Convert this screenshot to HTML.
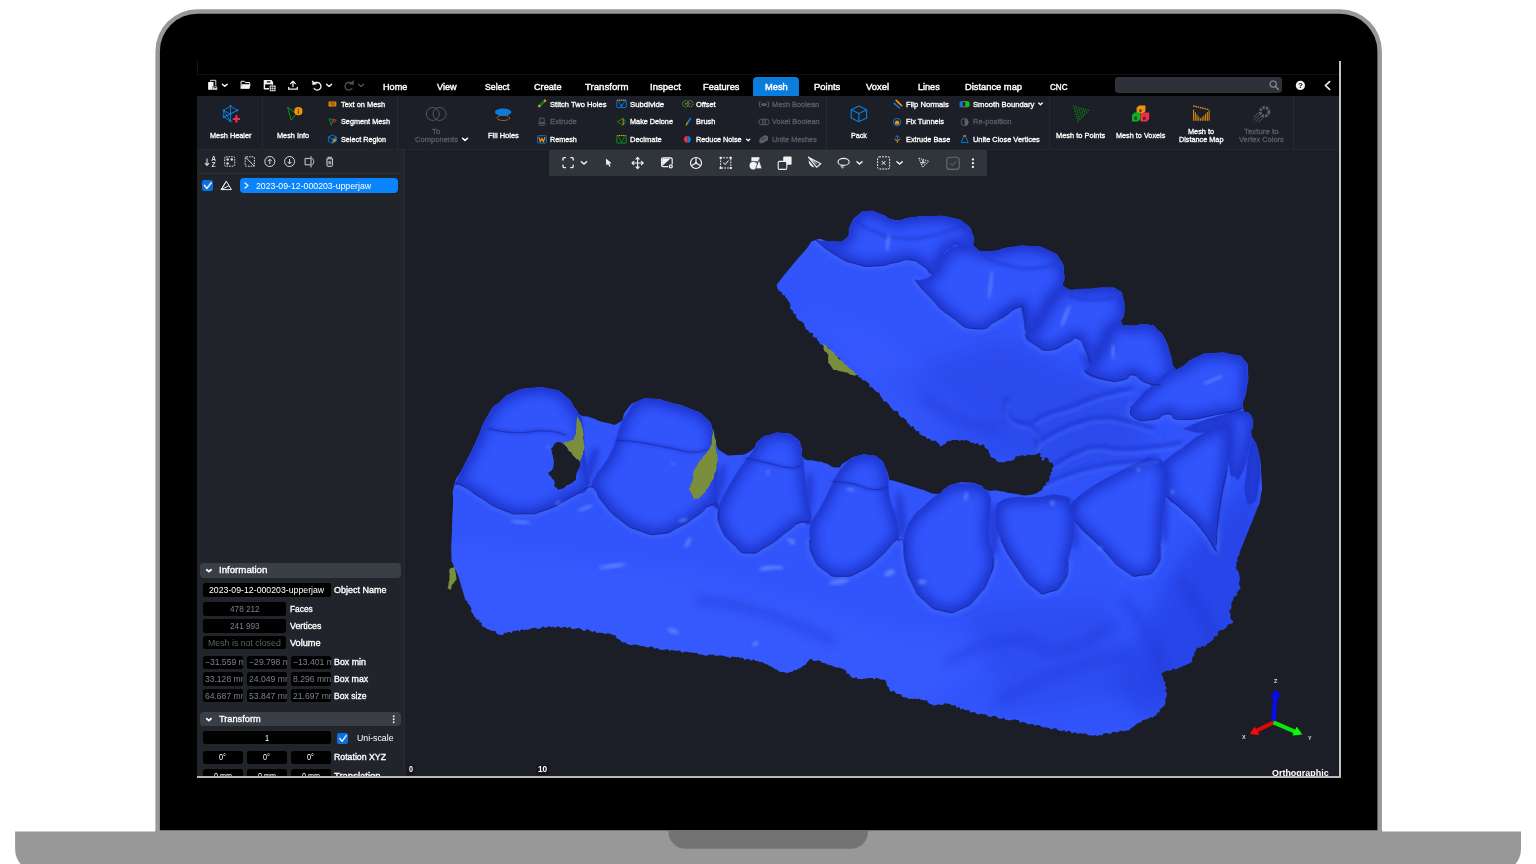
<!DOCTYPE html>
<html><head><meta charset="utf-8"><title>Mesh</title>
<style>
html,body{margin:0;padding:0;background:#fff;width:1536px;height:864px;overflow:hidden}
body{position:relative;font-family:"Liberation Sans",sans-serif}
.r{position:absolute;box-sizing:border-box}
.t{position:absolute;white-space:nowrap;line-height:1;transform-origin:0 0;display:block}
#frame{position:absolute;left:155.5px;top:9px;width:1226.5px;height:840px;background:#000;border:4.5px solid #989898;border-radius:41px 41px 0 0;box-sizing:border-box}
#base{position:absolute;left:15px;top:830.5px;width:1506px;height:42px;background:#989898;border-radius:0 0 23px 23px}
#notch{position:absolute;left:668.5px;top:830.5px;width:199.5px;height:18.3px;background:#737373;border-radius:0 0 17px 17px}
#screen{position:absolute;left:196.5px;top:61px;width:1144.2px;height:717px;overflow:hidden;background:#000}
#in{will-change:transform;position:absolute;left:-196.5px;top:-61px;width:1536px;height:864px}
</style></head><body>
<svg style="position:absolute;left:0;top:0" width="1536" height="864" viewBox="0 0 1536 864">
<path d="M155.4,834 V51.2 A42,42 0 0 1 197.4,9.2 H1339.9 A42,42 0 0 1 1381.9,51.2 V834 Z" fill="#989898"/>
<path d="M159.9,830.5 V51.2 A37.5,37.5 0 0 1 197.4,13.7 H1339.9 A37.5,37.5 0 0 1 1377.4,51.2 V830.5 Z" fill="#000"/>
</svg>
<div id="screen"><div id="in">
<div class="r" style="left:196.50px;top:61.00px;width:1144.50px;height:13.50px;background:#000;border-radius:0;border-left:1px solid #151515;border-bottom:1px solid #101214;"></div>
<div class="r" style="left:196.50px;top:74.50px;width:1144.50px;height:21.50px;background:#000;border-radius:0;"></div>
<div class="r" style="left:196.50px;top:96.00px;width:1144.50px;height:53.50px;background:#1c1f27;border-radius:0;border-bottom:1px solid #23272e;"></div>
<div class="r" style="left:404.50px;top:150.00px;width:936.50px;height:628.00px;background:#1b1e27;border-radius:0;"></div>
<div class="r" style="left:196.50px;top:150.00px;width:208.00px;height:628.00px;background:#21252b;border-radius:0;border-right:1px solid #272b32;"></div>
<svg class="r" style="left:404.5px;top:150px" width="935" height="627" viewBox="404.5 150 935 627"><defs><filter id="b1" x="-20%" y="-20%" width="140%" height="140%"><feGaussianBlur stdDeviation="0.45"/></filter><filter id="b2" x="-30%" y="-30%" width="160%" height="160%"><feGaussianBlur stdDeviation="1.4"/></filter><filter id="b3" x="-50%" y="-50%" width="200%" height="200%"><feGaussianBlur stdDeviation="2.8"/></filter><filter id="b5" x="-50%" y="-50%" width="200%" height="200%"><feGaussianBlur stdDeviation="4.5"/></filter><filter id="b8" x="-50%" y="-50%" width="200%" height="200%"><feGaussianBlur stdDeviation="10"/></filter><clipPath id="mc"><path d="M465.0,600.0C464.0,596.7 464.5,598.3 462.0,590.0C459.5,581.7 460.5,583.3 457.5,575.0C454.5,566.7 455.2,571.7 453.0,565.0C450.8,558.3 451.5,566.7 451.0,555.0C450.5,543.3 451.0,546.7 451.5,530.0C452.0,513.3 451.7,520.0 452.5,505.0C453.3,490.0 450.5,497.5 453.8,485.0C457.1,472.5 455.4,481.7 462.5,467.5C469.6,453.3 466.7,460.0 475.0,442.5C483.3,425.0 479.2,428.8 487.5,415.0C495.8,401.2 491.7,408.5 500.0,401.0C508.3,393.5 502.5,396.8 512.5,392.5C522.5,388.2 517.5,389.2 530.0,388.0C542.5,386.8 538.3,386.1 550.0,388.8C561.7,391.5 556.7,389.3 565.0,396.0C573.3,402.7 570.0,402.5 575.0,408.8C580.0,415.1 575.0,412.1 580.0,415.0C585.0,417.9 581.7,415.0 590.0,417.5C598.3,420.0 595.4,420.8 605.0,422.5C614.6,424.2 611.8,426.7 618.8,422.5C625.8,418.3 619.8,417.2 626.0,410.0C632.2,402.8 628.7,404.7 637.5,401.0C646.3,397.3 641.7,398.3 652.5,398.8C663.3,399.3 657.5,399.2 670.0,402.5C682.5,405.8 678.3,403.8 690.0,408.8C701.7,413.8 697.5,410.4 705.0,417.5C712.5,424.6 709.2,421.7 712.5,430.0C715.8,438.3 711.7,435.0 715.0,442.5C718.3,450.0 715.8,448.3 722.5,452.5C729.2,456.7 725.8,455.5 735.0,455.0C744.2,454.5 742.1,456.0 750.0,451.0C757.9,446.0 752.1,445.5 758.8,440.0C765.5,434.5 762.1,436.8 770.0,434.5C777.9,432.2 774.2,432.0 782.5,433.0C790.8,434.0 788.8,432.7 795.0,437.5C801.2,442.3 798.5,440.8 801.0,447.5C803.5,454.2 797.8,453.0 802.5,457.5C807.2,462.0 807.8,459.2 815.0,461.0C822.2,462.8 816.8,460.8 824.0,463.0C831.2,465.2 829.8,467.7 836.5,467.5C843.2,467.3 837.3,466.3 844.0,462.5C850.7,458.7 848.2,458.5 856.5,456.0C864.8,453.5 861.5,454.1 869.0,455.0C876.5,455.9 873.7,454.6 879.0,458.8C884.3,463.0 881.7,460.4 885.0,467.5C888.3,474.6 887.7,475.8 889.0,480.0C892.3,480.8 889.0,479.6 899.0,482.5C909.0,485.4 906.5,485.0 919.0,488.8C931.5,492.6 928.2,493.8 936.5,493.8C944.8,493.8 938.2,492.1 944.0,488.8C949.8,485.5 946.5,485.9 954.0,483.8C961.5,481.7 958.2,482.1 966.5,482.5C974.8,482.9 972.3,482.5 979.0,485.0C985.7,487.5 979.8,488.0 986.5,490.0C993.2,492.0 989.8,489.7 999.0,491.0C1008.2,492.3 1004.0,492.5 1014.0,493.8C1024.0,495.1 1019.8,496.3 1029.0,495.0C1038.2,493.7 1037.3,491.7 1041.5,490.0L1041.5,490.0L1042.3,488.0L1043.2,486.0L1045.6,485.3L1045.5,482.6L1047.8,481.7L1049.0,480.0L1049.2,478.1L1049.0,476.1L1050.9,474.8L1050.2,472.5L1051.9,471.2L1051.5,469.1L1052.2,467.3L1054.0,466.0L1052.6,464.7L1052.2,462.5L1049.4,462.5L1048.4,460.9L1048.0,458.7L1046.5,457.5L1044.2,457.6L1043.4,459.7L1042.0,461.0L1041.1,459.4L1042.1,457.1L1038.9,456.4L1040.6,453.8L1039.0,452.5L1037.2,453.6L1035.3,454.5L1033.3,455.1L1031.1,455.1L1029.0,455.0L1026.8,454.2L1024.9,456.3L1022.7,455.3L1020.6,455.3L1018.6,456.2L1016.5,456.0L1014.9,456.9L1014.2,459.1L1012.7,460.1L1011.0,460.7L1009.0,461.0L1006.9,460.8L1005.0,461.8L1003.1,462.5L1001.0,461.9L999.0,462.5L997.4,461.6L995.7,461.0L995.0,458.8L993.3,458.0L991.5,457.5L989.8,456.3L989.5,454.1L988.3,452.5L988.2,450.3L986.7,448.9L984.5,448.0L984.0,446.0L982.6,444.0L979.9,445.8L978.3,444.4L976.7,442.8L974.3,443.9L972.7,442.3L970.4,442.9L969.0,441.0L967.1,440.4L965.2,440.0L963.2,440.4L961.3,439.4L959.2,441.0L957.4,439.7L955.4,439.9L953.5,439.9L951.5,440.0L949.9,441.1L947.6,441.1L945.8,441.9L944.9,444.1L942.9,444.6L941.5,446.0L939.3,446.2L938.6,443.7L936.9,442.9L935.9,441.1L934.0,440.6L931.6,441.1L930.2,439.9L929.0,438.3L926.5,439.1L925.5,437.0L924.0,436.0L921.9,435.7L920.4,434.7L918.8,433.7L918.7,430.9L916.0,431.3L914.8,429.8L913.6,428.4L913.0,426.1L910.1,426.9L909.3,424.9L908.0,423.5L906.5,422.5L906.0,420.3L904.5,419.1L903.2,417.7L900.6,417.6L899.6,415.9L898.1,414.7L897.9,412.3L896.7,410.8L893.6,411.1L892.4,409.7L891.1,408.3L889.8,406.9L889.0,405.0L887.6,403.7L886.5,402.1L884.4,401.4L882.5,400.6L882.0,398.4L880.5,397.1L879.6,395.3L879.1,393.1L877.1,392.3L875.4,391.3L874.0,390.0L872.8,388.5L871.6,387.1L868.9,387.2L869.2,384.1L867.6,383.1L866.3,381.7L864.8,380.6L862.6,380.2L861.2,379.0L860.0,377.5L857.8,377.1L857.4,374.7L854.8,374.7L853.4,373.5L852.3,371.9L850.8,370.8L849.7,369.1L847.7,368.5L846.2,367.4L845.0,365.8L843.5,364.6L842.6,362.8L840.5,362.3L840.0,360.0L839.3,357.9L837.3,357.2L834.9,357.1L833.7,355.6L832.4,354.1L831.0,352.8L829.1,352.1L829.0,349.2L827.8,347.6L825.4,347.6L823.9,346.3L822.5,345.0L820.3,344.5L819.0,343.2L818.1,341.3L816.6,340.1L816.5,337.6L813.7,337.6L812.1,336.6L812.7,333.3L810.4,332.8L808.3,332.3L807.8,330.1L805.3,329.8L805.0,327.5L803.8,325.9L803.6,323.6L802.1,322.3L800.5,321.1L798.2,320.5L797.2,318.8L795.5,317.6L795.6,315.0L793.8,313.9L792.5,312.5L792.4,310.5L790.4,309.4L789.3,307.9L790.0,305.4L789.6,303.5L788.4,302.0L787.5,300.4L786.7,298.7L785.0,297.5L784.5,295.5L782.1,294.9L781.7,292.8L780.1,291.5L778.2,290.5L777.1,289.0L776.6,286.9L776.0,285.0C780.7,279.2 780.3,279.2 790.0,267.5C799.7,255.8 796.7,259.2 805.0,250.0C813.3,240.8 806.7,243.0 815.0,240.0C823.3,237.0 820.0,241.4 830.0,241.0C840.0,240.6 838.3,244.1 845.0,238.8C851.7,233.5 845.8,232.9 850.0,225.0C854.2,217.1 851.7,219.7 857.5,215.0C863.3,210.3 860.0,211.4 867.5,211.0C875.0,210.6 870.8,210.8 880.0,213.8C889.2,216.8 885.0,218.8 895.0,220.0C905.0,221.2 898.3,218.8 910.0,217.5C921.7,216.2 916.7,216.0 930.0,216.0C943.3,216.0 938.3,214.9 950.0,217.5C961.7,220.1 957.5,218.0 965.0,223.8C972.5,229.6 969.2,227.1 972.5,235.0C975.8,242.9 969.2,242.2 975.0,247.5C980.8,252.8 978.3,251.2 990.0,251.0C1001.7,250.8 996.7,248.7 1010.0,247.0C1023.3,245.3 1017.5,245.0 1030.0,246.0C1042.5,247.0 1037.5,245.3 1047.5,250.0C1057.5,254.7 1054.6,251.7 1060.0,260.0C1065.4,268.3 1062.1,265.8 1063.8,275.0C1065.5,284.2 1057.9,282.9 1065.0,287.5C1072.1,292.1 1071.7,288.8 1085.0,288.8C1098.3,288.8 1094.2,287.1 1105.0,287.5C1115.8,287.9 1111.7,286.7 1117.5,290.0C1123.3,293.3 1120.4,290.0 1122.5,297.5C1124.6,305.0 1124.3,304.2 1123.8,312.5C1123.3,320.8 1118.9,318.2 1121.0,322.5C1123.1,326.8 1121.2,324.8 1130.0,325.5C1138.8,326.2 1138.3,323.0 1147.5,324.5C1156.7,326.0 1151.7,324.8 1157.5,330.0C1163.3,335.2 1160.8,331.7 1165.0,340.0C1169.2,348.3 1167.1,345.8 1170.0,355.0C1172.9,364.2 1170.5,363.3 1173.8,367.5C1177.1,371.7 1172.9,370.8 1180.0,367.5C1187.1,364.2 1184.2,362.3 1195.0,357.5C1205.8,352.7 1200.0,354.0 1212.5,353.0C1225.0,352.0 1222.1,352.2 1232.5,354.5C1242.9,356.8 1238.8,354.0 1243.8,360.0C1248.8,366.0 1246.8,362.5 1247.5,372.5C1248.2,382.5 1247.7,378.3 1246.0,390.0C1244.3,401.7 1241.2,399.2 1242.5,407.5C1243.8,415.8 1246.7,409.2 1250.0,415.0C1253.3,420.8 1252.2,418.3 1252.5,425.0C1252.8,431.7 1249.3,426.7 1251.0,435.0C1252.7,443.3 1254.2,435.8 1257.5,450.0C1260.8,464.2 1260.2,461.7 1261.0,477.5C1261.8,493.3 1262.0,485.8 1260.0,497.5C1258.0,509.2 1259.7,500.0 1255.0,512.5C1250.3,525.0 1251.4,521.7 1246.0,535.0C1240.6,548.3 1241.2,546.7 1238.8,552.5L1238.8,552.5L1238.9,554.7L1237.4,556.6L1236.2,558.5L1237.1,560.9L1235.4,562.7L1236.0,565.0L1235.1,567.3L1235.6,569.3L1237.4,571.1L1238.2,573.1L1238.5,575.1L1239.0,577.1L1239.3,579.2L1238.6,581.4L1238.2,583.6L1238.8,585.6L1240.0,587.5L1239.0,589.3L1237.5,590.9L1236.1,592.5L1236.6,595.2L1234.3,596.2L1232.7,597.7L1232.5,600.0L1231.2,601.9L1230.6,604.0L1230.7,606.3L1230.8,608.6L1228.7,610.2L1228.8,612.5L1229.9,614.3L1229.5,616.8L1229.9,618.9L1232.0,620.4L1232.5,622.5L1230.8,623.8L1228.3,623.6L1226.8,625.2L1225.8,627.5L1224.1,628.7L1222.3,629.7L1220.0,630.0L1217.9,631.0L1216.9,632.9L1217.0,635.6L1214.3,636.2L1212.8,637.6L1212.5,640.0L1210.5,640.7L1209.1,642.5L1207.1,643.1L1205.9,645.1L1204.2,646.4L1201.2,645.4L1200.0,647.5L1196.5,647.5L1195.4,649.3L1195.0,651.3L1193.3,652.9L1193.8,655.3L1192.0,656.8L1191.4,658.8L1191.5,661.0L1190.1,662.6L1188.2,663.4L1186.4,664.3L1184.7,665.3L1182.5,665.4L1181.1,667.1L1179.0,667.5L1177.1,668.3L1175.4,669.5L1172.9,668.1L1171.3,670.1L1169.3,670.4L1167.3,670.6L1165.1,670.4L1163.5,672.1L1161.5,672.5L1160.8,674.8L1162.3,676.6L1162.6,678.7L1163.1,680.7L1164.8,682.5L1164.1,684.7L1165.2,686.7L1166.0,688.6L1164.4,691.1L1166.4,692.8L1166.0,695.0L1165.7,697.0L1164.6,698.9L1164.7,701.0L1164.8,703.1L1164.0,705.0L1162.5,706.5L1161.0,708.0L1159.2,709.2L1159.0,712.0L1156.7,712.8L1155.9,714.9L1154.0,716.0L1152.3,717.4L1149.8,717.1L1148.2,718.6L1146.2,719.3L1144.0,719.7L1141.9,720.2L1140.4,722.2L1138.3,722.7L1136.5,723.8L1134.6,725.3L1132.7,726.9L1130.6,728.1L1129.0,730.0L1126.9,730.5L1124.8,730.7L1122.8,731.3L1120.4,730.5L1118.5,731.6L1116.5,732.5L1114.2,731.8L1112.0,732.0L1110.0,734.1L1107.7,733.6L1105.4,732.9L1103.2,733.5L1101.3,735.6L1099.0,735.0L1096.8,735.9L1094.6,734.9L1092.4,735.7L1090.2,735.2L1088.0,735.5L1085.9,733.8L1083.7,733.4L1081.5,734.0L1079.7,732.7L1077.4,734.3L1075.6,732.5L1073.6,732.4L1071.4,733.4L1069.6,731.2L1067.7,730.7L1065.4,732.3L1063.7,730.1L1061.5,731.0L1059.4,730.8L1057.3,730.0L1055.5,728.3L1053.4,728.2L1050.9,729.4L1049.0,728.2L1046.9,727.5L1044.7,727.4L1042.6,727.3L1040.6,726.5L1038.7,724.9L1036.5,725.0L1034.2,725.8L1032.4,724.0L1030.2,723.9L1027.9,724.6L1026.0,723.3L1024.1,722.2L1021.9,722.1L1019.6,722.8L1018.0,720.0L1015.8,720.1L1013.8,719.2L1011.5,720.0L1009.2,720.6L1007.2,719.8L1005.0,720.1L1003.3,717.8L1001.0,718.7L998.8,718.7L996.9,717.6L995.0,715.9L992.9,715.8L990.6,716.9L988.4,716.8L986.5,715.5L984.7,713.9L982.5,714.3L980.5,713.5L978.1,714.5L976.0,714.1L974.3,712.0L972.1,712.2L969.9,712.6L968.4,709.9L966.1,710.2L964.0,710.0L962.4,708.5L959.8,709.5L958.7,706.8L956.1,707.9L955.0,705.3L952.7,705.5L950.7,705.0L949.0,703.8L946.8,703.7L944.6,702.9L942.5,704.7L940.3,705.1L938.1,704.2L935.9,705.0L933.7,705.4L931.5,704.5L929.2,703.7L927.4,702.4L926.5,700.0L924.4,700.5L922.4,700.0L920.4,699.8L918.6,698.3L916.4,699.3L914.5,698.5L912.4,699.1L910.5,698.4L908.3,699.0L906.5,697.5L904.3,697.3L902.1,697.0L900.9,694.4L898.8,694.0L896.5,694.1L894.8,692.6L893.3,690.6L890.5,691.8L889.0,690.0L888.7,687.5L886.8,685.9L886.0,683.7L885.8,681.2L884.0,679.5L882.0,679.7L879.9,679.2L877.9,678.6L876.0,677.7L873.8,679.3L871.9,677.9L869.8,678.1L867.8,678.1L865.7,678.6L863.7,678.6L861.6,679.3L859.6,679.0L857.5,679.0L855.6,677.1L853.5,678.3L851.5,677.5L849.5,676.1L849.0,673.8L846.4,673.5L845.5,670.5L843.5,669.2L841.2,668.4L839.0,667.5L836.7,667.4L834.5,666.9L832.4,666.1L830.4,665.0L828.0,665.1L826.1,663.8L824.0,663.0L821.7,663.1L819.9,660.8L817.8,660.3L815.3,660.9L813.0,661.1L811.2,658.8L808.8,659.5L807.7,661.3L806.1,662.6L805.3,664.7L803.1,665.4L801.5,666.6L800.0,668.0L797.9,668.6L795.9,670.0L793.6,669.9L791.8,671.8L789.5,671.8L787.4,672.9L785.0,672.5L782.8,671.9L780.4,671.9L778.3,671.2L776.5,669.6L774.3,669.0L772.5,667.5L770.7,666.5L768.8,665.8L767.1,664.5L765.2,663.9L763.3,662.9L761.6,661.7L759.3,662.1L757.5,661.0L755.2,661.1L753.3,659.0L750.8,660.8L748.8,658.9L746.6,658.8L744.2,659.9L742.3,657.5L740.0,658.0L738.0,656.8L735.9,657.3L733.8,656.8L731.7,656.5L729.5,658.0L727.5,656.8L725.4,656.7L723.4,655.7L721.3,655.6L719.2,655.3L717.1,655.8L715.0,655.8L713.1,654.5L710.9,654.8L708.8,654.5L706.6,655.4L704.4,655.6L702.4,655.1L700.4,654.2L698.2,654.6L696.4,652.5L694.2,652.9L692.1,652.4L690.0,652.5L688.0,651.9L685.9,651.5L683.7,651.8L681.5,652.8L679.7,650.5L677.6,650.4L675.4,650.7L673.3,650.4L671.3,649.8L669.0,651.1L667.2,649.1L665.0,649.5L662.8,649.8L660.7,650.0L658.7,649.2L656.7,647.7L654.5,648.8L652.6,647.1L650.6,646.2L648.3,647.2L646.2,647.2L644.2,646.6L642.1,645.8L640.0,646.0L637.9,644.9L635.7,644.8L633.5,644.3L631.0,645.3L628.9,644.7L626.7,644.0L624.8,642.3L622.5,642.5L620.6,641.4L619.6,639.4L617.1,638.9L615.7,637.3L615.0,635.0L612.8,635.3L610.9,633.9L608.8,633.5L606.7,633.2L604.5,633.9L602.5,633.0L600.4,632.8L598.3,632.4L596.1,633.0L594.3,630.7L592.0,632.1L590.0,631.0L588.1,629.4L586.0,629.2L583.6,631.2L581.6,629.8L579.7,628.5L577.7,627.8L575.4,628.8L573.2,628.9L571.1,628.7L569.3,626.5L567.0,628.1L565.0,627.0L563.0,626.8L561.0,628.0L559.0,627.0L557.0,626.0L555.0,628.1L553.0,626.4L551.0,627.2L549.0,626.3L547.0,626.8L545.0,628.0L543.0,626.3L541.0,627.4L539.0,628.7L537.0,628.8L535.0,627.5L533.0,627.9L531.0,628.3L529.1,629.1L527.2,629.8L525.1,629.6L523.1,630.1L520.8,629.1L519.2,631.6L516.9,630.0L515.0,631.0L512.6,630.7L511.0,633.1L508.3,631.6L506.3,632.8L504.0,632.8L502.3,635.0L500.0,635.0L498.0,634.4L496.1,633.4L495.0,631.0L492.6,631.0L490.5,630.6L488.7,629.5L486.6,629.0L485.0,627.5L482.7,626.9L481.4,625.4L481.3,622.6L478.9,622.2L478.7,619.6L476.0,619.4L475.0,617.5L473.5,616.1L473.0,614.0L471.3,612.7L470.7,610.7L471.0,608.2L469.9,606.5L468.7,604.8L467.3,603.3L466.9,601.2L465.0,600.0Z"/></clipPath><clipPath id="cT1"><path d="M453.8,485.0C456.7,479.2 455.4,481.7 462.5,467.5C469.6,453.3 466.7,460.0 475.0,442.5C483.3,425.0 479.2,428.8 487.5,415.0C495.8,401.2 491.7,408.5 500.0,401.0C508.3,393.5 502.5,396.8 512.5,392.5C522.5,388.2 517.5,389.2 530.0,388.0C542.5,386.8 538.3,386.1 550.0,388.8C561.7,391.5 556.7,389.3 565.0,396.0C573.3,402.7 570.0,402.5 575.0,408.8C580.0,415.1 577.3,407.9 580.0,415.0C582.7,422.1 581.7,418.3 583.0,430.0C584.3,441.7 583.0,436.7 584.0,450.0C585.0,463.3 584.8,457.5 586.0,470.0C587.2,482.5 592.8,478.3 587.5,487.5C582.2,496.7 584.2,490.0 570.0,497.5C555.8,505.0 560.8,504.6 545.0,510.0C529.2,515.4 536.7,513.8 522.5,513.8C508.3,513.8 516.7,515.4 502.5,510.0C488.3,504.6 492.5,505.0 480.0,497.5C467.5,490.0 473.7,491.7 465.0,487.5C456.3,483.3 457.5,485.8 453.8,485.0Z"/></clipPath><clipPath id="cT2"><path d="M590.0,487.5C591.7,483.5 590.8,483.0 595.1,475.5C599.4,468.0 597.7,472.9 602.9,465.1C608.1,457.3 606.4,460.8 610.7,452.1C615.0,443.4 612.9,447.8 615.9,439.1C618.9,430.4 616.3,434.4 619.8,426.0C623.3,417.6 620.5,422.3 626.4,414.0C632.3,405.7 628.8,406.1 637.5,401.0C646.2,395.9 641.7,398.3 652.5,398.8C663.3,399.3 657.5,399.2 670.0,402.5C682.5,405.8 678.3,403.8 690.0,408.8C701.7,413.8 697.5,410.4 705.0,417.5C712.5,424.6 709.2,421.7 712.5,430.0C715.8,438.3 713.5,430.8 715.0,442.5C716.5,454.2 716.7,449.2 717.0,465.0C717.3,480.8 715.8,475.8 716.0,490.0C716.2,504.2 719.9,502.2 717.5,507.5C715.1,512.8 715.5,503.5 708.8,506.0C702.1,508.5 707.9,507.8 697.5,515.0C687.1,522.2 690.0,521.2 677.5,527.5C665.0,533.8 672.5,532.6 660.0,533.8C647.5,535.0 653.3,535.6 640.0,531.0C626.7,526.4 632.5,529.5 620.0,520.0C607.5,510.5 610.8,512.5 602.5,502.5C594.2,492.5 599.2,495.0 595.0,490.0C590.8,485.0 591.7,488.3 590.0,487.5Z"/></clipPath><clipPath id="cT3"><path d="M717.5,507.5C720.8,500.8 720.0,500.8 727.5,487.5C735.0,474.2 731.7,479.7 740.0,467.5C748.3,455.3 746.2,460.2 752.5,451.0C758.8,441.8 753.0,445.5 758.8,440.0C764.6,434.5 762.1,436.8 770.0,434.5C777.9,432.2 774.2,432.0 782.5,433.0C790.8,434.0 788.8,432.7 795.0,437.5C801.2,442.3 798.5,440.8 801.0,447.5C803.5,454.2 801.2,446.7 802.5,457.5C803.8,468.3 803.3,465.8 805.0,480.0C806.7,494.2 805.8,486.0 807.5,500.0C809.2,514.0 812.9,514.3 810.0,522.0C807.1,529.7 806.4,520.0 798.8,523.0C791.2,526.0 798.0,523.4 787.2,531.1C776.4,538.8 779.5,538.9 766.4,546.2C753.3,553.5 758.7,553.5 747.9,553.1C737.1,552.7 743.3,553.9 734.0,545.0C724.7,536.1 725.5,539.0 720.0,526.5C714.5,514.0 718.3,513.8 717.5,507.5Z"/></clipPath><clipPath id="cT4"><path d="M810.4,521.9C814.3,515.7 814.3,517.3 822.0,503.4C829.7,489.5 826.7,492.6 833.6,480.2C840.5,467.8 836.6,473.6 842.8,466.3C849.0,459.0 843.6,462.1 852.1,458.2C860.6,454.3 859.0,454.3 868.3,454.7C877.6,455.1 873.7,453.2 879.9,459.4C886.1,465.6 883.7,461.0 886.8,473.3C889.9,485.6 886.0,481.0 889.1,496.4C892.2,511.8 893.0,504.9 896.1,519.6C899.2,534.3 899.2,533.1 898.4,540.4C897.6,547.7 900.0,536.2 893.8,541.6C887.6,547.0 890.7,547.0 879.9,556.6C869.1,566.2 874.4,563.9 861.3,570.5C848.2,577.1 852.8,576.3 840.5,576.3C828.2,576.3 833.6,577.1 824.3,570.5C815.0,563.9 817.7,566.6 812.7,556.6C807.7,546.6 810.0,552.0 809.2,540.4C808.4,528.8 810.0,528.1 810.4,521.9Z"/></clipPath><clipPath id="cT5"><path d="M903.0,542.7C903.8,538.8 902.2,539.6 905.3,531.1C908.4,522.6 906.1,525.7 912.3,517.2C918.5,508.7 915.4,513.4 923.9,505.7C932.4,498.0 929.2,500.7 937.7,494.1C946.2,487.5 940.8,489.5 949.3,486.0C957.8,482.5 953.2,483.7 963.2,483.7C973.2,483.7 970.9,482.5 979.4,486.0C987.9,489.5 985.2,485.2 988.7,494.1C992.2,503.0 989.8,498.7 989.8,512.6C989.8,526.5 987.5,520.4 988.7,535.8C989.9,551.2 993.3,545.0 993.3,558.9C993.3,572.8 994.1,565.0 988.7,577.4C983.3,589.8 986.4,585.6 977.1,596.0C967.8,606.4 972.5,603.7 960.9,608.7C949.3,613.7 954.7,613.7 942.4,611.0C930.1,608.3 933.9,609.5 923.9,600.6C913.9,591.7 918.5,596.7 912.3,584.4C906.1,572.1 908.4,577.5 905.3,563.6C902.2,549.7 903.8,549.7 903.0,542.7Z"/></clipPath><clipPath id="cT6"><path d="M997.0,503.0C1002.0,501.1 999.6,499.3 1011.9,497.4C1024.2,495.5 1018.0,498.0 1034.0,497.4C1050.0,496.8 1047.6,492.5 1060.0,495.6C1072.4,498.7 1066.8,494.4 1071.1,506.7C1075.4,519.0 1074.2,514.1 1073.0,532.6C1071.8,551.1 1070.5,546.2 1067.4,562.2C1064.3,578.2 1069.9,570.8 1063.7,580.7C1057.5,590.6 1058.8,589.4 1048.9,591.9C1039.0,594.4 1045.1,596.8 1034.0,588.1C1022.9,579.4 1026.7,581.9 1015.6,565.9C1004.5,549.9 1007.5,556.0 1000.7,540.0C993.9,524.0 996.4,530.1 995.2,517.8C994.0,505.5 996.4,507.9 997.0,503.0Z"/></clipPath><clipPath id="cT7"><path d="M1071.1,503.0C1077.3,498.0 1074.8,498.0 1089.6,488.1C1104.4,478.2 1099.5,481.9 1115.6,473.3C1131.7,464.7 1125.5,467.1 1137.8,462.2C1150.1,457.3 1144.0,457.3 1152.6,458.5C1161.2,459.7 1159.4,456.0 1163.7,465.9C1168.0,475.8 1166.2,470.8 1165.6,488.1C1165.0,505.4 1163.8,498.0 1161.9,517.8C1160.0,537.6 1161.9,531.4 1160.0,547.4C1158.1,563.4 1162.5,556.6 1156.3,565.9C1150.1,575.2 1152.6,574.0 1141.5,575.2C1130.4,576.4 1136.6,578.9 1123.0,569.6C1109.4,560.3 1116.8,563.4 1100.7,547.4C1084.6,531.4 1084.7,536.3 1074.8,521.5C1064.9,506.7 1072.3,509.2 1071.1,503.0Z"/></clipPath><clipPath id="cT8"><path d="M1161.9,462.2C1168.7,457.3 1168.0,457.3 1182.2,447.4C1196.4,437.5 1190.8,439.4 1204.4,432.6C1218.0,425.8 1215.0,425.8 1223.0,427.0C1231.0,428.2 1227.3,422.1 1228.5,436.3C1229.7,450.5 1229.8,446.1 1226.7,469.6C1223.6,493.1 1223.0,483.2 1219.3,506.7C1215.6,530.2 1216.8,525.2 1215.6,540.0C1214.4,554.8 1220.6,554.8 1215.6,551.1C1210.6,547.4 1211.8,542.5 1200.7,528.9C1189.6,515.3 1193.9,521.5 1182.2,510.4C1170.5,499.3 1171.1,505.7 1165.6,495.6C1160.1,485.5 1166.8,491.1 1165.6,480.0C1164.4,468.9 1163.1,468.1 1161.9,462.2Z"/></clipPath><clipPath id="cT9"><path d="M1252.6,436.3C1254.4,440.9 1255.5,441.4 1258.0,450.0C1260.5,458.6 1260.0,449.5 1260.0,462.2C1260.0,474.9 1260.5,474.4 1258.0,488.0C1255.5,501.6 1256.9,500.5 1252.6,503.0C1248.3,505.5 1247.2,506.6 1245.0,495.6C1242.8,484.6 1244.7,485.2 1246.0,470.0C1247.3,454.8 1246.8,461.2 1249.0,450.0C1251.2,438.8 1251.4,440.9 1252.6,436.3Z"/></clipPath><clipPath id="cU1"><path d="M815.0,240.0C820.0,240.3 820.0,241.4 830.0,241.0C840.0,240.6 838.3,244.1 845.0,238.8C851.7,233.5 845.8,232.9 850.0,225.0C854.2,217.1 851.7,219.7 857.5,215.0C863.3,210.3 860.0,211.4 867.5,211.0C875.0,210.6 870.8,210.8 880.0,213.8C889.2,216.8 885.0,218.8 895.0,220.0C905.0,221.2 898.3,218.8 910.0,217.5C921.7,216.2 916.7,216.0 930.0,216.0C943.3,216.0 938.3,214.9 950.0,217.5C961.7,220.1 957.5,218.0 965.0,223.8C972.5,229.6 969.2,227.1 972.5,235.0C975.8,242.9 978.5,243.8 975.0,247.5C971.5,251.2 970.3,246.0 962.0,246.0C953.7,246.0 957.3,242.8 950.0,247.5C942.7,252.2 945.8,251.2 940.0,260.0C934.2,268.8 938.3,271.8 932.5,273.8C926.7,275.8 930.0,270.6 922.5,266.0C915.0,261.4 919.2,261.2 910.0,260.0C900.8,258.8 906.7,260.5 895.0,262.5C883.3,264.5 888.3,265.6 875.0,266.0C861.7,266.4 868.3,267.5 855.0,263.8C841.7,260.1 848.3,262.9 835.0,255.0C821.7,247.1 821.7,245.0 815.0,240.0Z"/></clipPath><clipPath id="cU2"><path d="M950.0,247.5C954.0,247.0 953.7,246.0 962.0,246.0C970.3,246.0 965.7,245.8 975.0,247.5C984.3,249.2 978.3,251.2 990.0,251.0C1001.7,250.8 996.7,248.7 1010.0,247.0C1023.3,245.3 1017.5,245.0 1030.0,246.0C1042.5,247.0 1037.5,245.3 1047.5,250.0C1057.5,254.7 1054.6,251.7 1060.0,260.0C1065.4,268.3 1062.1,265.8 1063.8,275.0C1065.5,284.2 1066.3,282.5 1065.0,287.5C1063.7,292.5 1065.8,284.2 1060.0,290.0C1054.2,295.8 1055.8,292.5 1047.5,305.0C1039.2,317.5 1042.5,317.5 1035.0,327.5C1027.5,337.5 1028.3,334.2 1025.0,335.0C1021.7,335.8 1025.8,337.5 1025.0,330.0C1024.2,322.5 1025.0,320.0 1022.5,312.5C1020.0,305.0 1025.8,305.0 1017.5,307.5C1009.2,310.0 1011.7,312.9 997.5,320.0C983.3,327.1 990.8,330.1 975.0,328.8C959.2,327.5 965.0,326.4 950.0,316.0C935.0,305.6 941.7,309.5 930.0,297.5C918.3,285.5 918.3,285.8 915.0,280.0C911.7,274.2 914.2,282.1 920.0,280.0C925.8,277.9 925.8,280.5 932.5,273.8C939.2,267.1 934.2,268.8 940.0,260.0C945.8,251.2 946.7,251.7 950.0,247.5Z"/></clipPath><clipPath id="cU3"><path d="M1060.0,290.0C1061.7,289.2 1056.7,287.9 1065.0,287.5C1073.3,287.1 1071.7,288.8 1085.0,288.8C1098.3,288.8 1094.2,287.1 1105.0,287.5C1115.8,287.9 1111.7,286.7 1117.5,290.0C1123.3,293.3 1120.4,290.0 1122.5,297.5C1124.6,305.0 1124.3,304.2 1123.8,312.5C1123.3,320.8 1125.6,316.7 1121.0,322.5C1116.4,328.3 1117.0,320.8 1110.0,330.0C1103.0,339.2 1106.7,338.3 1100.0,350.0C1093.3,361.7 1095.0,365.0 1090.0,365.0C1085.0,365.0 1089.2,358.7 1085.0,350.0C1080.8,341.3 1083.3,341.3 1077.5,338.8C1071.7,336.3 1076.7,338.8 1067.5,342.5C1058.3,346.2 1060.8,349.2 1050.0,350.0C1039.2,350.8 1043.3,350.0 1035.0,345.0C1026.7,340.0 1025.0,340.8 1025.0,335.0C1025.0,329.2 1027.5,337.5 1035.0,327.5C1042.5,317.5 1039.2,317.5 1047.5,305.0C1055.8,292.5 1055.8,295.0 1060.0,290.0Z"/></clipPath><clipPath id="cU4"><path d="M1120.0,322.5C1123.3,323.5 1120.8,324.8 1130.0,325.5C1139.2,326.2 1138.3,323.0 1147.5,324.5C1156.7,326.0 1151.7,324.8 1157.5,330.0C1163.3,335.2 1160.8,331.7 1165.0,340.0C1169.2,348.3 1167.1,345.8 1170.0,355.0C1172.9,364.2 1172.5,362.5 1173.8,367.5C1175.1,372.5 1178.4,364.2 1173.8,370.0C1169.2,375.8 1169.6,380.8 1160.0,385.0C1150.4,389.2 1154.2,385.8 1145.0,382.5C1135.8,379.2 1140.0,375.8 1132.5,375.0C1125.0,374.2 1131.7,378.3 1122.5,380.0C1113.3,381.7 1117.5,382.5 1105.0,380.0C1092.5,377.5 1090.0,377.5 1085.0,372.5C1080.0,367.5 1085.0,372.5 1090.0,365.0C1095.0,357.5 1093.3,361.7 1100.0,350.0C1106.7,338.3 1103.3,339.2 1110.0,330.0C1116.7,320.8 1116.7,325.0 1120.0,322.5Z"/></clipPath><clipPath id="cU5"><path d="M1130.4,406.7C1137.8,399.3 1138.1,397.3 1152.6,384.4C1167.1,371.5 1164.7,373.6 1173.8,368.0C1182.9,362.4 1172.9,371.0 1180.0,367.5C1187.1,364.0 1184.2,362.3 1195.0,357.5C1205.8,352.7 1200.0,354.0 1212.5,353.0C1225.0,352.0 1222.1,352.2 1232.5,354.5C1242.9,356.8 1238.8,354.0 1243.8,360.0C1248.8,366.0 1246.8,362.5 1247.5,372.5C1248.2,382.5 1248.0,378.0 1246.0,390.0C1244.0,402.0 1250.4,400.5 1241.5,408.5C1232.6,416.5 1239.1,410.3 1219.3,414.0C1199.5,417.7 1199.5,419.6 1182.2,419.6C1164.9,419.6 1177.3,414.0 1167.4,414.0C1157.5,414.0 1163.7,418.3 1152.6,419.6C1141.5,420.9 1141.4,422.1 1134.0,417.8C1126.6,413.5 1131.6,410.4 1130.4,406.7Z"/></clipPath><clipPath id="cU6"><path d="M1182.2,428.9C1192.1,425.2 1190.9,424.0 1211.9,417.8C1232.9,411.6 1231.6,410.4 1245.2,410.4C1258.8,410.4 1250.3,410.6 1252.6,417.8C1254.9,425.0 1253.2,422.1 1252.0,432.0C1250.8,441.9 1252.4,433.6 1248.9,447.4C1245.4,461.2 1246.5,463.4 1241.5,473.3C1236.5,483.2 1238.3,479.4 1234.0,477.0C1229.7,474.6 1230.3,479.6 1228.5,466.0C1226.7,452.4 1230.3,449.3 1228.5,436.3C1226.7,423.3 1231.0,428.2 1223.0,427.0C1215.0,425.8 1218.0,432.0 1204.4,432.6C1190.8,433.2 1189.6,430.1 1182.2,428.9Z"/></clipPath></defs><path d="M465.0,600.0C464.0,596.7 464.5,598.3 462.0,590.0C459.5,581.7 460.5,583.3 457.5,575.0C454.5,566.7 455.2,571.7 453.0,565.0C450.8,558.3 451.5,566.7 451.0,555.0C450.5,543.3 451.0,546.7 451.5,530.0C452.0,513.3 451.7,520.0 452.5,505.0C453.3,490.0 450.5,497.5 453.8,485.0C457.1,472.5 455.4,481.7 462.5,467.5C469.6,453.3 466.7,460.0 475.0,442.5C483.3,425.0 479.2,428.8 487.5,415.0C495.8,401.2 491.7,408.5 500.0,401.0C508.3,393.5 502.5,396.8 512.5,392.5C522.5,388.2 517.5,389.2 530.0,388.0C542.5,386.8 538.3,386.1 550.0,388.8C561.7,391.5 556.7,389.3 565.0,396.0C573.3,402.7 570.0,402.5 575.0,408.8C580.0,415.1 575.0,412.1 580.0,415.0C585.0,417.9 581.7,415.0 590.0,417.5C598.3,420.0 595.4,420.8 605.0,422.5C614.6,424.2 611.8,426.7 618.8,422.5C625.8,418.3 619.8,417.2 626.0,410.0C632.2,402.8 628.7,404.7 637.5,401.0C646.3,397.3 641.7,398.3 652.5,398.8C663.3,399.3 657.5,399.2 670.0,402.5C682.5,405.8 678.3,403.8 690.0,408.8C701.7,413.8 697.5,410.4 705.0,417.5C712.5,424.6 709.2,421.7 712.5,430.0C715.8,438.3 711.7,435.0 715.0,442.5C718.3,450.0 715.8,448.3 722.5,452.5C729.2,456.7 725.8,455.5 735.0,455.0C744.2,454.5 742.1,456.0 750.0,451.0C757.9,446.0 752.1,445.5 758.8,440.0C765.5,434.5 762.1,436.8 770.0,434.5C777.9,432.2 774.2,432.0 782.5,433.0C790.8,434.0 788.8,432.7 795.0,437.5C801.2,442.3 798.5,440.8 801.0,447.5C803.5,454.2 797.8,453.0 802.5,457.5C807.2,462.0 807.8,459.2 815.0,461.0C822.2,462.8 816.8,460.8 824.0,463.0C831.2,465.2 829.8,467.7 836.5,467.5C843.2,467.3 837.3,466.3 844.0,462.5C850.7,458.7 848.2,458.5 856.5,456.0C864.8,453.5 861.5,454.1 869.0,455.0C876.5,455.9 873.7,454.6 879.0,458.8C884.3,463.0 881.7,460.4 885.0,467.5C888.3,474.6 887.7,475.8 889.0,480.0C892.3,480.8 889.0,479.6 899.0,482.5C909.0,485.4 906.5,485.0 919.0,488.8C931.5,492.6 928.2,493.8 936.5,493.8C944.8,493.8 938.2,492.1 944.0,488.8C949.8,485.5 946.5,485.9 954.0,483.8C961.5,481.7 958.2,482.1 966.5,482.5C974.8,482.9 972.3,482.5 979.0,485.0C985.7,487.5 979.8,488.0 986.5,490.0C993.2,492.0 989.8,489.7 999.0,491.0C1008.2,492.3 1004.0,492.5 1014.0,493.8C1024.0,495.1 1019.8,496.3 1029.0,495.0C1038.2,493.7 1037.3,491.7 1041.5,490.0L1041.5,490.0L1042.3,488.0L1043.2,486.0L1045.6,485.3L1045.5,482.6L1047.8,481.7L1049.0,480.0L1049.2,478.1L1049.0,476.1L1050.9,474.8L1050.2,472.5L1051.9,471.2L1051.5,469.1L1052.2,467.3L1054.0,466.0L1052.6,464.7L1052.2,462.5L1049.4,462.5L1048.4,460.9L1048.0,458.7L1046.5,457.5L1044.2,457.6L1043.4,459.7L1042.0,461.0L1041.1,459.4L1042.1,457.1L1038.9,456.4L1040.6,453.8L1039.0,452.5L1037.2,453.6L1035.3,454.5L1033.3,455.1L1031.1,455.1L1029.0,455.0L1026.8,454.2L1024.9,456.3L1022.7,455.3L1020.6,455.3L1018.6,456.2L1016.5,456.0L1014.9,456.9L1014.2,459.1L1012.7,460.1L1011.0,460.7L1009.0,461.0L1006.9,460.8L1005.0,461.8L1003.1,462.5L1001.0,461.9L999.0,462.5L997.4,461.6L995.7,461.0L995.0,458.8L993.3,458.0L991.5,457.5L989.8,456.3L989.5,454.1L988.3,452.5L988.2,450.3L986.7,448.9L984.5,448.0L984.0,446.0L982.6,444.0L979.9,445.8L978.3,444.4L976.7,442.8L974.3,443.9L972.7,442.3L970.4,442.9L969.0,441.0L967.1,440.4L965.2,440.0L963.2,440.4L961.3,439.4L959.2,441.0L957.4,439.7L955.4,439.9L953.5,439.9L951.5,440.0L949.9,441.1L947.6,441.1L945.8,441.9L944.9,444.1L942.9,444.6L941.5,446.0L939.3,446.2L938.6,443.7L936.9,442.9L935.9,441.1L934.0,440.6L931.6,441.1L930.2,439.9L929.0,438.3L926.5,439.1L925.5,437.0L924.0,436.0L921.9,435.7L920.4,434.7L918.8,433.7L918.7,430.9L916.0,431.3L914.8,429.8L913.6,428.4L913.0,426.1L910.1,426.9L909.3,424.9L908.0,423.5L906.5,422.5L906.0,420.3L904.5,419.1L903.2,417.7L900.6,417.6L899.6,415.9L898.1,414.7L897.9,412.3L896.7,410.8L893.6,411.1L892.4,409.7L891.1,408.3L889.8,406.9L889.0,405.0L887.6,403.7L886.5,402.1L884.4,401.4L882.5,400.6L882.0,398.4L880.5,397.1L879.6,395.3L879.1,393.1L877.1,392.3L875.4,391.3L874.0,390.0L872.8,388.5L871.6,387.1L868.9,387.2L869.2,384.1L867.6,383.1L866.3,381.7L864.8,380.6L862.6,380.2L861.2,379.0L860.0,377.5L857.8,377.1L857.4,374.7L854.8,374.7L853.4,373.5L852.3,371.9L850.8,370.8L849.7,369.1L847.7,368.5L846.2,367.4L845.0,365.8L843.5,364.6L842.6,362.8L840.5,362.3L840.0,360.0L839.3,357.9L837.3,357.2L834.9,357.1L833.7,355.6L832.4,354.1L831.0,352.8L829.1,352.1L829.0,349.2L827.8,347.6L825.4,347.6L823.9,346.3L822.5,345.0L820.3,344.5L819.0,343.2L818.1,341.3L816.6,340.1L816.5,337.6L813.7,337.6L812.1,336.6L812.7,333.3L810.4,332.8L808.3,332.3L807.8,330.1L805.3,329.8L805.0,327.5L803.8,325.9L803.6,323.6L802.1,322.3L800.5,321.1L798.2,320.5L797.2,318.8L795.5,317.6L795.6,315.0L793.8,313.9L792.5,312.5L792.4,310.5L790.4,309.4L789.3,307.9L790.0,305.4L789.6,303.5L788.4,302.0L787.5,300.4L786.7,298.7L785.0,297.5L784.5,295.5L782.1,294.9L781.7,292.8L780.1,291.5L778.2,290.5L777.1,289.0L776.6,286.9L776.0,285.0C780.7,279.2 780.3,279.2 790.0,267.5C799.7,255.8 796.7,259.2 805.0,250.0C813.3,240.8 806.7,243.0 815.0,240.0C823.3,237.0 820.0,241.4 830.0,241.0C840.0,240.6 838.3,244.1 845.0,238.8C851.7,233.5 845.8,232.9 850.0,225.0C854.2,217.1 851.7,219.7 857.5,215.0C863.3,210.3 860.0,211.4 867.5,211.0C875.0,210.6 870.8,210.8 880.0,213.8C889.2,216.8 885.0,218.8 895.0,220.0C905.0,221.2 898.3,218.8 910.0,217.5C921.7,216.2 916.7,216.0 930.0,216.0C943.3,216.0 938.3,214.9 950.0,217.5C961.7,220.1 957.5,218.0 965.0,223.8C972.5,229.6 969.2,227.1 972.5,235.0C975.8,242.9 969.2,242.2 975.0,247.5C980.8,252.8 978.3,251.2 990.0,251.0C1001.7,250.8 996.7,248.7 1010.0,247.0C1023.3,245.3 1017.5,245.0 1030.0,246.0C1042.5,247.0 1037.5,245.3 1047.5,250.0C1057.5,254.7 1054.6,251.7 1060.0,260.0C1065.4,268.3 1062.1,265.8 1063.8,275.0C1065.5,284.2 1057.9,282.9 1065.0,287.5C1072.1,292.1 1071.7,288.8 1085.0,288.8C1098.3,288.8 1094.2,287.1 1105.0,287.5C1115.8,287.9 1111.7,286.7 1117.5,290.0C1123.3,293.3 1120.4,290.0 1122.5,297.5C1124.6,305.0 1124.3,304.2 1123.8,312.5C1123.3,320.8 1118.9,318.2 1121.0,322.5C1123.1,326.8 1121.2,324.8 1130.0,325.5C1138.8,326.2 1138.3,323.0 1147.5,324.5C1156.7,326.0 1151.7,324.8 1157.5,330.0C1163.3,335.2 1160.8,331.7 1165.0,340.0C1169.2,348.3 1167.1,345.8 1170.0,355.0C1172.9,364.2 1170.5,363.3 1173.8,367.5C1177.1,371.7 1172.9,370.8 1180.0,367.5C1187.1,364.2 1184.2,362.3 1195.0,357.5C1205.8,352.7 1200.0,354.0 1212.5,353.0C1225.0,352.0 1222.1,352.2 1232.5,354.5C1242.9,356.8 1238.8,354.0 1243.8,360.0C1248.8,366.0 1246.8,362.5 1247.5,372.5C1248.2,382.5 1247.7,378.3 1246.0,390.0C1244.3,401.7 1241.2,399.2 1242.5,407.5C1243.8,415.8 1246.7,409.2 1250.0,415.0C1253.3,420.8 1252.2,418.3 1252.5,425.0C1252.8,431.7 1249.3,426.7 1251.0,435.0C1252.7,443.3 1254.2,435.8 1257.5,450.0C1260.8,464.2 1260.2,461.7 1261.0,477.5C1261.8,493.3 1262.0,485.8 1260.0,497.5C1258.0,509.2 1259.7,500.0 1255.0,512.5C1250.3,525.0 1251.4,521.7 1246.0,535.0C1240.6,548.3 1241.2,546.7 1238.8,552.5L1238.8,552.5L1238.9,554.7L1237.4,556.6L1236.2,558.5L1237.1,560.9L1235.4,562.7L1236.0,565.0L1235.1,567.3L1235.6,569.3L1237.4,571.1L1238.2,573.1L1238.5,575.1L1239.0,577.1L1239.3,579.2L1238.6,581.4L1238.2,583.6L1238.8,585.6L1240.0,587.5L1239.0,589.3L1237.5,590.9L1236.1,592.5L1236.6,595.2L1234.3,596.2L1232.7,597.7L1232.5,600.0L1231.2,601.9L1230.6,604.0L1230.7,606.3L1230.8,608.6L1228.7,610.2L1228.8,612.5L1229.9,614.3L1229.5,616.8L1229.9,618.9L1232.0,620.4L1232.5,622.5L1230.8,623.8L1228.3,623.6L1226.8,625.2L1225.8,627.5L1224.1,628.7L1222.3,629.7L1220.0,630.0L1217.9,631.0L1216.9,632.9L1217.0,635.6L1214.3,636.2L1212.8,637.6L1212.5,640.0L1210.5,640.7L1209.1,642.5L1207.1,643.1L1205.9,645.1L1204.2,646.4L1201.2,645.4L1200.0,647.5L1196.5,647.5L1195.4,649.3L1195.0,651.3L1193.3,652.9L1193.8,655.3L1192.0,656.8L1191.4,658.8L1191.5,661.0L1190.1,662.6L1188.2,663.4L1186.4,664.3L1184.7,665.3L1182.5,665.4L1181.1,667.1L1179.0,667.5L1177.1,668.3L1175.4,669.5L1172.9,668.1L1171.3,670.1L1169.3,670.4L1167.3,670.6L1165.1,670.4L1163.5,672.1L1161.5,672.5L1160.8,674.8L1162.3,676.6L1162.6,678.7L1163.1,680.7L1164.8,682.5L1164.1,684.7L1165.2,686.7L1166.0,688.6L1164.4,691.1L1166.4,692.8L1166.0,695.0L1165.7,697.0L1164.6,698.9L1164.7,701.0L1164.8,703.1L1164.0,705.0L1162.5,706.5L1161.0,708.0L1159.2,709.2L1159.0,712.0L1156.7,712.8L1155.9,714.9L1154.0,716.0L1152.3,717.4L1149.8,717.1L1148.2,718.6L1146.2,719.3L1144.0,719.7L1141.9,720.2L1140.4,722.2L1138.3,722.7L1136.5,723.8L1134.6,725.3L1132.7,726.9L1130.6,728.1L1129.0,730.0L1126.9,730.5L1124.8,730.7L1122.8,731.3L1120.4,730.5L1118.5,731.6L1116.5,732.5L1114.2,731.8L1112.0,732.0L1110.0,734.1L1107.7,733.6L1105.4,732.9L1103.2,733.5L1101.3,735.6L1099.0,735.0L1096.8,735.9L1094.6,734.9L1092.4,735.7L1090.2,735.2L1088.0,735.5L1085.9,733.8L1083.7,733.4L1081.5,734.0L1079.7,732.7L1077.4,734.3L1075.6,732.5L1073.6,732.4L1071.4,733.4L1069.6,731.2L1067.7,730.7L1065.4,732.3L1063.7,730.1L1061.5,731.0L1059.4,730.8L1057.3,730.0L1055.5,728.3L1053.4,728.2L1050.9,729.4L1049.0,728.2L1046.9,727.5L1044.7,727.4L1042.6,727.3L1040.6,726.5L1038.7,724.9L1036.5,725.0L1034.2,725.8L1032.4,724.0L1030.2,723.9L1027.9,724.6L1026.0,723.3L1024.1,722.2L1021.9,722.1L1019.6,722.8L1018.0,720.0L1015.8,720.1L1013.8,719.2L1011.5,720.0L1009.2,720.6L1007.2,719.8L1005.0,720.1L1003.3,717.8L1001.0,718.7L998.8,718.7L996.9,717.6L995.0,715.9L992.9,715.8L990.6,716.9L988.4,716.8L986.5,715.5L984.7,713.9L982.5,714.3L980.5,713.5L978.1,714.5L976.0,714.1L974.3,712.0L972.1,712.2L969.9,712.6L968.4,709.9L966.1,710.2L964.0,710.0L962.4,708.5L959.8,709.5L958.7,706.8L956.1,707.9L955.0,705.3L952.7,705.5L950.7,705.0L949.0,703.8L946.8,703.7L944.6,702.9L942.5,704.7L940.3,705.1L938.1,704.2L935.9,705.0L933.7,705.4L931.5,704.5L929.2,703.7L927.4,702.4L926.5,700.0L924.4,700.5L922.4,700.0L920.4,699.8L918.6,698.3L916.4,699.3L914.5,698.5L912.4,699.1L910.5,698.4L908.3,699.0L906.5,697.5L904.3,697.3L902.1,697.0L900.9,694.4L898.8,694.0L896.5,694.1L894.8,692.6L893.3,690.6L890.5,691.8L889.0,690.0L888.7,687.5L886.8,685.9L886.0,683.7L885.8,681.2L884.0,679.5L882.0,679.7L879.9,679.2L877.9,678.6L876.0,677.7L873.8,679.3L871.9,677.9L869.8,678.1L867.8,678.1L865.7,678.6L863.7,678.6L861.6,679.3L859.6,679.0L857.5,679.0L855.6,677.1L853.5,678.3L851.5,677.5L849.5,676.1L849.0,673.8L846.4,673.5L845.5,670.5L843.5,669.2L841.2,668.4L839.0,667.5L836.7,667.4L834.5,666.9L832.4,666.1L830.4,665.0L828.0,665.1L826.1,663.8L824.0,663.0L821.7,663.1L819.9,660.8L817.8,660.3L815.3,660.9L813.0,661.1L811.2,658.8L808.8,659.5L807.7,661.3L806.1,662.6L805.3,664.7L803.1,665.4L801.5,666.6L800.0,668.0L797.9,668.6L795.9,670.0L793.6,669.9L791.8,671.8L789.5,671.8L787.4,672.9L785.0,672.5L782.8,671.9L780.4,671.9L778.3,671.2L776.5,669.6L774.3,669.0L772.5,667.5L770.7,666.5L768.8,665.8L767.1,664.5L765.2,663.9L763.3,662.9L761.6,661.7L759.3,662.1L757.5,661.0L755.2,661.1L753.3,659.0L750.8,660.8L748.8,658.9L746.6,658.8L744.2,659.9L742.3,657.5L740.0,658.0L738.0,656.8L735.9,657.3L733.8,656.8L731.7,656.5L729.5,658.0L727.5,656.8L725.4,656.7L723.4,655.7L721.3,655.6L719.2,655.3L717.1,655.8L715.0,655.8L713.1,654.5L710.9,654.8L708.8,654.5L706.6,655.4L704.4,655.6L702.4,655.1L700.4,654.2L698.2,654.6L696.4,652.5L694.2,652.9L692.1,652.4L690.0,652.5L688.0,651.9L685.9,651.5L683.7,651.8L681.5,652.8L679.7,650.5L677.6,650.4L675.4,650.7L673.3,650.4L671.3,649.8L669.0,651.1L667.2,649.1L665.0,649.5L662.8,649.8L660.7,650.0L658.7,649.2L656.7,647.7L654.5,648.8L652.6,647.1L650.6,646.2L648.3,647.2L646.2,647.2L644.2,646.6L642.1,645.8L640.0,646.0L637.9,644.9L635.7,644.8L633.5,644.3L631.0,645.3L628.9,644.7L626.7,644.0L624.8,642.3L622.5,642.5L620.6,641.4L619.6,639.4L617.1,638.9L615.7,637.3L615.0,635.0L612.8,635.3L610.9,633.9L608.8,633.5L606.7,633.2L604.5,633.9L602.5,633.0L600.4,632.8L598.3,632.4L596.1,633.0L594.3,630.7L592.0,632.1L590.0,631.0L588.1,629.4L586.0,629.2L583.6,631.2L581.6,629.8L579.7,628.5L577.7,627.8L575.4,628.8L573.2,628.9L571.1,628.7L569.3,626.5L567.0,628.1L565.0,627.0L563.0,626.8L561.0,628.0L559.0,627.0L557.0,626.0L555.0,628.1L553.0,626.4L551.0,627.2L549.0,626.3L547.0,626.8L545.0,628.0L543.0,626.3L541.0,627.4L539.0,628.7L537.0,628.8L535.0,627.5L533.0,627.9L531.0,628.3L529.1,629.1L527.2,629.8L525.1,629.6L523.1,630.1L520.8,629.1L519.2,631.6L516.9,630.0L515.0,631.0L512.6,630.7L511.0,633.1L508.3,631.6L506.3,632.8L504.0,632.8L502.3,635.0L500.0,635.0L498.0,634.4L496.1,633.4L495.0,631.0L492.6,631.0L490.5,630.6L488.7,629.5L486.6,629.0L485.0,627.5L482.7,626.9L481.4,625.4L481.3,622.6L478.9,622.2L478.7,619.6L476.0,619.4L475.0,617.5L473.5,616.1L473.0,614.0L471.3,612.7L470.7,610.7L471.0,608.2L469.9,606.5L468.7,604.8L467.3,603.3L466.9,601.2L465.0,600.0Z" fill="#3154fb"/><g clip-path="url(#mc)"><g filter="url(#b8)"><path d="M440,540 L700,570 L900,630 L1000,640 L900,740 L440,700Z" fill="#3a60ff" opacity=".45"/><path d="M880,380 L1000,340 L1140,400 L1150,450 L1060,480 L960,445Z" fill="#2641e2" opacity=".55"/><path d="M1180,560 L1250,480 L1275,560 L1235,650 L1150,720 L1110,690Z" fill="#2440e0" opacity=".7"/><path d="M960,610 L1100,600 L1150,690 L1010,715Z" fill="#2845e8" opacity=".5"/><path d="M790,300 L880,330 L1000,440 L900,420Z" fill="#3a5fff" opacity=".35"/></g><path d="M453.8,482.5C457.5,484.2 456.3,482.5 465.0,487.5C473.7,492.5 467.5,490.0 480.0,497.5C492.5,505.0 488.3,504.6 502.5,510.0C516.7,515.4 508.3,513.8 522.5,513.8C536.7,513.8 529.2,515.4 545.0,510.0C560.8,504.6 555.8,505.0 570.0,497.5C584.2,490.0 579.2,490.0 587.5,487.5C595.8,485.0 590.0,485.0 595.0,490.0C600.0,495.0 594.2,492.5 602.5,502.5C610.8,512.5 607.5,510.5 620.0,520.0C632.5,529.5 626.7,526.4 640.0,531.0C653.3,535.6 647.5,535.0 660.0,533.8C672.5,532.6 665.0,533.8 677.5,527.5C690.0,521.2 687.1,522.2 697.5,515.0C707.9,507.8 702.1,508.5 708.8,506.0C715.5,503.5 713.8,500.7 717.5,507.5C721.2,514.3 714.5,514.0 720.0,526.5C725.5,539.0 724.7,536.1 734.0,545.0C743.3,553.9 737.1,552.7 747.9,553.1C758.7,553.5 753.3,553.5 766.4,546.2C779.5,538.9 776.4,538.8 787.2,531.1C798.0,523.4 791.1,526.0 798.8,523.0C806.5,520.0 806.5,522.3 810.4,522.0" fill="none" stroke="#4f78ff" stroke-width="7" opacity=".42" filter="url(#b3)" stroke-linecap="round"/><path d="M809.2,540.4C810.4,545.8 807.7,546.6 812.7,556.6C817.7,566.6 815.0,563.9 824.3,570.5C833.6,577.1 828.2,576.3 840.5,576.3C852.8,576.3 848.2,577.1 861.3,570.5C874.4,563.9 869.1,566.2 879.9,556.6C890.7,547.0 887.6,547.0 893.8,541.6C900.0,536.2 895.3,540.0 898.4,540.4C901.5,540.8 900.7,535.0 903.0,542.7C905.3,550.4 902.2,549.7 905.3,563.6C908.4,577.5 906.1,572.1 912.3,584.4C918.5,596.7 913.9,591.7 923.9,600.6C933.9,609.5 930.1,608.3 942.4,611.0C954.7,613.7 949.3,613.7 960.9,608.7C972.5,603.7 967.8,606.4 977.1,596.0C986.4,585.6 983.3,589.8 988.7,577.4C994.1,565.0 991.8,565.1 993.3,558.9" fill="none" stroke="#4f78ff" stroke-width="7" opacity=".42" filter="url(#b3)" stroke-linecap="round"/><path d="M1000.7,540.0C1005.7,548.6 1004.5,549.9 1015.6,565.9C1026.7,581.9 1022.9,579.4 1034.0,588.1C1045.1,596.8 1039.0,594.4 1048.9,591.9C1058.8,589.4 1057.5,590.6 1063.7,580.7C1069.9,570.8 1066.2,568.4 1067.4,562.2" fill="none" stroke="#4f78ff" stroke-width="7" opacity=".42" filter="url(#b3)" stroke-linecap="round"/><path d="M1074.8,521.5C1083.4,530.1 1084.6,531.4 1100.7,547.4C1116.8,563.4 1109.4,560.3 1123.0,569.6C1136.6,578.9 1130.4,576.4 1141.5,575.2C1152.6,574.0 1150.1,575.2 1156.3,565.9C1162.5,556.6 1158.8,553.6 1160.0,547.4" fill="none" stroke="#4f78ff" stroke-width="7" opacity=".42" filter="url(#b3)" stroke-linecap="round"/><path d="M1165.6,495.6C1171.1,500.5 1170.5,499.3 1182.2,510.4C1193.9,521.5 1189.6,515.3 1200.7,528.9C1211.8,542.5 1210.6,543.7 1215.6,551.1" fill="none" stroke="#4f78ff" stroke-width="7" opacity=".42" filter="url(#b3)" stroke-linecap="round"/><path d="M1215.6,545.0C1216.8,532.2 1215.6,531.8 1219.3,506.7C1223.0,481.6 1224.2,482.0 1226.7,469.6" fill="none" stroke="#4f78ff" stroke-width="7" opacity=".42" filter="url(#b3)" stroke-linecap="round"/><path d="M815.0,240.0C821.7,245.0 821.7,247.1 835.0,255.0C848.3,262.9 841.7,260.1 855.0,263.8C868.3,267.5 861.7,266.4 875.0,266.0C888.3,265.6 883.3,264.5 895.0,262.5C906.7,260.5 900.8,258.8 910.0,260.0C919.2,261.2 915.0,261.4 922.5,266.0C930.0,270.6 929.2,271.2 932.5,273.8" fill="none" stroke="#4f78ff" stroke-width="7" opacity=".42" filter="url(#b3)" stroke-linecap="round"/><path d="M915.0,280.0C920.0,285.8 918.3,285.5 930.0,297.5C941.7,309.5 935.0,305.6 950.0,316.0C965.0,326.4 959.2,327.5 975.0,328.8C990.8,330.1 983.3,327.1 997.5,320.0C1011.7,312.9 1009.2,310.0 1017.5,307.5C1025.8,305.0 1020.0,305.0 1022.5,312.5C1025.0,320.0 1024.2,324.2 1025.0,330.0" fill="none" stroke="#4f78ff" stroke-width="7" opacity=".42" filter="url(#b3)" stroke-linecap="round"/><path d="M1025.0,335.0C1028.3,338.3 1026.7,340.0 1035.0,345.0C1043.3,350.0 1039.2,350.8 1050.0,350.0C1060.8,349.2 1058.3,346.2 1067.5,342.5C1076.7,338.8 1071.7,336.3 1077.5,338.8C1083.3,341.3 1080.8,342.3 1085.0,350.0C1089.2,357.7 1088.3,358.0 1090.0,362.0" fill="none" stroke="#4f78ff" stroke-width="7" opacity=".42" filter="url(#b3)" stroke-linecap="round"/><path d="M1085.0,372.5C1091.7,375.0 1092.5,377.5 1105.0,380.0C1117.5,382.5 1113.3,381.7 1122.5,380.0C1131.7,378.3 1125.0,374.2 1132.5,375.0C1140.0,375.8 1135.8,379.2 1145.0,382.5C1154.2,385.8 1155.0,384.2 1160.0,385.0" fill="none" stroke="#4f78ff" stroke-width="7" opacity=".42" filter="url(#b3)" stroke-linecap="round"/><path d="M1130.4,406.7C1131.6,410.4 1126.6,413.5 1134.0,417.8C1141.4,422.1 1141.5,420.9 1152.6,419.6C1163.7,418.3 1157.5,414.0 1167.4,414.0C1177.3,414.0 1164.9,419.6 1182.2,419.6C1199.5,419.6 1199.5,417.7 1219.3,414.0C1239.1,410.3 1234.1,410.3 1241.5,408.5" fill="none" stroke="#4f78ff" stroke-width="7" opacity=".42" filter="url(#b3)" stroke-linecap="round"/><ellipse cx="590" cy="466" rx="5" ry="20" transform="rotate(18 590 466)" fill="#1a2fc0" opacity=".6" filter="url(#b3)"/><ellipse cx="718" cy="486" rx="5" ry="22" transform="rotate(14 718 486)" fill="#1a2fc0" opacity=".6" filter="url(#b3)"/><ellipse cx="808" cy="496" rx="4.5" ry="24" transform="rotate(4 808 496)" fill="#1a2fc0" opacity=".6" filter="url(#b3)"/><ellipse cx="900" cy="516" rx="4.5" ry="24" transform="rotate(-4 900 516)" fill="#1a2fc0" opacity=".6" filter="url(#b3)"/><ellipse cx="993" cy="530" rx="4.5" ry="26" transform="rotate(-2 993 530)" fill="#1a2fc0" opacity=".6" filter="url(#b3)"/><ellipse cx="1073" cy="528" rx="4" ry="22" transform="rotate(-6 1073 528)" fill="#1a2fc0" opacity=".6" filter="url(#b3)"/><ellipse cx="1163" cy="512" rx="4" ry="30" transform="rotate(-2 1163 512)" fill="#1a2fc0" opacity=".6" filter="url(#b3)"/><ellipse cx="1218" cy="500" rx="4" ry="30" transform="rotate(6 1218 500)" fill="#1a2fc0" opacity=".6" filter="url(#b3)"/><ellipse cx="936" cy="268" rx="6" ry="10" transform="rotate(-30 936 268)" fill="#1a2fc0" opacity=".6" filter="url(#b3)"/><ellipse cx="1030" cy="322" rx="6" ry="12" transform="rotate(-20 1030 322)" fill="#1a2fc0" opacity=".6" filter="url(#b3)"/><ellipse cx="1088" cy="362" rx="5" ry="10" transform="rotate(-20 1088 362)" fill="#1a2fc0" opacity=".6" filter="url(#b3)"/><ellipse cx="1150" cy="396" rx="6" ry="8" transform="rotate(-50 1150 396)" fill="#1a2fc0" opacity=".6" filter="url(#b3)"/><g clip-path="url(#cT1)"><path d="M453.8,485.0C456.7,479.2 455.4,481.7 462.5,467.5C469.6,453.3 466.7,460.0 475.0,442.5C483.3,425.0 479.2,428.8 487.5,415.0C495.8,401.2 491.7,408.5 500.0,401.0C508.3,393.5 502.5,396.8 512.5,392.5C522.5,388.2 517.5,389.2 530.0,388.0C542.5,386.8 538.3,386.1 550.0,388.8C561.7,391.5 556.7,389.3 565.0,396.0C573.3,402.7 570.0,402.5 575.0,408.8C580.0,415.1 577.3,407.9 580.0,415.0C582.7,422.1 581.7,418.3 583.0,430.0C584.3,441.7 583.0,436.7 584.0,450.0C585.0,463.3 584.8,457.5 586.0,470.0C587.2,482.5 592.8,478.3 587.5,487.5C582.2,496.7 584.2,490.0 570.0,497.5C555.8,505.0 560.8,504.6 545.0,510.0C529.2,515.4 536.7,513.8 522.5,513.8C508.3,513.8 516.7,515.4 502.5,510.0C488.3,504.6 492.5,505.0 480.0,497.5C467.5,490.0 473.7,491.7 465.0,487.5C456.3,483.3 457.5,485.8 453.8,485.0Z" fill="#3154fb"/><path d="M453.8,485.0C456.7,479.2 455.4,481.7 462.5,467.5C469.6,453.3 466.7,460.0 475.0,442.5C483.3,425.0 479.2,428.8 487.5,415.0C495.8,401.2 491.7,408.5 500.0,401.0C508.3,393.5 502.5,396.8 512.5,392.5C522.5,388.2 517.5,389.2 530.0,388.0C542.5,386.8 538.3,386.1 550.0,388.8C561.7,391.5 556.7,389.3 565.0,396.0C573.3,402.7 570.0,402.5 575.0,408.8C580.0,415.1 577.3,407.9 580.0,415.0C582.7,422.1 581.7,418.3 583.0,430.0C584.3,441.7 583.0,436.7 584.0,450.0C585.0,463.3 584.8,457.5 586.0,470.0C587.2,482.5 592.8,478.3 587.5,487.5C582.2,496.7 584.2,490.0 570.0,497.5C555.8,505.0 560.8,504.6 545.0,510.0C529.2,515.4 536.7,513.8 522.5,513.8C508.3,513.8 516.7,515.4 502.5,510.0C488.3,504.6 492.5,505.0 480.0,497.5C467.5,490.0 473.7,491.7 465.0,487.5C456.3,483.3 457.5,485.8 453.8,485.0Z" fill="none" stroke="#1a30c6" stroke-width="15" opacity=".72" filter="url(#b5)"/><path d="M453.8,485.0C456.7,479.2 455.4,481.7 462.5,467.5C469.6,453.3 466.7,460.0 475.0,442.5C483.3,425.0 479.2,428.8 487.5,415.0C495.8,401.2 491.7,408.5 500.0,401.0C508.3,393.5 502.5,396.8 512.5,392.5C522.5,388.2 517.5,389.2 530.0,388.0C542.5,386.8 538.3,386.1 550.0,388.8C561.7,391.5 556.7,389.3 565.0,396.0C573.3,402.7 570.0,402.5 575.0,408.8C580.0,415.1 577.3,407.9 580.0,415.0C582.7,422.1 581.7,418.3 583.0,430.0C584.3,441.7 583.0,436.7 584.0,450.0C585.0,463.3 584.8,457.5 586.0,470.0C587.2,482.5 592.8,478.3 587.5,487.5C582.2,496.7 584.2,490.0 570.0,497.5C555.8,505.0 560.8,504.6 545.0,510.0C529.2,515.4 536.7,513.8 522.5,513.8C508.3,513.8 516.7,515.4 502.5,510.0C488.3,504.6 492.5,505.0 480.0,497.5C467.5,490.0 473.7,491.7 465.0,487.5C456.3,483.3 457.5,485.8 453.8,485.0Z" fill="none" stroke="#1a30c0" stroke-width="3" opacity=".35" filter="url(#b2)"/></g><g clip-path="url(#cT2)"><path d="M590.0,487.5C591.7,483.5 590.8,483.0 595.1,475.5C599.4,468.0 597.7,472.9 602.9,465.1C608.1,457.3 606.4,460.8 610.7,452.1C615.0,443.4 612.9,447.8 615.9,439.1C618.9,430.4 616.3,434.4 619.8,426.0C623.3,417.6 620.5,422.3 626.4,414.0C632.3,405.7 628.8,406.1 637.5,401.0C646.2,395.9 641.7,398.3 652.5,398.8C663.3,399.3 657.5,399.2 670.0,402.5C682.5,405.8 678.3,403.8 690.0,408.8C701.7,413.8 697.5,410.4 705.0,417.5C712.5,424.6 709.2,421.7 712.5,430.0C715.8,438.3 713.5,430.8 715.0,442.5C716.5,454.2 716.7,449.2 717.0,465.0C717.3,480.8 715.8,475.8 716.0,490.0C716.2,504.2 719.9,502.2 717.5,507.5C715.1,512.8 715.5,503.5 708.8,506.0C702.1,508.5 707.9,507.8 697.5,515.0C687.1,522.2 690.0,521.2 677.5,527.5C665.0,533.8 672.5,532.6 660.0,533.8C647.5,535.0 653.3,535.6 640.0,531.0C626.7,526.4 632.5,529.5 620.0,520.0C607.5,510.5 610.8,512.5 602.5,502.5C594.2,492.5 599.2,495.0 595.0,490.0C590.8,485.0 591.7,488.3 590.0,487.5Z" fill="#3154fb"/><path d="M590.0,487.5C591.7,483.5 590.8,483.0 595.1,475.5C599.4,468.0 597.7,472.9 602.9,465.1C608.1,457.3 606.4,460.8 610.7,452.1C615.0,443.4 612.9,447.8 615.9,439.1C618.9,430.4 616.3,434.4 619.8,426.0C623.3,417.6 620.5,422.3 626.4,414.0C632.3,405.7 628.8,406.1 637.5,401.0C646.2,395.9 641.7,398.3 652.5,398.8C663.3,399.3 657.5,399.2 670.0,402.5C682.5,405.8 678.3,403.8 690.0,408.8C701.7,413.8 697.5,410.4 705.0,417.5C712.5,424.6 709.2,421.7 712.5,430.0C715.8,438.3 713.5,430.8 715.0,442.5C716.5,454.2 716.7,449.2 717.0,465.0C717.3,480.8 715.8,475.8 716.0,490.0C716.2,504.2 719.9,502.2 717.5,507.5C715.1,512.8 715.5,503.5 708.8,506.0C702.1,508.5 707.9,507.8 697.5,515.0C687.1,522.2 690.0,521.2 677.5,527.5C665.0,533.8 672.5,532.6 660.0,533.8C647.5,535.0 653.3,535.6 640.0,531.0C626.7,526.4 632.5,529.5 620.0,520.0C607.5,510.5 610.8,512.5 602.5,502.5C594.2,492.5 599.2,495.0 595.0,490.0C590.8,485.0 591.7,488.3 590.0,487.5Z" fill="none" stroke="#1a30c6" stroke-width="15" opacity=".72" filter="url(#b5)"/><path d="M590.0,487.5C591.7,483.5 590.8,483.0 595.1,475.5C599.4,468.0 597.7,472.9 602.9,465.1C608.1,457.3 606.4,460.8 610.7,452.1C615.0,443.4 612.9,447.8 615.9,439.1C618.9,430.4 616.3,434.4 619.8,426.0C623.3,417.6 620.5,422.3 626.4,414.0C632.3,405.7 628.8,406.1 637.5,401.0C646.2,395.9 641.7,398.3 652.5,398.8C663.3,399.3 657.5,399.2 670.0,402.5C682.5,405.8 678.3,403.8 690.0,408.8C701.7,413.8 697.5,410.4 705.0,417.5C712.5,424.6 709.2,421.7 712.5,430.0C715.8,438.3 713.5,430.8 715.0,442.5C716.5,454.2 716.7,449.2 717.0,465.0C717.3,480.8 715.8,475.8 716.0,490.0C716.2,504.2 719.9,502.2 717.5,507.5C715.1,512.8 715.5,503.5 708.8,506.0C702.1,508.5 707.9,507.8 697.5,515.0C687.1,522.2 690.0,521.2 677.5,527.5C665.0,533.8 672.5,532.6 660.0,533.8C647.5,535.0 653.3,535.6 640.0,531.0C626.7,526.4 632.5,529.5 620.0,520.0C607.5,510.5 610.8,512.5 602.5,502.5C594.2,492.5 599.2,495.0 595.0,490.0C590.8,485.0 591.7,488.3 590.0,487.5Z" fill="none" stroke="#1a30c0" stroke-width="3" opacity=".35" filter="url(#b2)"/></g><g clip-path="url(#cT3)"><path d="M717.5,507.5C720.8,500.8 720.0,500.8 727.5,487.5C735.0,474.2 731.7,479.7 740.0,467.5C748.3,455.3 746.2,460.2 752.5,451.0C758.8,441.8 753.0,445.5 758.8,440.0C764.6,434.5 762.1,436.8 770.0,434.5C777.9,432.2 774.2,432.0 782.5,433.0C790.8,434.0 788.8,432.7 795.0,437.5C801.2,442.3 798.5,440.8 801.0,447.5C803.5,454.2 801.2,446.7 802.5,457.5C803.8,468.3 803.3,465.8 805.0,480.0C806.7,494.2 805.8,486.0 807.5,500.0C809.2,514.0 812.9,514.3 810.0,522.0C807.1,529.7 806.4,520.0 798.8,523.0C791.2,526.0 798.0,523.4 787.2,531.1C776.4,538.8 779.5,538.9 766.4,546.2C753.3,553.5 758.7,553.5 747.9,553.1C737.1,552.7 743.3,553.9 734.0,545.0C724.7,536.1 725.5,539.0 720.0,526.5C714.5,514.0 718.3,513.8 717.5,507.5Z" fill="#3154fb"/><path d="M717.5,507.5C720.8,500.8 720.0,500.8 727.5,487.5C735.0,474.2 731.7,479.7 740.0,467.5C748.3,455.3 746.2,460.2 752.5,451.0C758.8,441.8 753.0,445.5 758.8,440.0C764.6,434.5 762.1,436.8 770.0,434.5C777.9,432.2 774.2,432.0 782.5,433.0C790.8,434.0 788.8,432.7 795.0,437.5C801.2,442.3 798.5,440.8 801.0,447.5C803.5,454.2 801.2,446.7 802.5,457.5C803.8,468.3 803.3,465.8 805.0,480.0C806.7,494.2 805.8,486.0 807.5,500.0C809.2,514.0 812.9,514.3 810.0,522.0C807.1,529.7 806.4,520.0 798.8,523.0C791.2,526.0 798.0,523.4 787.2,531.1C776.4,538.8 779.5,538.9 766.4,546.2C753.3,553.5 758.7,553.5 747.9,553.1C737.1,552.7 743.3,553.9 734.0,545.0C724.7,536.1 725.5,539.0 720.0,526.5C714.5,514.0 718.3,513.8 717.5,507.5Z" fill="none" stroke="#1a30c6" stroke-width="15" opacity=".72" filter="url(#b5)"/><path d="M717.5,507.5C720.8,500.8 720.0,500.8 727.5,487.5C735.0,474.2 731.7,479.7 740.0,467.5C748.3,455.3 746.2,460.2 752.5,451.0C758.8,441.8 753.0,445.5 758.8,440.0C764.6,434.5 762.1,436.8 770.0,434.5C777.9,432.2 774.2,432.0 782.5,433.0C790.8,434.0 788.8,432.7 795.0,437.5C801.2,442.3 798.5,440.8 801.0,447.5C803.5,454.2 801.2,446.7 802.5,457.5C803.8,468.3 803.3,465.8 805.0,480.0C806.7,494.2 805.8,486.0 807.5,500.0C809.2,514.0 812.9,514.3 810.0,522.0C807.1,529.7 806.4,520.0 798.8,523.0C791.2,526.0 798.0,523.4 787.2,531.1C776.4,538.8 779.5,538.9 766.4,546.2C753.3,553.5 758.7,553.5 747.9,553.1C737.1,552.7 743.3,553.9 734.0,545.0C724.7,536.1 725.5,539.0 720.0,526.5C714.5,514.0 718.3,513.8 717.5,507.5Z" fill="none" stroke="#1a30c0" stroke-width="3" opacity=".35" filter="url(#b2)"/></g><g clip-path="url(#cT4)"><path d="M810.4,521.9C814.3,515.7 814.3,517.3 822.0,503.4C829.7,489.5 826.7,492.6 833.6,480.2C840.5,467.8 836.6,473.6 842.8,466.3C849.0,459.0 843.6,462.1 852.1,458.2C860.6,454.3 859.0,454.3 868.3,454.7C877.6,455.1 873.7,453.2 879.9,459.4C886.1,465.6 883.7,461.0 886.8,473.3C889.9,485.6 886.0,481.0 889.1,496.4C892.2,511.8 893.0,504.9 896.1,519.6C899.2,534.3 899.2,533.1 898.4,540.4C897.6,547.7 900.0,536.2 893.8,541.6C887.6,547.0 890.7,547.0 879.9,556.6C869.1,566.2 874.4,563.9 861.3,570.5C848.2,577.1 852.8,576.3 840.5,576.3C828.2,576.3 833.6,577.1 824.3,570.5C815.0,563.9 817.7,566.6 812.7,556.6C807.7,546.6 810.0,552.0 809.2,540.4C808.4,528.8 810.0,528.1 810.4,521.9Z" fill="#3154fb"/><path d="M810.4,521.9C814.3,515.7 814.3,517.3 822.0,503.4C829.7,489.5 826.7,492.6 833.6,480.2C840.5,467.8 836.6,473.6 842.8,466.3C849.0,459.0 843.6,462.1 852.1,458.2C860.6,454.3 859.0,454.3 868.3,454.7C877.6,455.1 873.7,453.2 879.9,459.4C886.1,465.6 883.7,461.0 886.8,473.3C889.9,485.6 886.0,481.0 889.1,496.4C892.2,511.8 893.0,504.9 896.1,519.6C899.2,534.3 899.2,533.1 898.4,540.4C897.6,547.7 900.0,536.2 893.8,541.6C887.6,547.0 890.7,547.0 879.9,556.6C869.1,566.2 874.4,563.9 861.3,570.5C848.2,577.1 852.8,576.3 840.5,576.3C828.2,576.3 833.6,577.1 824.3,570.5C815.0,563.9 817.7,566.6 812.7,556.6C807.7,546.6 810.0,552.0 809.2,540.4C808.4,528.8 810.0,528.1 810.4,521.9Z" fill="none" stroke="#1a30c6" stroke-width="15" opacity=".72" filter="url(#b5)"/><path d="M810.4,521.9C814.3,515.7 814.3,517.3 822.0,503.4C829.7,489.5 826.7,492.6 833.6,480.2C840.5,467.8 836.6,473.6 842.8,466.3C849.0,459.0 843.6,462.1 852.1,458.2C860.6,454.3 859.0,454.3 868.3,454.7C877.6,455.1 873.7,453.2 879.9,459.4C886.1,465.6 883.7,461.0 886.8,473.3C889.9,485.6 886.0,481.0 889.1,496.4C892.2,511.8 893.0,504.9 896.1,519.6C899.2,534.3 899.2,533.1 898.4,540.4C897.6,547.7 900.0,536.2 893.8,541.6C887.6,547.0 890.7,547.0 879.9,556.6C869.1,566.2 874.4,563.9 861.3,570.5C848.2,577.1 852.8,576.3 840.5,576.3C828.2,576.3 833.6,577.1 824.3,570.5C815.0,563.9 817.7,566.6 812.7,556.6C807.7,546.6 810.0,552.0 809.2,540.4C808.4,528.8 810.0,528.1 810.4,521.9Z" fill="none" stroke="#1a30c0" stroke-width="3" opacity=".35" filter="url(#b2)"/></g><g clip-path="url(#cT5)"><path d="M903.0,542.7C903.8,538.8 902.2,539.6 905.3,531.1C908.4,522.6 906.1,525.7 912.3,517.2C918.5,508.7 915.4,513.4 923.9,505.7C932.4,498.0 929.2,500.7 937.7,494.1C946.2,487.5 940.8,489.5 949.3,486.0C957.8,482.5 953.2,483.7 963.2,483.7C973.2,483.7 970.9,482.5 979.4,486.0C987.9,489.5 985.2,485.2 988.7,494.1C992.2,503.0 989.8,498.7 989.8,512.6C989.8,526.5 987.5,520.4 988.7,535.8C989.9,551.2 993.3,545.0 993.3,558.9C993.3,572.8 994.1,565.0 988.7,577.4C983.3,589.8 986.4,585.6 977.1,596.0C967.8,606.4 972.5,603.7 960.9,608.7C949.3,613.7 954.7,613.7 942.4,611.0C930.1,608.3 933.9,609.5 923.9,600.6C913.9,591.7 918.5,596.7 912.3,584.4C906.1,572.1 908.4,577.5 905.3,563.6C902.2,549.7 903.8,549.7 903.0,542.7Z" fill="#3154fb"/><path d="M903.0,542.7C903.8,538.8 902.2,539.6 905.3,531.1C908.4,522.6 906.1,525.7 912.3,517.2C918.5,508.7 915.4,513.4 923.9,505.7C932.4,498.0 929.2,500.7 937.7,494.1C946.2,487.5 940.8,489.5 949.3,486.0C957.8,482.5 953.2,483.7 963.2,483.7C973.2,483.7 970.9,482.5 979.4,486.0C987.9,489.5 985.2,485.2 988.7,494.1C992.2,503.0 989.8,498.7 989.8,512.6C989.8,526.5 987.5,520.4 988.7,535.8C989.9,551.2 993.3,545.0 993.3,558.9C993.3,572.8 994.1,565.0 988.7,577.4C983.3,589.8 986.4,585.6 977.1,596.0C967.8,606.4 972.5,603.7 960.9,608.7C949.3,613.7 954.7,613.7 942.4,611.0C930.1,608.3 933.9,609.5 923.9,600.6C913.9,591.7 918.5,596.7 912.3,584.4C906.1,572.1 908.4,577.5 905.3,563.6C902.2,549.7 903.8,549.7 903.0,542.7Z" fill="none" stroke="#1a30c6" stroke-width="15" opacity=".72" filter="url(#b5)"/><path d="M903.0,542.7C903.8,538.8 902.2,539.6 905.3,531.1C908.4,522.6 906.1,525.7 912.3,517.2C918.5,508.7 915.4,513.4 923.9,505.7C932.4,498.0 929.2,500.7 937.7,494.1C946.2,487.5 940.8,489.5 949.3,486.0C957.8,482.5 953.2,483.7 963.2,483.7C973.2,483.7 970.9,482.5 979.4,486.0C987.9,489.5 985.2,485.2 988.7,494.1C992.2,503.0 989.8,498.7 989.8,512.6C989.8,526.5 987.5,520.4 988.7,535.8C989.9,551.2 993.3,545.0 993.3,558.9C993.3,572.8 994.1,565.0 988.7,577.4C983.3,589.8 986.4,585.6 977.1,596.0C967.8,606.4 972.5,603.7 960.9,608.7C949.3,613.7 954.7,613.7 942.4,611.0C930.1,608.3 933.9,609.5 923.9,600.6C913.9,591.7 918.5,596.7 912.3,584.4C906.1,572.1 908.4,577.5 905.3,563.6C902.2,549.7 903.8,549.7 903.0,542.7Z" fill="none" stroke="#1a30c0" stroke-width="3" opacity=".35" filter="url(#b2)"/></g><g clip-path="url(#cT6)"><path d="M997.0,503.0C1002.0,501.1 999.6,499.3 1011.9,497.4C1024.2,495.5 1018.0,498.0 1034.0,497.4C1050.0,496.8 1047.6,492.5 1060.0,495.6C1072.4,498.7 1066.8,494.4 1071.1,506.7C1075.4,519.0 1074.2,514.1 1073.0,532.6C1071.8,551.1 1070.5,546.2 1067.4,562.2C1064.3,578.2 1069.9,570.8 1063.7,580.7C1057.5,590.6 1058.8,589.4 1048.9,591.9C1039.0,594.4 1045.1,596.8 1034.0,588.1C1022.9,579.4 1026.7,581.9 1015.6,565.9C1004.5,549.9 1007.5,556.0 1000.7,540.0C993.9,524.0 996.4,530.1 995.2,517.8C994.0,505.5 996.4,507.9 997.0,503.0Z" fill="#3154fb"/><path d="M997.0,503.0C1002.0,501.1 999.6,499.3 1011.9,497.4C1024.2,495.5 1018.0,498.0 1034.0,497.4C1050.0,496.8 1047.6,492.5 1060.0,495.6C1072.4,498.7 1066.8,494.4 1071.1,506.7C1075.4,519.0 1074.2,514.1 1073.0,532.6C1071.8,551.1 1070.5,546.2 1067.4,562.2C1064.3,578.2 1069.9,570.8 1063.7,580.7C1057.5,590.6 1058.8,589.4 1048.9,591.9C1039.0,594.4 1045.1,596.8 1034.0,588.1C1022.9,579.4 1026.7,581.9 1015.6,565.9C1004.5,549.9 1007.5,556.0 1000.7,540.0C993.9,524.0 996.4,530.1 995.2,517.8C994.0,505.5 996.4,507.9 997.0,503.0Z" fill="none" stroke="#1a30c6" stroke-width="15" opacity=".72" filter="url(#b5)"/><path d="M997.0,503.0C1002.0,501.1 999.6,499.3 1011.9,497.4C1024.2,495.5 1018.0,498.0 1034.0,497.4C1050.0,496.8 1047.6,492.5 1060.0,495.6C1072.4,498.7 1066.8,494.4 1071.1,506.7C1075.4,519.0 1074.2,514.1 1073.0,532.6C1071.8,551.1 1070.5,546.2 1067.4,562.2C1064.3,578.2 1069.9,570.8 1063.7,580.7C1057.5,590.6 1058.8,589.4 1048.9,591.9C1039.0,594.4 1045.1,596.8 1034.0,588.1C1022.9,579.4 1026.7,581.9 1015.6,565.9C1004.5,549.9 1007.5,556.0 1000.7,540.0C993.9,524.0 996.4,530.1 995.2,517.8C994.0,505.5 996.4,507.9 997.0,503.0Z" fill="none" stroke="#1a30c0" stroke-width="3" opacity=".35" filter="url(#b2)"/></g><g clip-path="url(#cT7)"><path d="M1071.1,503.0C1077.3,498.0 1074.8,498.0 1089.6,488.1C1104.4,478.2 1099.5,481.9 1115.6,473.3C1131.7,464.7 1125.5,467.1 1137.8,462.2C1150.1,457.3 1144.0,457.3 1152.6,458.5C1161.2,459.7 1159.4,456.0 1163.7,465.9C1168.0,475.8 1166.2,470.8 1165.6,488.1C1165.0,505.4 1163.8,498.0 1161.9,517.8C1160.0,537.6 1161.9,531.4 1160.0,547.4C1158.1,563.4 1162.5,556.6 1156.3,565.9C1150.1,575.2 1152.6,574.0 1141.5,575.2C1130.4,576.4 1136.6,578.9 1123.0,569.6C1109.4,560.3 1116.8,563.4 1100.7,547.4C1084.6,531.4 1084.7,536.3 1074.8,521.5C1064.9,506.7 1072.3,509.2 1071.1,503.0Z" fill="#3154fb"/><path d="M1071.1,503.0C1077.3,498.0 1074.8,498.0 1089.6,488.1C1104.4,478.2 1099.5,481.9 1115.6,473.3C1131.7,464.7 1125.5,467.1 1137.8,462.2C1150.1,457.3 1144.0,457.3 1152.6,458.5C1161.2,459.7 1159.4,456.0 1163.7,465.9C1168.0,475.8 1166.2,470.8 1165.6,488.1C1165.0,505.4 1163.8,498.0 1161.9,517.8C1160.0,537.6 1161.9,531.4 1160.0,547.4C1158.1,563.4 1162.5,556.6 1156.3,565.9C1150.1,575.2 1152.6,574.0 1141.5,575.2C1130.4,576.4 1136.6,578.9 1123.0,569.6C1109.4,560.3 1116.8,563.4 1100.7,547.4C1084.6,531.4 1084.7,536.3 1074.8,521.5C1064.9,506.7 1072.3,509.2 1071.1,503.0Z" fill="none" stroke="#1a30c6" stroke-width="15" opacity=".72" filter="url(#b5)"/><path d="M1071.1,503.0C1077.3,498.0 1074.8,498.0 1089.6,488.1C1104.4,478.2 1099.5,481.9 1115.6,473.3C1131.7,464.7 1125.5,467.1 1137.8,462.2C1150.1,457.3 1144.0,457.3 1152.6,458.5C1161.2,459.7 1159.4,456.0 1163.7,465.9C1168.0,475.8 1166.2,470.8 1165.6,488.1C1165.0,505.4 1163.8,498.0 1161.9,517.8C1160.0,537.6 1161.9,531.4 1160.0,547.4C1158.1,563.4 1162.5,556.6 1156.3,565.9C1150.1,575.2 1152.6,574.0 1141.5,575.2C1130.4,576.4 1136.6,578.9 1123.0,569.6C1109.4,560.3 1116.8,563.4 1100.7,547.4C1084.6,531.4 1084.7,536.3 1074.8,521.5C1064.9,506.7 1072.3,509.2 1071.1,503.0Z" fill="none" stroke="#1a30c0" stroke-width="3" opacity=".35" filter="url(#b2)"/></g><g clip-path="url(#cT8)"><path d="M1161.9,462.2C1168.7,457.3 1168.0,457.3 1182.2,447.4C1196.4,437.5 1190.8,439.4 1204.4,432.6C1218.0,425.8 1215.0,425.8 1223.0,427.0C1231.0,428.2 1227.3,422.1 1228.5,436.3C1229.7,450.5 1229.8,446.1 1226.7,469.6C1223.6,493.1 1223.0,483.2 1219.3,506.7C1215.6,530.2 1216.8,525.2 1215.6,540.0C1214.4,554.8 1220.6,554.8 1215.6,551.1C1210.6,547.4 1211.8,542.5 1200.7,528.9C1189.6,515.3 1193.9,521.5 1182.2,510.4C1170.5,499.3 1171.1,505.7 1165.6,495.6C1160.1,485.5 1166.8,491.1 1165.6,480.0C1164.4,468.9 1163.1,468.1 1161.9,462.2Z" fill="#3154fb"/><path d="M1161.9,462.2C1168.7,457.3 1168.0,457.3 1182.2,447.4C1196.4,437.5 1190.8,439.4 1204.4,432.6C1218.0,425.8 1215.0,425.8 1223.0,427.0C1231.0,428.2 1227.3,422.1 1228.5,436.3C1229.7,450.5 1229.8,446.1 1226.7,469.6C1223.6,493.1 1223.0,483.2 1219.3,506.7C1215.6,530.2 1216.8,525.2 1215.6,540.0C1214.4,554.8 1220.6,554.8 1215.6,551.1C1210.6,547.4 1211.8,542.5 1200.7,528.9C1189.6,515.3 1193.9,521.5 1182.2,510.4C1170.5,499.3 1171.1,505.7 1165.6,495.6C1160.1,485.5 1166.8,491.1 1165.6,480.0C1164.4,468.9 1163.1,468.1 1161.9,462.2Z" fill="none" stroke="#1a30c6" stroke-width="15" opacity=".72" filter="url(#b5)"/><path d="M1161.9,462.2C1168.7,457.3 1168.0,457.3 1182.2,447.4C1196.4,437.5 1190.8,439.4 1204.4,432.6C1218.0,425.8 1215.0,425.8 1223.0,427.0C1231.0,428.2 1227.3,422.1 1228.5,436.3C1229.7,450.5 1229.8,446.1 1226.7,469.6C1223.6,493.1 1223.0,483.2 1219.3,506.7C1215.6,530.2 1216.8,525.2 1215.6,540.0C1214.4,554.8 1220.6,554.8 1215.6,551.1C1210.6,547.4 1211.8,542.5 1200.7,528.9C1189.6,515.3 1193.9,521.5 1182.2,510.4C1170.5,499.3 1171.1,505.7 1165.6,495.6C1160.1,485.5 1166.8,491.1 1165.6,480.0C1164.4,468.9 1163.1,468.1 1161.9,462.2Z" fill="none" stroke="#1a30c0" stroke-width="3" opacity=".35" filter="url(#b2)"/></g><g clip-path="url(#cT9)"><path d="M1252.6,436.3C1254.4,440.9 1255.5,441.4 1258.0,450.0C1260.5,458.6 1260.0,449.5 1260.0,462.2C1260.0,474.9 1260.5,474.4 1258.0,488.0C1255.5,501.6 1256.9,500.5 1252.6,503.0C1248.3,505.5 1247.2,506.6 1245.0,495.6C1242.8,484.6 1244.7,485.2 1246.0,470.0C1247.3,454.8 1246.8,461.2 1249.0,450.0C1251.2,438.8 1251.4,440.9 1252.6,436.3Z" fill="#3154fb"/><path d="M1252.6,436.3C1254.4,440.9 1255.5,441.4 1258.0,450.0C1260.5,458.6 1260.0,449.5 1260.0,462.2C1260.0,474.9 1260.5,474.4 1258.0,488.0C1255.5,501.6 1256.9,500.5 1252.6,503.0C1248.3,505.5 1247.2,506.6 1245.0,495.6C1242.8,484.6 1244.7,485.2 1246.0,470.0C1247.3,454.8 1246.8,461.2 1249.0,450.0C1251.2,438.8 1251.4,440.9 1252.6,436.3Z" fill="none" stroke="#1a30c6" stroke-width="15" opacity=".72" filter="url(#b5)"/><path d="M1252.6,436.3C1254.4,440.9 1255.5,441.4 1258.0,450.0C1260.5,458.6 1260.0,449.5 1260.0,462.2C1260.0,474.9 1260.5,474.4 1258.0,488.0C1255.5,501.6 1256.9,500.5 1252.6,503.0C1248.3,505.5 1247.2,506.6 1245.0,495.6C1242.8,484.6 1244.7,485.2 1246.0,470.0C1247.3,454.8 1246.8,461.2 1249.0,450.0C1251.2,438.8 1251.4,440.9 1252.6,436.3Z" fill="none" stroke="#1a30c0" stroke-width="3" opacity=".35" filter="url(#b2)"/></g><g clip-path="url(#cU1)"><path d="M815.0,240.0C820.0,240.3 820.0,241.4 830.0,241.0C840.0,240.6 838.3,244.1 845.0,238.8C851.7,233.5 845.8,232.9 850.0,225.0C854.2,217.1 851.7,219.7 857.5,215.0C863.3,210.3 860.0,211.4 867.5,211.0C875.0,210.6 870.8,210.8 880.0,213.8C889.2,216.8 885.0,218.8 895.0,220.0C905.0,221.2 898.3,218.8 910.0,217.5C921.7,216.2 916.7,216.0 930.0,216.0C943.3,216.0 938.3,214.9 950.0,217.5C961.7,220.1 957.5,218.0 965.0,223.8C972.5,229.6 969.2,227.1 972.5,235.0C975.8,242.9 978.5,243.8 975.0,247.5C971.5,251.2 970.3,246.0 962.0,246.0C953.7,246.0 957.3,242.8 950.0,247.5C942.7,252.2 945.8,251.2 940.0,260.0C934.2,268.8 938.3,271.8 932.5,273.8C926.7,275.8 930.0,270.6 922.5,266.0C915.0,261.4 919.2,261.2 910.0,260.0C900.8,258.8 906.7,260.5 895.0,262.5C883.3,264.5 888.3,265.6 875.0,266.0C861.7,266.4 868.3,267.5 855.0,263.8C841.7,260.1 848.3,262.9 835.0,255.0C821.7,247.1 821.7,245.0 815.0,240.0Z" fill="#3154fb"/><path d="M815.0,240.0C820.0,240.3 820.0,241.4 830.0,241.0C840.0,240.6 838.3,244.1 845.0,238.8C851.7,233.5 845.8,232.9 850.0,225.0C854.2,217.1 851.7,219.7 857.5,215.0C863.3,210.3 860.0,211.4 867.5,211.0C875.0,210.6 870.8,210.8 880.0,213.8C889.2,216.8 885.0,218.8 895.0,220.0C905.0,221.2 898.3,218.8 910.0,217.5C921.7,216.2 916.7,216.0 930.0,216.0C943.3,216.0 938.3,214.9 950.0,217.5C961.7,220.1 957.5,218.0 965.0,223.8C972.5,229.6 969.2,227.1 972.5,235.0C975.8,242.9 978.5,243.8 975.0,247.5C971.5,251.2 970.3,246.0 962.0,246.0C953.7,246.0 957.3,242.8 950.0,247.5C942.7,252.2 945.8,251.2 940.0,260.0C934.2,268.8 938.3,271.8 932.5,273.8C926.7,275.8 930.0,270.6 922.5,266.0C915.0,261.4 919.2,261.2 910.0,260.0C900.8,258.8 906.7,260.5 895.0,262.5C883.3,264.5 888.3,265.6 875.0,266.0C861.7,266.4 868.3,267.5 855.0,263.8C841.7,260.1 848.3,262.9 835.0,255.0C821.7,247.1 821.7,245.0 815.0,240.0Z" fill="none" stroke="#1a30c6" stroke-width="15" opacity=".72" filter="url(#b5)"/><path d="M815.0,240.0C820.0,240.3 820.0,241.4 830.0,241.0C840.0,240.6 838.3,244.1 845.0,238.8C851.7,233.5 845.8,232.9 850.0,225.0C854.2,217.1 851.7,219.7 857.5,215.0C863.3,210.3 860.0,211.4 867.5,211.0C875.0,210.6 870.8,210.8 880.0,213.8C889.2,216.8 885.0,218.8 895.0,220.0C905.0,221.2 898.3,218.8 910.0,217.5C921.7,216.2 916.7,216.0 930.0,216.0C943.3,216.0 938.3,214.9 950.0,217.5C961.7,220.1 957.5,218.0 965.0,223.8C972.5,229.6 969.2,227.1 972.5,235.0C975.8,242.9 978.5,243.8 975.0,247.5C971.5,251.2 970.3,246.0 962.0,246.0C953.7,246.0 957.3,242.8 950.0,247.5C942.7,252.2 945.8,251.2 940.0,260.0C934.2,268.8 938.3,271.8 932.5,273.8C926.7,275.8 930.0,270.6 922.5,266.0C915.0,261.4 919.2,261.2 910.0,260.0C900.8,258.8 906.7,260.5 895.0,262.5C883.3,264.5 888.3,265.6 875.0,266.0C861.7,266.4 868.3,267.5 855.0,263.8C841.7,260.1 848.3,262.9 835.0,255.0C821.7,247.1 821.7,245.0 815.0,240.0Z" fill="none" stroke="#1a30c0" stroke-width="3" opacity=".35" filter="url(#b2)"/></g><g clip-path="url(#cU2)"><path d="M950.0,247.5C954.0,247.0 953.7,246.0 962.0,246.0C970.3,246.0 965.7,245.8 975.0,247.5C984.3,249.2 978.3,251.2 990.0,251.0C1001.7,250.8 996.7,248.7 1010.0,247.0C1023.3,245.3 1017.5,245.0 1030.0,246.0C1042.5,247.0 1037.5,245.3 1047.5,250.0C1057.5,254.7 1054.6,251.7 1060.0,260.0C1065.4,268.3 1062.1,265.8 1063.8,275.0C1065.5,284.2 1066.3,282.5 1065.0,287.5C1063.7,292.5 1065.8,284.2 1060.0,290.0C1054.2,295.8 1055.8,292.5 1047.5,305.0C1039.2,317.5 1042.5,317.5 1035.0,327.5C1027.5,337.5 1028.3,334.2 1025.0,335.0C1021.7,335.8 1025.8,337.5 1025.0,330.0C1024.2,322.5 1025.0,320.0 1022.5,312.5C1020.0,305.0 1025.8,305.0 1017.5,307.5C1009.2,310.0 1011.7,312.9 997.5,320.0C983.3,327.1 990.8,330.1 975.0,328.8C959.2,327.5 965.0,326.4 950.0,316.0C935.0,305.6 941.7,309.5 930.0,297.5C918.3,285.5 918.3,285.8 915.0,280.0C911.7,274.2 914.2,282.1 920.0,280.0C925.8,277.9 925.8,280.5 932.5,273.8C939.2,267.1 934.2,268.8 940.0,260.0C945.8,251.2 946.7,251.7 950.0,247.5Z" fill="#3154fb"/><path d="M950.0,247.5C954.0,247.0 953.7,246.0 962.0,246.0C970.3,246.0 965.7,245.8 975.0,247.5C984.3,249.2 978.3,251.2 990.0,251.0C1001.7,250.8 996.7,248.7 1010.0,247.0C1023.3,245.3 1017.5,245.0 1030.0,246.0C1042.5,247.0 1037.5,245.3 1047.5,250.0C1057.5,254.7 1054.6,251.7 1060.0,260.0C1065.4,268.3 1062.1,265.8 1063.8,275.0C1065.5,284.2 1066.3,282.5 1065.0,287.5C1063.7,292.5 1065.8,284.2 1060.0,290.0C1054.2,295.8 1055.8,292.5 1047.5,305.0C1039.2,317.5 1042.5,317.5 1035.0,327.5C1027.5,337.5 1028.3,334.2 1025.0,335.0C1021.7,335.8 1025.8,337.5 1025.0,330.0C1024.2,322.5 1025.0,320.0 1022.5,312.5C1020.0,305.0 1025.8,305.0 1017.5,307.5C1009.2,310.0 1011.7,312.9 997.5,320.0C983.3,327.1 990.8,330.1 975.0,328.8C959.2,327.5 965.0,326.4 950.0,316.0C935.0,305.6 941.7,309.5 930.0,297.5C918.3,285.5 918.3,285.8 915.0,280.0C911.7,274.2 914.2,282.1 920.0,280.0C925.8,277.9 925.8,280.5 932.5,273.8C939.2,267.1 934.2,268.8 940.0,260.0C945.8,251.2 946.7,251.7 950.0,247.5Z" fill="none" stroke="#1a30c6" stroke-width="15" opacity=".72" filter="url(#b5)"/><path d="M950.0,247.5C954.0,247.0 953.7,246.0 962.0,246.0C970.3,246.0 965.7,245.8 975.0,247.5C984.3,249.2 978.3,251.2 990.0,251.0C1001.7,250.8 996.7,248.7 1010.0,247.0C1023.3,245.3 1017.5,245.0 1030.0,246.0C1042.5,247.0 1037.5,245.3 1047.5,250.0C1057.5,254.7 1054.6,251.7 1060.0,260.0C1065.4,268.3 1062.1,265.8 1063.8,275.0C1065.5,284.2 1066.3,282.5 1065.0,287.5C1063.7,292.5 1065.8,284.2 1060.0,290.0C1054.2,295.8 1055.8,292.5 1047.5,305.0C1039.2,317.5 1042.5,317.5 1035.0,327.5C1027.5,337.5 1028.3,334.2 1025.0,335.0C1021.7,335.8 1025.8,337.5 1025.0,330.0C1024.2,322.5 1025.0,320.0 1022.5,312.5C1020.0,305.0 1025.8,305.0 1017.5,307.5C1009.2,310.0 1011.7,312.9 997.5,320.0C983.3,327.1 990.8,330.1 975.0,328.8C959.2,327.5 965.0,326.4 950.0,316.0C935.0,305.6 941.7,309.5 930.0,297.5C918.3,285.5 918.3,285.8 915.0,280.0C911.7,274.2 914.2,282.1 920.0,280.0C925.8,277.9 925.8,280.5 932.5,273.8C939.2,267.1 934.2,268.8 940.0,260.0C945.8,251.2 946.7,251.7 950.0,247.5Z" fill="none" stroke="#1a30c0" stroke-width="3" opacity=".35" filter="url(#b2)"/></g><g clip-path="url(#cU3)"><path d="M1060.0,290.0C1061.7,289.2 1056.7,287.9 1065.0,287.5C1073.3,287.1 1071.7,288.8 1085.0,288.8C1098.3,288.8 1094.2,287.1 1105.0,287.5C1115.8,287.9 1111.7,286.7 1117.5,290.0C1123.3,293.3 1120.4,290.0 1122.5,297.5C1124.6,305.0 1124.3,304.2 1123.8,312.5C1123.3,320.8 1125.6,316.7 1121.0,322.5C1116.4,328.3 1117.0,320.8 1110.0,330.0C1103.0,339.2 1106.7,338.3 1100.0,350.0C1093.3,361.7 1095.0,365.0 1090.0,365.0C1085.0,365.0 1089.2,358.7 1085.0,350.0C1080.8,341.3 1083.3,341.3 1077.5,338.8C1071.7,336.3 1076.7,338.8 1067.5,342.5C1058.3,346.2 1060.8,349.2 1050.0,350.0C1039.2,350.8 1043.3,350.0 1035.0,345.0C1026.7,340.0 1025.0,340.8 1025.0,335.0C1025.0,329.2 1027.5,337.5 1035.0,327.5C1042.5,317.5 1039.2,317.5 1047.5,305.0C1055.8,292.5 1055.8,295.0 1060.0,290.0Z" fill="#3154fb"/><path d="M1060.0,290.0C1061.7,289.2 1056.7,287.9 1065.0,287.5C1073.3,287.1 1071.7,288.8 1085.0,288.8C1098.3,288.8 1094.2,287.1 1105.0,287.5C1115.8,287.9 1111.7,286.7 1117.5,290.0C1123.3,293.3 1120.4,290.0 1122.5,297.5C1124.6,305.0 1124.3,304.2 1123.8,312.5C1123.3,320.8 1125.6,316.7 1121.0,322.5C1116.4,328.3 1117.0,320.8 1110.0,330.0C1103.0,339.2 1106.7,338.3 1100.0,350.0C1093.3,361.7 1095.0,365.0 1090.0,365.0C1085.0,365.0 1089.2,358.7 1085.0,350.0C1080.8,341.3 1083.3,341.3 1077.5,338.8C1071.7,336.3 1076.7,338.8 1067.5,342.5C1058.3,346.2 1060.8,349.2 1050.0,350.0C1039.2,350.8 1043.3,350.0 1035.0,345.0C1026.7,340.0 1025.0,340.8 1025.0,335.0C1025.0,329.2 1027.5,337.5 1035.0,327.5C1042.5,317.5 1039.2,317.5 1047.5,305.0C1055.8,292.5 1055.8,295.0 1060.0,290.0Z" fill="none" stroke="#1a30c6" stroke-width="15" opacity=".72" filter="url(#b5)"/><path d="M1060.0,290.0C1061.7,289.2 1056.7,287.9 1065.0,287.5C1073.3,287.1 1071.7,288.8 1085.0,288.8C1098.3,288.8 1094.2,287.1 1105.0,287.5C1115.8,287.9 1111.7,286.7 1117.5,290.0C1123.3,293.3 1120.4,290.0 1122.5,297.5C1124.6,305.0 1124.3,304.2 1123.8,312.5C1123.3,320.8 1125.6,316.7 1121.0,322.5C1116.4,328.3 1117.0,320.8 1110.0,330.0C1103.0,339.2 1106.7,338.3 1100.0,350.0C1093.3,361.7 1095.0,365.0 1090.0,365.0C1085.0,365.0 1089.2,358.7 1085.0,350.0C1080.8,341.3 1083.3,341.3 1077.5,338.8C1071.7,336.3 1076.7,338.8 1067.5,342.5C1058.3,346.2 1060.8,349.2 1050.0,350.0C1039.2,350.8 1043.3,350.0 1035.0,345.0C1026.7,340.0 1025.0,340.8 1025.0,335.0C1025.0,329.2 1027.5,337.5 1035.0,327.5C1042.5,317.5 1039.2,317.5 1047.5,305.0C1055.8,292.5 1055.8,295.0 1060.0,290.0Z" fill="none" stroke="#1a30c0" stroke-width="3" opacity=".35" filter="url(#b2)"/></g><g clip-path="url(#cU4)"><path d="M1120.0,322.5C1123.3,323.5 1120.8,324.8 1130.0,325.5C1139.2,326.2 1138.3,323.0 1147.5,324.5C1156.7,326.0 1151.7,324.8 1157.5,330.0C1163.3,335.2 1160.8,331.7 1165.0,340.0C1169.2,348.3 1167.1,345.8 1170.0,355.0C1172.9,364.2 1172.5,362.5 1173.8,367.5C1175.1,372.5 1178.4,364.2 1173.8,370.0C1169.2,375.8 1169.6,380.8 1160.0,385.0C1150.4,389.2 1154.2,385.8 1145.0,382.5C1135.8,379.2 1140.0,375.8 1132.5,375.0C1125.0,374.2 1131.7,378.3 1122.5,380.0C1113.3,381.7 1117.5,382.5 1105.0,380.0C1092.5,377.5 1090.0,377.5 1085.0,372.5C1080.0,367.5 1085.0,372.5 1090.0,365.0C1095.0,357.5 1093.3,361.7 1100.0,350.0C1106.7,338.3 1103.3,339.2 1110.0,330.0C1116.7,320.8 1116.7,325.0 1120.0,322.5Z" fill="#3154fb"/><path d="M1120.0,322.5C1123.3,323.5 1120.8,324.8 1130.0,325.5C1139.2,326.2 1138.3,323.0 1147.5,324.5C1156.7,326.0 1151.7,324.8 1157.5,330.0C1163.3,335.2 1160.8,331.7 1165.0,340.0C1169.2,348.3 1167.1,345.8 1170.0,355.0C1172.9,364.2 1172.5,362.5 1173.8,367.5C1175.1,372.5 1178.4,364.2 1173.8,370.0C1169.2,375.8 1169.6,380.8 1160.0,385.0C1150.4,389.2 1154.2,385.8 1145.0,382.5C1135.8,379.2 1140.0,375.8 1132.5,375.0C1125.0,374.2 1131.7,378.3 1122.5,380.0C1113.3,381.7 1117.5,382.5 1105.0,380.0C1092.5,377.5 1090.0,377.5 1085.0,372.5C1080.0,367.5 1085.0,372.5 1090.0,365.0C1095.0,357.5 1093.3,361.7 1100.0,350.0C1106.7,338.3 1103.3,339.2 1110.0,330.0C1116.7,320.8 1116.7,325.0 1120.0,322.5Z" fill="none" stroke="#1a30c6" stroke-width="15" opacity=".72" filter="url(#b5)"/><path d="M1120.0,322.5C1123.3,323.5 1120.8,324.8 1130.0,325.5C1139.2,326.2 1138.3,323.0 1147.5,324.5C1156.7,326.0 1151.7,324.8 1157.5,330.0C1163.3,335.2 1160.8,331.7 1165.0,340.0C1169.2,348.3 1167.1,345.8 1170.0,355.0C1172.9,364.2 1172.5,362.5 1173.8,367.5C1175.1,372.5 1178.4,364.2 1173.8,370.0C1169.2,375.8 1169.6,380.8 1160.0,385.0C1150.4,389.2 1154.2,385.8 1145.0,382.5C1135.8,379.2 1140.0,375.8 1132.5,375.0C1125.0,374.2 1131.7,378.3 1122.5,380.0C1113.3,381.7 1117.5,382.5 1105.0,380.0C1092.5,377.5 1090.0,377.5 1085.0,372.5C1080.0,367.5 1085.0,372.5 1090.0,365.0C1095.0,357.5 1093.3,361.7 1100.0,350.0C1106.7,338.3 1103.3,339.2 1110.0,330.0C1116.7,320.8 1116.7,325.0 1120.0,322.5Z" fill="none" stroke="#1a30c0" stroke-width="3" opacity=".35" filter="url(#b2)"/></g><g clip-path="url(#cU5)"><path d="M1130.4,406.7C1137.8,399.3 1138.1,397.3 1152.6,384.4C1167.1,371.5 1164.7,373.6 1173.8,368.0C1182.9,362.4 1172.9,371.0 1180.0,367.5C1187.1,364.0 1184.2,362.3 1195.0,357.5C1205.8,352.7 1200.0,354.0 1212.5,353.0C1225.0,352.0 1222.1,352.2 1232.5,354.5C1242.9,356.8 1238.8,354.0 1243.8,360.0C1248.8,366.0 1246.8,362.5 1247.5,372.5C1248.2,382.5 1248.0,378.0 1246.0,390.0C1244.0,402.0 1250.4,400.5 1241.5,408.5C1232.6,416.5 1239.1,410.3 1219.3,414.0C1199.5,417.7 1199.5,419.6 1182.2,419.6C1164.9,419.6 1177.3,414.0 1167.4,414.0C1157.5,414.0 1163.7,418.3 1152.6,419.6C1141.5,420.9 1141.4,422.1 1134.0,417.8C1126.6,413.5 1131.6,410.4 1130.4,406.7Z" fill="#3154fb"/><path d="M1130.4,406.7C1137.8,399.3 1138.1,397.3 1152.6,384.4C1167.1,371.5 1164.7,373.6 1173.8,368.0C1182.9,362.4 1172.9,371.0 1180.0,367.5C1187.1,364.0 1184.2,362.3 1195.0,357.5C1205.8,352.7 1200.0,354.0 1212.5,353.0C1225.0,352.0 1222.1,352.2 1232.5,354.5C1242.9,356.8 1238.8,354.0 1243.8,360.0C1248.8,366.0 1246.8,362.5 1247.5,372.5C1248.2,382.5 1248.0,378.0 1246.0,390.0C1244.0,402.0 1250.4,400.5 1241.5,408.5C1232.6,416.5 1239.1,410.3 1219.3,414.0C1199.5,417.7 1199.5,419.6 1182.2,419.6C1164.9,419.6 1177.3,414.0 1167.4,414.0C1157.5,414.0 1163.7,418.3 1152.6,419.6C1141.5,420.9 1141.4,422.1 1134.0,417.8C1126.6,413.5 1131.6,410.4 1130.4,406.7Z" fill="none" stroke="#1a30c6" stroke-width="15" opacity=".72" filter="url(#b5)"/><path d="M1130.4,406.7C1137.8,399.3 1138.1,397.3 1152.6,384.4C1167.1,371.5 1164.7,373.6 1173.8,368.0C1182.9,362.4 1172.9,371.0 1180.0,367.5C1187.1,364.0 1184.2,362.3 1195.0,357.5C1205.8,352.7 1200.0,354.0 1212.5,353.0C1225.0,352.0 1222.1,352.2 1232.5,354.5C1242.9,356.8 1238.8,354.0 1243.8,360.0C1248.8,366.0 1246.8,362.5 1247.5,372.5C1248.2,382.5 1248.0,378.0 1246.0,390.0C1244.0,402.0 1250.4,400.5 1241.5,408.5C1232.6,416.5 1239.1,410.3 1219.3,414.0C1199.5,417.7 1199.5,419.6 1182.2,419.6C1164.9,419.6 1177.3,414.0 1167.4,414.0C1157.5,414.0 1163.7,418.3 1152.6,419.6C1141.5,420.9 1141.4,422.1 1134.0,417.8C1126.6,413.5 1131.6,410.4 1130.4,406.7Z" fill="none" stroke="#1a30c0" stroke-width="3" opacity=".35" filter="url(#b2)"/></g><g clip-path="url(#cU6)"><path d="M1182.2,428.9C1192.1,425.2 1190.9,424.0 1211.9,417.8C1232.9,411.6 1231.6,410.4 1245.2,410.4C1258.8,410.4 1250.3,410.6 1252.6,417.8C1254.9,425.0 1253.2,422.1 1252.0,432.0C1250.8,441.9 1252.4,433.6 1248.9,447.4C1245.4,461.2 1246.5,463.4 1241.5,473.3C1236.5,483.2 1238.3,479.4 1234.0,477.0C1229.7,474.6 1230.3,479.6 1228.5,466.0C1226.7,452.4 1230.3,449.3 1228.5,436.3C1226.7,423.3 1231.0,428.2 1223.0,427.0C1215.0,425.8 1218.0,432.0 1204.4,432.6C1190.8,433.2 1189.6,430.1 1182.2,428.9Z" fill="#3154fb"/><path d="M1182.2,428.9C1192.1,425.2 1190.9,424.0 1211.9,417.8C1232.9,411.6 1231.6,410.4 1245.2,410.4C1258.8,410.4 1250.3,410.6 1252.6,417.8C1254.9,425.0 1253.2,422.1 1252.0,432.0C1250.8,441.9 1252.4,433.6 1248.9,447.4C1245.4,461.2 1246.5,463.4 1241.5,473.3C1236.5,483.2 1238.3,479.4 1234.0,477.0C1229.7,474.6 1230.3,479.6 1228.5,466.0C1226.7,452.4 1230.3,449.3 1228.5,436.3C1226.7,423.3 1231.0,428.2 1223.0,427.0C1215.0,425.8 1218.0,432.0 1204.4,432.6C1190.8,433.2 1189.6,430.1 1182.2,428.9Z" fill="none" stroke="#1a30c6" stroke-width="15" opacity=".72" filter="url(#b5)"/><path d="M1182.2,428.9C1192.1,425.2 1190.9,424.0 1211.9,417.8C1232.9,411.6 1231.6,410.4 1245.2,410.4C1258.8,410.4 1250.3,410.6 1252.6,417.8C1254.9,425.0 1253.2,422.1 1252.0,432.0C1250.8,441.9 1252.4,433.6 1248.9,447.4C1245.4,461.2 1246.5,463.4 1241.5,473.3C1236.5,483.2 1238.3,479.4 1234.0,477.0C1229.7,474.6 1230.3,479.6 1228.5,466.0C1226.7,452.4 1230.3,449.3 1228.5,436.3C1226.7,423.3 1231.0,428.2 1223.0,427.0C1215.0,425.8 1218.0,432.0 1204.4,432.6C1190.8,433.2 1189.6,430.1 1182.2,428.9Z" fill="none" stroke="#1a30c0" stroke-width="3" opacity=".35" filter="url(#b2)"/></g><path d="M488.8,428.8C497.5,430.0 496.3,431.8 515.0,432.5C533.7,433.2 528.3,430.2 545.0,431.0C561.7,431.8 558.3,433.7 565.0,435.0" fill="none" stroke="#1c32c4" stroke-width="3.2" opacity=".5" filter="url(#b2)" stroke-linecap="round"/><path d="M615.9,440.4C622.0,440.8 621.6,440.2 634.2,441.7C646.8,443.2 640.7,442.5 653.7,444.9C666.7,447.3 660.2,446.4 673.2,448.8C686.2,451.2 681.9,451.9 692.8,452.1C703.7,452.3 701.5,450.4 705.8,449.5" fill="none" stroke="#1c32c4" stroke-width="3.2" opacity=".5" filter="url(#b2)" stroke-linecap="round"/><path d="M745.6,458.2C752.5,459.7 752.5,459.7 766.4,462.8C780.3,465.9 776.4,466.3 787.2,467.5C798.0,468.7 794.9,466.7 798.8,466.3" fill="none" stroke="#1c32c4" stroke-width="3.2" opacity=".5" filter="url(#b2)" stroke-linecap="round"/><path d="M832.4,481.4C839.0,482.2 838.6,481.0 852.1,483.7C865.6,486.4 861.3,488.4 872.9,489.5C884.5,490.6 882.2,487.9 886.8,487.1" fill="none" stroke="#1c32c4" stroke-width="3.2" opacity=".5" filter="url(#b2)" stroke-linecap="round"/><path d="M857.0,222.0C863.0,225.3 860.7,226.7 875.0,232.0C889.3,237.3 881.7,236.7 900.0,238.0C918.3,239.3 911.7,239.3 930.0,236.0C948.3,232.7 942.3,231.3 955.0,228.0C967.7,224.7 963.7,226.7 968.0,226.0" fill="none" stroke="#1c32c4" stroke-width="3.2" opacity=".5" filter="url(#b2)" stroke-linecap="round"/><path d="M985.0,258.0C993.3,260.7 993.3,262.7 1010.0,266.0C1026.7,269.3 1020.0,268.7 1035.0,268.0C1050.0,267.3 1048.3,265.3 1055.0,264.0" fill="none" stroke="#1c32c4" stroke-width="3.2" opacity=".5" filter="url(#b2)" stroke-linecap="round"/><path d="M1070.0,296.0C1076.7,297.3 1076.0,299.3 1090.0,300.0C1104.0,300.7 1104.7,298.7 1112.0,298.0" fill="none" stroke="#1c32c4" stroke-width="3.2" opacity=".5" filter="url(#b2)" stroke-linecap="round"/><path d="M1000.0,315.0C1006.3,312.0 1010.5,305.2 1018.8,306.0C1027.1,306.8 1022.9,313.7 1025.0,317.5" fill="none" stroke="#1c32c4" stroke-width="3.2" opacity=".5" filter="url(#b2)" stroke-linecap="round"/><path d="M1050.0,497.5C1056.7,498.3 1061.7,495.0 1070.0,500.0C1078.3,505.0 1073.3,508.3 1075.0,512.5" fill="none" stroke="#1c32c4" stroke-width="3.2" opacity=".5" filter="url(#b2)" stroke-linecap="round"/><path d="M950.0,660.0C970.0,653.3 973.3,643.3 1010.0,640.0C1046.7,636.7 1026.7,655.0 1060.0,650.0C1093.3,645.0 1093.3,633.3 1110.0,625.0" fill="none" stroke="#2038d0" stroke-width="9" opacity=".4" filter="url(#b5)" stroke-linecap="round"/><path d="M1000.0,700.0C1020.0,690.7 1018.3,687.0 1060.0,672.0C1101.7,657.0 1103.3,660.7 1125.0,655.0" fill="none" stroke="#2038d0" stroke-width="9" opacity=".4" filter="url(#b5)" stroke-linecap="round"/><path d="M1125.0,600.0C1133.3,613.3 1135.7,610.0 1150.0,640.0C1164.3,670.0 1162.0,673.3 1168.0,690.0" fill="none" stroke="#2038d0" stroke-width="9" opacity=".4" filter="url(#b5)" stroke-linecap="round"/><path d="M1180.0,580.0C1186.7,590.0 1189.3,590.7 1200.0,610.0C1210.7,629.3 1208.0,628.7 1212.0,638.0" fill="none" stroke="#2038d0" stroke-width="9" opacity=".4" filter="url(#b5)" stroke-linecap="round"/><path d="M700.0,600.0C720.0,604.0 716.7,598.7 760.0,612.0C803.3,625.3 806.7,630.7 830.0,640.0" fill="none" stroke="#2038d0" stroke-width="9" opacity=".4" filter="url(#b5)" stroke-linecap="round"/><path d="M925.0,398.0C936.7,405.3 936.7,410.0 960.0,420.0C983.3,430.0 983.3,425.3 995.0,428.0" fill="none" stroke="#2038d0" stroke-width="9" opacity=".4" filter="url(#b5)" stroke-linecap="round"/><path d="M488.8,428.8C497.5,430.0 496.3,431.8 515.0,432.5C533.7,433.2 528.3,430.2 545.0,431.0C561.7,431.8 558.3,433.7 565.0,435.0" fill="none" stroke="#15257f" stroke-width="0.9" opacity=".6" filter="url(#b1)" stroke-linecap="round"/><path d="M615.9,440.4C622.0,440.8 621.6,440.2 634.2,441.7C646.8,443.2 640.7,442.5 653.7,444.9C666.7,447.3 660.2,446.4 673.2,448.8C686.2,451.2 681.9,451.9 692.8,452.1C703.7,452.3 701.5,450.4 705.8,449.5" fill="none" stroke="#15257f" stroke-width="0.9" opacity=".6" filter="url(#b1)" stroke-linecap="round"/><path d="M745.6,458.2C752.5,459.7 752.5,459.7 766.4,462.8C780.3,465.9 776.4,466.3 787.2,467.5C798.0,468.7 794.9,466.7 798.8,466.3" fill="none" stroke="#15257f" stroke-width="0.9" opacity=".6" filter="url(#b1)" stroke-linecap="round"/><path d="M832.4,481.4C839.0,482.2 838.6,481.0 852.1,483.7C865.6,486.4 861.3,488.4 872.9,489.5C884.5,490.6 882.2,487.9 886.8,487.1" fill="none" stroke="#15257f" stroke-width="0.9" opacity=".6" filter="url(#b1)" stroke-linecap="round"/><path d="M1032.9,421.7C1037.8,418.9 1035.7,418.2 1047.5,413.3C1059.3,408.4 1054.4,411.9 1068.3,407.1C1082.2,402.3 1075.3,403.7 1089.2,398.8C1103.1,393.9 1096.1,396.0 1110.0,392.5C1123.9,389.0 1123.9,389.7 1130.8,388.3" fill="none" stroke="#1c32c8" stroke-width="4.5" opacity=".5" filter="url(#b2)" stroke-linecap="round"/><path d="M1033.9,426.2C1038.8,423.4 1036.7,422.7 1048.5,417.8C1060.3,412.9 1055.4,416.4 1069.3,411.6C1083.2,406.8 1076.3,408.2 1090.2,403.3C1104.1,398.4 1097.1,400.5 1111.0,397.0C1124.9,393.5 1124.9,394.2 1131.8,392.8" fill="none" stroke="#4a72ff" stroke-width="3.5" opacity=".35" filter="url(#b2)" stroke-linecap="round"/><path d="M1037.1,442.5C1044.0,438.3 1044.0,436.9 1057.9,430.0C1071.8,423.1 1064.9,425.9 1078.8,421.7C1092.7,417.5 1085.7,418.2 1099.6,417.5C1113.5,416.8 1103.0,416.1 1120.4,419.6C1137.8,423.1 1141.3,425.1 1151.7,427.9" fill="none" stroke="#1c32c8" stroke-width="4.5" opacity=".5" filter="url(#b2)" stroke-linecap="round"/><path d="M1038.1,447.0C1045.0,442.8 1045.0,441.4 1058.9,434.5C1072.8,427.6 1065.9,430.4 1079.8,426.2C1093.7,422.0 1086.7,422.7 1100.6,422.0C1114.5,421.3 1104.0,420.6 1121.4,424.1C1138.8,427.6 1142.3,429.6 1152.7,432.4" fill="none" stroke="#4a72ff" stroke-width="3.5" opacity=".35" filter="url(#b2)" stroke-linecap="round"/><path d="M1055.8,463.3C1063.5,459.1 1064.2,456.3 1078.8,450.8C1093.4,445.3 1085.7,447.4 1099.6,446.7C1113.5,446.0 1103.0,448.8 1120.4,448.8C1137.8,448.8 1131.8,448.8 1151.7,446.7C1171.6,444.6 1170.6,443.9 1180.0,442.5" fill="none" stroke="#1c32c8" stroke-width="4.5" opacity=".5" filter="url(#b2)" stroke-linecap="round"/><path d="M1056.8,467.8C1064.5,463.6 1065.2,460.8 1079.8,455.3C1094.4,449.8 1086.7,451.9 1100.6,451.2C1114.5,450.5 1104.0,453.3 1121.4,453.3C1138.8,453.3 1132.8,453.3 1152.7,451.2C1172.6,449.1 1171.6,448.4 1181.0,447.0" fill="none" stroke="#4a72ff" stroke-width="3.5" opacity=".35" filter="url(#b2)" stroke-linecap="round"/><path d="M1043.3,484.2C1051.6,480.7 1049.5,480.1 1068.3,473.8C1087.1,467.5 1078.8,469.6 1099.6,465.4C1120.4,461.2 1112.1,464.1 1130.8,461.3C1149.5,458.5 1147.5,458.5 1155.8,457.1" fill="none" stroke="#1c32c8" stroke-width="4.5" opacity=".5" filter="url(#b2)" stroke-linecap="round"/><path d="M1044.3,488.7C1052.6,485.2 1050.5,484.6 1069.3,478.3C1088.1,472.0 1079.8,474.1 1100.6,469.9C1121.4,465.7 1113.1,468.6 1131.8,465.8C1150.5,463.0 1148.5,463.0 1156.8,461.6" fill="none" stroke="#4a72ff" stroke-width="3.5" opacity=".35" filter="url(#b2)" stroke-linecap="round"/><path d="M1005.8,398.8C1007.2,405.0 1001.0,407.8 1010.0,417.5C1019.0,427.2 1023.9,418.2 1032.9,427.9C1041.9,437.6 1035.7,440.4 1037.1,446.7" fill="none" stroke="#1c32c8" stroke-width="4.5" opacity=".5" filter="url(#b2)" stroke-linecap="round"/><path d="M1006.8,403.3C1008.2,409.5 1002.0,412.3 1011.0,422.0C1020.0,431.7 1024.9,422.7 1033.9,432.4C1042.9,442.1 1036.7,444.9 1038.1,451.2" fill="none" stroke="#4a72ff" stroke-width="3.5" opacity=".35" filter="url(#b2)" stroke-linecap="round"/><path d="M453.8,482.5C457.5,484.2 456.3,482.5 465.0,487.5C473.7,492.5 467.5,490.0 480.0,497.5C492.5,505.0 488.3,504.6 502.5,510.0C516.7,515.4 508.3,513.8 522.5,513.8C536.7,513.8 529.2,515.4 545.0,510.0C560.8,504.6 555.8,505.0 570.0,497.5C584.2,490.0 579.2,490.0 587.5,487.5C595.8,485.0 590.0,485.0 595.0,490.0C600.0,495.0 594.2,492.5 602.5,502.5C610.8,512.5 607.5,510.5 620.0,520.0C632.5,529.5 626.7,526.4 640.0,531.0C653.3,535.6 647.5,535.0 660.0,533.8C672.5,532.6 665.0,533.8 677.5,527.5C690.0,521.2 687.1,522.2 697.5,515.0C707.9,507.8 702.1,508.5 708.8,506.0C715.5,503.5 713.8,500.7 717.5,507.5C721.2,514.3 714.5,514.0 720.0,526.5C725.5,539.0 724.7,536.1 734.0,545.0C743.3,553.9 737.1,552.7 747.9,553.1C758.7,553.5 753.3,553.5 766.4,546.2C779.5,538.9 776.4,538.8 787.2,531.1C798.0,523.4 791.1,526.0 798.8,523.0C806.5,520.0 806.5,522.3 810.4,522.0" fill="none" stroke="#14237f" stroke-width="1.0" opacity=".8" filter="url(#b1)" stroke-linecap="round"/><path d="M809.2,540.4C810.4,545.8 807.7,546.6 812.7,556.6C817.7,566.6 815.0,563.9 824.3,570.5C833.6,577.1 828.2,576.3 840.5,576.3C852.8,576.3 848.2,577.1 861.3,570.5C874.4,563.9 869.1,566.2 879.9,556.6C890.7,547.0 887.6,547.0 893.8,541.6C900.0,536.2 895.3,540.0 898.4,540.4C901.5,540.8 900.7,535.0 903.0,542.7C905.3,550.4 902.2,549.7 905.3,563.6C908.4,577.5 906.1,572.1 912.3,584.4C918.5,596.7 913.9,591.7 923.9,600.6C933.9,609.5 930.1,608.3 942.4,611.0C954.7,613.7 949.3,613.7 960.9,608.7C972.5,603.7 967.8,606.4 977.1,596.0C986.4,585.6 983.3,589.8 988.7,577.4C994.1,565.0 991.8,565.1 993.3,558.9" fill="none" stroke="#14237f" stroke-width="1.0" opacity=".8" filter="url(#b1)" stroke-linecap="round"/><path d="M1000.7,540.0C1005.7,548.6 1004.5,549.9 1015.6,565.9C1026.7,581.9 1022.9,579.4 1034.0,588.1C1045.1,596.8 1039.0,594.4 1048.9,591.9C1058.8,589.4 1057.5,590.6 1063.7,580.7C1069.9,570.8 1066.2,568.4 1067.4,562.2" fill="none" stroke="#14237f" stroke-width="1.0" opacity=".8" filter="url(#b1)" stroke-linecap="round"/><path d="M1074.8,521.5C1083.4,530.1 1084.6,531.4 1100.7,547.4C1116.8,563.4 1109.4,560.3 1123.0,569.6C1136.6,578.9 1130.4,576.4 1141.5,575.2C1152.6,574.0 1150.1,575.2 1156.3,565.9C1162.5,556.6 1158.8,553.6 1160.0,547.4" fill="none" stroke="#14237f" stroke-width="1.0" opacity=".8" filter="url(#b1)" stroke-linecap="round"/><path d="M1165.6,495.6C1171.1,500.5 1170.5,499.3 1182.2,510.4C1193.9,521.5 1189.6,515.3 1200.7,528.9C1211.8,542.5 1210.6,543.7 1215.6,551.1" fill="none" stroke="#14237f" stroke-width="1.0" opacity=".8" filter="url(#b1)" stroke-linecap="round"/><path d="M1215.6,545.0C1216.8,532.2 1215.6,531.8 1219.3,506.7C1223.0,481.6 1224.2,482.0 1226.7,469.6" fill="none" stroke="#14237f" stroke-width="1.0" opacity=".8" filter="url(#b1)" stroke-linecap="round"/><path d="M815.0,240.0C821.7,245.0 821.7,247.1 835.0,255.0C848.3,262.9 841.7,260.1 855.0,263.8C868.3,267.5 861.7,266.4 875.0,266.0C888.3,265.6 883.3,264.5 895.0,262.5C906.7,260.5 900.8,258.8 910.0,260.0C919.2,261.2 915.0,261.4 922.5,266.0C930.0,270.6 929.2,271.2 932.5,273.8" fill="none" stroke="#14237f" stroke-width="1.0" opacity=".8" filter="url(#b1)" stroke-linecap="round"/><path d="M915.0,280.0C920.0,285.8 918.3,285.5 930.0,297.5C941.7,309.5 935.0,305.6 950.0,316.0C965.0,326.4 959.2,327.5 975.0,328.8C990.8,330.1 983.3,327.1 997.5,320.0C1011.7,312.9 1009.2,310.0 1017.5,307.5C1025.8,305.0 1020.0,305.0 1022.5,312.5C1025.0,320.0 1024.2,324.2 1025.0,330.0" fill="none" stroke="#14237f" stroke-width="1.0" opacity=".8" filter="url(#b1)" stroke-linecap="round"/><path d="M1025.0,335.0C1028.3,338.3 1026.7,340.0 1035.0,345.0C1043.3,350.0 1039.2,350.8 1050.0,350.0C1060.8,349.2 1058.3,346.2 1067.5,342.5C1076.7,338.8 1071.7,336.3 1077.5,338.8C1083.3,341.3 1080.8,342.3 1085.0,350.0C1089.2,357.7 1088.3,358.0 1090.0,362.0" fill="none" stroke="#14237f" stroke-width="1.0" opacity=".8" filter="url(#b1)" stroke-linecap="round"/><path d="M1085.0,372.5C1091.7,375.0 1092.5,377.5 1105.0,380.0C1117.5,382.5 1113.3,381.7 1122.5,380.0C1131.7,378.3 1125.0,374.2 1132.5,375.0C1140.0,375.8 1135.8,379.2 1145.0,382.5C1154.2,385.8 1155.0,384.2 1160.0,385.0" fill="none" stroke="#14237f" stroke-width="1.0" opacity=".8" filter="url(#b1)" stroke-linecap="round"/><path d="M1130.4,406.7C1131.6,410.4 1126.6,413.5 1134.0,417.8C1141.4,422.1 1141.5,420.9 1152.6,419.6C1163.7,418.3 1157.5,414.0 1167.4,414.0C1177.3,414.0 1164.9,419.6 1182.2,419.6C1199.5,419.6 1199.5,417.7 1219.3,414.0C1239.1,410.3 1234.1,410.3 1241.5,408.5" fill="none" stroke="#14237f" stroke-width="1.0" opacity=".8" filter="url(#b1)" stroke-linecap="round"/><ellipse cx="672.5" cy="631" rx="6" ry="2.6" transform="rotate(20 672.5 631)" fill="#7aa2ff" opacity=".55" filter="url(#b2)"/><ellipse cx="755" cy="643.8" rx="3.2" ry="2.2" transform="rotate(-30 755 643.8)" fill="#7aa2ff" opacity=".55" filter="url(#b2)"/><ellipse cx="777.5" cy="567.5" rx="6" ry="1.8" transform="rotate(0 777.5 567.5)" fill="#7aa2ff" opacity=".55" filter="url(#b2)"/><ellipse cx="672.5" cy="463.8" rx="1.8" ry="1.6" transform="rotate(0 672.5 463.8)" fill="#7aa2ff" opacity=".55" filter="url(#b2)"/><ellipse cx="767.5" cy="472.5" rx="1.4" ry="3" transform="rotate(0 767.5 472.5)" fill="#7aa2ff" opacity=".55" filter="url(#b2)"/><ellipse cx="682.5" cy="520" rx="4.5" ry="1.8" transform="rotate(-15 682.5 520)" fill="#7aa2ff" opacity=".55" filter="url(#b2)"/><ellipse cx="687.5" cy="542.5" rx="2" ry="6" transform="rotate(25 687.5 542.5)" fill="#7aa2ff" opacity=".55" filter="url(#b2)"/><ellipse cx="790" cy="540" rx="4" ry="1.6" transform="rotate(0 790 540)" fill="#7aa2ff" opacity=".55" filter="url(#b2)"/><ellipse cx="557.5" cy="502.5" rx="3" ry="1.6" transform="rotate(-20 557.5 502.5)" fill="#7aa2ff" opacity=".55" filter="url(#b2)"/><ellipse cx="548" cy="447" rx="1.6" ry="1.6" transform="rotate(0 548 447)" fill="#7aa2ff" opacity=".55" filter="url(#b2)"/><ellipse cx="887.5" cy="242.5" rx="1.6" ry="9" transform="rotate(8 887.5 242.5)" fill="#7aa2ff" opacity=".55" filter="url(#b2)"/><ellipse cx="990" cy="285" rx="1.6" ry="15" transform="rotate(6 990 285)" fill="#7aa2ff" opacity=".55" filter="url(#b2)"/><ellipse cx="1065" cy="316" rx="1.8" ry="12" transform="rotate(22 1065 316)" fill="#7aa2ff" opacity=".55" filter="url(#b2)"/><ellipse cx="1112.5" cy="352" rx="1.5" ry="8" transform="rotate(0 1112.5 352)" fill="#7aa2ff" opacity=".55" filter="url(#b2)"/><ellipse cx="1212.5" cy="380" rx="11" ry="1.6" transform="rotate(-22 1212.5 380)" fill="#7aa2ff" opacity=".55" filter="url(#b2)"/><ellipse cx="849.8" cy="489.5" rx="4.5" ry="1.6" transform="rotate(10 849.8 489.5)" fill="#7aa2ff" opacity=".55" filter="url(#b2)"/><ellipse cx="965.5" cy="496.4" rx="1.8" ry="4.5" transform="rotate(10 965.5 496.4)" fill="#7aa2ff" opacity=".55" filter="url(#b2)"/><ellipse cx="791.9" cy="542.7" rx="3" ry="1.8" transform="rotate(0 791.9 542.7)" fill="#7aa2ff" opacity=".55" filter="url(#b2)"/><ellipse cx="766.4" cy="568.2" rx="8" ry="2.4" transform="rotate(-8 766.4 568.2)" fill="#7aa2ff" opacity=".55" filter="url(#b2)"/><ellipse cx="838.2" cy="582" rx="10" ry="2.4" transform="rotate(-8 838.2 582)" fill="#7aa2ff" opacity=".55" filter="url(#b2)"/><ellipse cx="889.1" cy="572.8" rx="6" ry="3" transform="rotate(-25 889.1 572.8)" fill="#7aa2ff" opacity=".55" filter="url(#b2)"/><ellipse cx="921.5" cy="582" rx="4" ry="2.4" transform="rotate(0 921.5 582)" fill="#7aa2ff" opacity=".55" filter="url(#b2)"/><ellipse cx="1138" cy="470" rx="2" ry="2" transform="rotate(0 1138 470)" fill="#7aa2ff" opacity=".55" filter="url(#b2)"/><ellipse cx="1052" cy="503" rx="2" ry="3" transform="rotate(0 1052 503)" fill="#7aa2ff" opacity=".55" filter="url(#b2)"/><ellipse cx="1100" cy="548" rx="2.5" ry="1.5" transform="rotate(30 1100 548)" fill="#7aa2ff" opacity=".55" filter="url(#b2)"/><ellipse cx="1172" cy="492" rx="2" ry="2" transform="rotate(0 1172 492)" fill="#7aa2ff" opacity=".55" filter="url(#b2)"/><ellipse cx="612" cy="566" rx="14" ry="2.2" transform="rotate(-8 612 566)" fill="#7aa2ff" opacity=".55" filter="url(#b2)"/><ellipse cx="520" cy="522" rx="10" ry="1.8" transform="rotate(5 520 522)" fill="#7aa2ff" opacity=".55" filter="url(#b2)"/><ellipse cx="585" cy="508" rx="8" ry="1.8" transform="rotate(-22 585 508)" fill="#7aa2ff" opacity=".55" filter="url(#b2)"/></g><path d="M576.9,415.6L576.9,415.6L577.3,417.4L578.5,418.9L579.1,420.6L580.1,422.1L581.0,423.5L580.9,425.3L581.7,426.8L581.9,428.4L582.7,429.9L582.6,431.7L582.9,433.6L583.2,435.4L582.3,437.3L582.7,439.1L583.3,440.9L583.2,442.7L583.6,444.5L583.9,446.4L584.0,448.2L583.3,450.0L582.5,451.7L582.7,453.7L581.8,455.4L581.4,457.3L580.3,459.4L578.8,461.2L577.3,459.9L575.7,458.7L574.3,457.3L572.8,456.0L571.4,454.6L570.2,453.1L569.1,451.4L568.3,449.7L566.8,448.5L565.4,447.2L564.5,445.6L563.2,444.0L561.3,443.0L563.0,443.2L564.5,442.3L566.1,441.7L567.8,441.7L569.4,440.7L571.1,440.0L573.0,439.7L573.7,437.7L574.4,435.7L575.6,433.9L575.3,432.1L575.4,430.2L575.7,428.4L576.0,426.5L575.6,424.7L576.1,422.9L576.0,421.0L576.3,419.2L576.7,417.4L576.9,415.6Z" fill="#7a8f3c"/><path d="M558.0,441.7L558.0,441.7L559.7,442.2L561.3,443.0L563.0,444.1L564.5,445.6L566.1,446.7L567.0,448.3L567.4,450.4L569.1,451.4L570.8,452.5L571.7,454.4L572.9,455.9L574.3,457.3L575.5,459.0L577.6,459.6L578.8,461.2L579.5,463.1L579.5,465.1L579.2,466.9L578.3,468.4L577.6,470.0L576.9,471.6L576.0,473.1L575.8,474.8L575.4,476.4L575.6,478.1L575.2,479.8L574.2,481.1L572.4,481.8L571.7,483.3L569.8,483.4L568.2,484.7L566.5,485.3L564.9,486.3L563.8,488.0L561.9,488.5L559.6,489.3L557.3,489.8L556.4,488.1L555.0,486.9L553.4,485.9L554.2,484.0L554.1,482.0L553.6,479.9L551.6,478.7L550.8,476.8L549.3,475.8L548.3,474.5L547.6,472.9L549.6,471.6L551.5,470.3L552.1,468.8L552.9,467.3L552.9,465.7L553.2,464.1L553.4,462.5L553.4,460.5L552.7,458.6L552.5,456.6L552.1,454.7L551.1,453.2L551.8,451.4L550.8,449.9L550.8,448.2L552.4,447.0L553.2,445.3L554.1,443.6L555.9,442.4L558.0,441.7Z" fill="#1b1e27"/><path d="M712.3,429.9L712.3,429.9L713.2,431.6L713.6,433.5L713.7,435.5L714.2,437.3L714.9,439.1L715.5,440.8L715.6,442.5L715.2,444.3L715.2,446.0L715.5,447.8L715.5,449.5L716.2,451.2L716.0,453.0L717.1,454.6L717.1,456.4L717.2,458.2L717.5,459.9L716.6,461.5L716.7,463.3L716.0,465.0L716.2,466.8L716.1,468.6L715.5,470.3L715.3,471.9L713.9,473.1L713.7,474.8L713.6,476.4L713.4,478.1L712.3,479.4L711.4,480.9L710.4,482.3L709.8,484.0L709.1,485.6L707.8,486.9L707.1,488.5L705.6,489.5L705.1,491.3L704.2,492.8L702.8,493.9L701.6,495.1L700.2,496.2L699.3,497.7L697.4,498.7L695.3,498.6L693.4,499.6L693.0,497.6L692.1,495.7L691.5,493.8L690.1,492.7L689.7,490.8L688.2,489.8L688.6,488.2L689.9,486.9L689.9,485.1L690.5,483.6L691.7,482.3L692.1,480.7L692.1,478.9L693.1,477.3L692.7,475.5L692.6,473.7L692.9,472.0L693.4,470.3L694.3,468.7L695.5,467.4L696.8,466.0L697.0,464.0L698.2,462.6L699.3,461.2L700.1,459.7L701.9,459.0L702.2,457.0L703.2,455.7L704.3,454.4L705.8,453.4L706.6,451.8L708.0,450.5L708.9,449.0L709.6,447.3L710.3,445.6L711.2,443.7L711.5,441.8L711.1,439.7L711.6,437.8L711.4,435.8L712.5,433.9L712.4,431.9L712.3,429.9Z" fill="#7a8f3c"/><path d="M449.0,569.0L449.0,569.0L450.5,568.0L452.4,567.8L454.0,567.0L454.3,568.6L454.6,570.2L454.9,571.9L455.3,573.5L455.6,575.1L455.7,576.7L455.9,578.4L456.0,580.0L454.4,581.1L453.5,582.9L452.0,584.0L451.0,585.9L450.9,588.1L450.0,590.0L448.4,589.1L447.0,588.0L447.6,586.5L448.0,584.9L448.1,583.2L448.3,581.5L449.0,580.0L449.0,578.2L448.9,576.3L449.3,574.5L448.8,572.7L448.9,570.8L449.0,569.0Z" fill="#7a8f3c"/><path d="M822.5,343.0L822.5,343.0L823.4,344.5L825.4,344.9L826.3,346.4L827.2,347.9L828.5,349.1L830.0,350.0L831.6,350.9L832.9,352.1L834.1,353.4L834.6,355.4L836.5,356.0L837.3,357.7L838.4,359.1L840.0,360.0L841.4,361.0L842.7,362.0L843.4,363.8L844.9,364.6L846.4,365.4L847.3,366.9L848.9,367.7L850.0,369.0L851.5,369.9L853.0,370.7L853.8,372.5L855.0,373.7L856.6,374.5L858.0,375.5L856.0,374.8L854.0,375.7L852.0,375.0L850.2,374.7L848.7,373.9L847.2,372.7L845.5,372.2L843.6,372.2L842.0,371.5L840.4,371.5L838.8,370.9L837.2,370.5L835.8,369.7L834.0,370.2L832.5,369.5L831.8,367.9L830.7,366.5L829.8,365.1L828.8,363.7L827.5,362.5L827.8,360.6L827.5,358.7L827.7,356.9L828.0,355.0L826.8,353.9L826.0,352.3L824.2,351.6L823.5,350.0L822.9,348.3L823.3,346.5L822.4,344.8L822.5,343.0Z" fill="#7a8f3c"/><g stroke-linecap="butt"><path d="M1273,721.5 L1274.9,697" stroke="#0a0aee" stroke-width="4.3"/><path d="M1275.4,689 L1270.3,697.6 L1280.1,697.6Z" fill="#0808ff"/><path d="M1273.2,722.4 L1255.4,731.0" stroke="#dd0808" stroke-width="4.0"/><path d="M1249.4,733.9 L1254.1,726.4 L1258.9,734.9Z" fill="#ff0a0a"/><path d="M1273,722.4 L1295.0,731.8" stroke="#08e808" stroke-width="4.0"/><path d="M1301.8,734.5 L1296.2,726.8 L1291.8,735.4Z" fill="#08ff08"/></g></svg>
<!--TOPLAYER-->
<div class="r" style="left:262.10px;top:97.00px;width:1.00px;height:52.00px;background:#262a31;border-radius:0;"></div>
<div class="r" style="left:397.00px;top:97.00px;width:1.00px;height:52.00px;background:#262a31;border-radius:0;"></div>
<div class="r" style="left:826.40px;top:97.00px;width:1.00px;height:52.00px;background:#262a31;border-radius:0;"></div>
<div class="r" style="left:1048.70px;top:97.00px;width:1.00px;height:52.00px;background:#262a31;border-radius:0;"></div>
<div class="r" style="left:1292.50px;top:97.00px;width:1.00px;height:52.00px;background:#262a31;border-radius:0;"></div>
<div class="r" style="left:753.20px;top:76.80px;width:45.90px;height:19.20px;background:#0a7ddc;border-radius:4px 4px 0 0;"></div>
<div class="r" style="left:1114.60px;top:77.30px;width:167.40px;height:15.30px;background:#2d3139;border-radius:3px;"></div>
<span class="t" style="left:383.40px;top:81.99px;font-size:9.7px;color:#fff;-webkit-text-stroke:0.32px #fff;transform:scaleX(0.9421);-webkit-text-stroke:0.42px #fff;">Home</span>
<span class="t" style="left:436.60px;top:81.99px;font-size:9.7px;color:#fff;-webkit-text-stroke:0.32px #fff;transform:scaleX(0.9398);-webkit-text-stroke:0.42px #fff;">View</span>
<span class="t" style="left:484.60px;top:81.99px;font-size:9.7px;color:#fff;-webkit-text-stroke:0.32px #fff;transform:scaleX(0.9048);-webkit-text-stroke:0.42px #fff;">Select</span>
<span class="t" style="left:534.20px;top:81.99px;font-size:9.7px;color:#fff;-webkit-text-stroke:0.32px #fff;transform:scaleX(0.9450);-webkit-text-stroke:0.42px #fff;">Create</span>
<span class="t" style="left:584.60px;top:81.99px;font-size:9.7px;color:#fff;-webkit-text-stroke:0.32px #fff;transform:scaleX(0.9922);-webkit-text-stroke:0.42px #fff;">Transform</span>
<span class="t" style="left:650.40px;top:81.99px;font-size:9.7px;color:#fff;-webkit-text-stroke:0.32px #fff;transform:scaleX(0.9878);-webkit-text-stroke:0.42px #fff;">Inspect</span>
<span class="t" style="left:703.40px;top:81.99px;font-size:9.7px;color:#fff;-webkit-text-stroke:0.32px #fff;transform:scaleX(0.9512);-webkit-text-stroke:0.42px #fff;">Features</span>
<span class="t" style="left:764.60px;top:81.99px;font-size:9.7px;color:#fff;-webkit-text-stroke:0.32px #fff;transform:scaleX(0.9614);-webkit-text-stroke:0.42px #fff;">Mesh</span>
<span class="t" style="left:813.80px;top:81.99px;font-size:9.7px;color:#fff;-webkit-text-stroke:0.32px #fff;transform:scaleX(0.9790);-webkit-text-stroke:0.42px #fff;">Points</span>
<span class="t" style="left:865.90px;top:81.99px;font-size:9.7px;color:#fff;-webkit-text-stroke:0.32px #fff;transform:scaleX(0.9740);-webkit-text-stroke:0.42px #fff;">Voxel</span>
<span class="t" style="left:917.70px;top:81.99px;font-size:9.7px;color:#fff;-webkit-text-stroke:0.32px #fff;transform:scaleX(0.9360);-webkit-text-stroke:0.42px #fff;">Lines</span>
<span class="t" style="left:965.20px;top:81.99px;font-size:9.7px;color:#fff;-webkit-text-stroke:0.32px #fff;transform:scaleX(0.9626);-webkit-text-stroke:0.42px #fff;">Distance map</span>
<span class="t" style="left:1049.60px;top:81.99px;font-size:9.7px;color:#fff;-webkit-text-stroke:0.32px #fff;transform:scaleX(0.8381);-webkit-text-stroke:0.42px #fff;">CNC</span>
<span class="t" style="left:209.50px;top:132.31px;font-size:7.9px;color:#fff;-webkit-text-stroke:0.32px #fff;transform:scaleX(0.9265);">Mesh Healer</span>
<span class="t" style="left:277.30px;top:132.31px;font-size:7.9px;color:#fff;-webkit-text-stroke:0.32px #fff;transform:scaleX(0.9285);">Mesh Info</span>
<span class="t" style="left:432.00px;top:127.61px;font-size:7.9px;color:#585d66;-webkit-text-stroke:0.32px #585d66;transform:scaleX(1.0079);">To</span>
<span class="t" style="left:414.60px;top:136.41px;font-size:7.9px;color:#585d66;-webkit-text-stroke:0.32px #585d66;transform:scaleX(0.9600);">Components</span>
<span class="t" style="left:487.90px;top:132.11px;font-size:7.9px;color:#fff;-webkit-text-stroke:0.32px #fff;transform:scaleX(0.9517);">Fill Holes</span>
<span class="t" style="left:850.90px;top:132.11px;font-size:7.9px;color:#fff;-webkit-text-stroke:0.32px #fff;transform:scaleX(0.9082);">Pack</span>
<span class="t" style="left:1056.00px;top:132.11px;font-size:7.9px;color:#fff;-webkit-text-stroke:0.32px #fff;transform:scaleX(0.9434);">Mesh to Points</span>
<span class="t" style="left:1116.40px;top:132.11px;font-size:7.9px;color:#fff;-webkit-text-stroke:0.32px #fff;transform:scaleX(0.9223);">Mesh to Voxels</span>
<span class="t" style="left:1187.90px;top:127.61px;font-size:7.9px;color:#fff;-webkit-text-stroke:0.32px #fff;transform:scaleX(0.9293);">Mesh to</span>
<span class="t" style="left:1178.90px;top:136.41px;font-size:7.9px;color:#fff;-webkit-text-stroke:0.32px #fff;transform:scaleX(0.9212);">Distance Map</span>
<span class="t" style="left:1244.00px;top:127.61px;font-size:7.9px;color:#585d66;-webkit-text-stroke:0.32px #585d66;transform:scaleX(1.0005);">Texture to</span>
<span class="t" style="left:1238.70px;top:136.41px;font-size:7.9px;color:#585d66;-webkit-text-stroke:0.32px #585d66;transform:scaleX(0.9465);">Vertex Colors</span>
<span class="t" style="left:340.80px;top:100.51px;font-size:7.9px;color:#fff;-webkit-text-stroke:0.32px #fff;transform:scaleX(0.9411);">Text on Mesh</span>
<span class="t" style="left:340.80px;top:118.21px;font-size:7.9px;color:#fff;-webkit-text-stroke:0.32px #fff;transform:scaleX(0.9223);">Segment Mesh</span>
<span class="t" style="left:340.80px;top:136.41px;font-size:7.9px;color:#fff;-webkit-text-stroke:0.32px #fff;transform:scaleX(0.9191);">Select Region</span>
<span class="t" style="left:550.00px;top:100.51px;font-size:7.9px;color:#fff;-webkit-text-stroke:0.32px #fff;transform:scaleX(0.9643);">Stitch Two Holes</span>
<span class="t" style="left:550.00px;top:118.21px;font-size:7.9px;color:#585d66;-webkit-text-stroke:0.32px #585d66;transform:scaleX(0.9847);">Extrude</span>
<span class="t" style="left:550.00px;top:136.41px;font-size:7.9px;color:#fff;-webkit-text-stroke:0.32px #fff;transform:scaleX(0.9107);">Remesh</span>
<span class="t" style="left:629.90px;top:100.51px;font-size:7.9px;color:#fff;-webkit-text-stroke:0.32px #fff;transform:scaleX(0.9861);">Subdivide</span>
<span class="t" style="left:629.90px;top:118.21px;font-size:7.9px;color:#fff;-webkit-text-stroke:0.32px #fff;transform:scaleX(0.9241);">Make Delone</span>
<span class="t" style="left:629.90px;top:136.41px;font-size:7.9px;color:#fff;-webkit-text-stroke:0.32px #fff;transform:scaleX(0.9527);">Decimate</span>
<span class="t" style="left:696.00px;top:100.51px;font-size:7.9px;color:#fff;-webkit-text-stroke:0.32px #fff;transform:scaleX(0.9410);">Offset</span>
<span class="t" style="left:696.00px;top:118.21px;font-size:7.9px;color:#fff;-webkit-text-stroke:0.32px #fff;transform:scaleX(0.9409);">Brush</span>
<span class="t" style="left:696.00px;top:136.41px;font-size:7.9px;color:#fff;-webkit-text-stroke:0.32px #fff;transform:scaleX(0.9211);">Reduce Noise</span>
<span class="t" style="left:771.80px;top:100.51px;font-size:7.9px;color:#585d66;-webkit-text-stroke:0.32px #585d66;transform:scaleX(0.9343);">Mesh Boolean</span>
<span class="t" style="left:771.80px;top:118.21px;font-size:7.9px;color:#585d66;-webkit-text-stroke:0.32px #585d66;transform:scaleX(0.9462);">Voxel Boolean</span>
<span class="t" style="left:771.80px;top:136.41px;font-size:7.9px;color:#585d66;-webkit-text-stroke:0.32px #585d66;transform:scaleX(0.9294);">Unite Meshes</span>
<span class="t" style="left:905.60px;top:100.51px;font-size:7.9px;color:#fff;-webkit-text-stroke:0.32px #fff;transform:scaleX(0.9680);">Flip Normals</span>
<span class="t" style="left:905.60px;top:118.21px;font-size:7.9px;color:#fff;-webkit-text-stroke:0.32px #fff;transform:scaleX(0.9429);">Fix Tunnels</span>
<span class="t" style="left:905.60px;top:136.41px;font-size:7.9px;color:#fff;-webkit-text-stroke:0.32px #fff;transform:scaleX(0.9338);">Extrude Base</span>
<span class="t" style="left:973.00px;top:100.51px;font-size:7.9px;color:#fff;-webkit-text-stroke:0.32px #fff;transform:scaleX(0.9709);">Smooth Boundary</span>
<span class="t" style="left:973.00px;top:118.21px;font-size:7.9px;color:#585d66;-webkit-text-stroke:0.32px #585d66;transform:scaleX(0.9631);">Re-position</span>
<span class="t" style="left:973.00px;top:136.41px;font-size:7.9px;color:#fff;-webkit-text-stroke:0.32px #fff;transform:scaleX(0.9390);">Unite Close Vertices</span>
<div class="r" style="left:198.80px;top:172.80px;width:201.70px;height:0.80px;background:#2c3037;border-radius:0;"></div>
<div class="r" style="left:239.80px;top:177.70px;width:158.40px;height:15.40px;background:#0a84fb;border-radius:4px;"></div>
<span class="t" style="left:256.40px;top:181.52px;font-size:8.6px;color:#fff;transform:scaleX(1.0163);">2023-09-12-000203-upperjaw</span>
<div class="r" style="left:202.10px;top:180.00px;width:10.90px;height:11.10px;background:#0a6fe0;border-radius:2px;"></div>
<div class="r" style="left:199.70px;top:563.00px;width:201.40px;height:14.80px;background:#3a3f46;border-radius:4px;"></div>
<span class="t" style="left:218.60px;top:566.45px;font-size:8.8px;color:#fff;-webkit-text-stroke:0.32px #fff;transform:scaleX(1.0989);">Information</span>
<div class="r" style="left:199.70px;top:712.00px;width:201.40px;height:14.40px;background:#3a3f46;border-radius:4px;"></div>
<span class="t" style="left:218.60px;top:715.05px;font-size:8.8px;color:#fff;-webkit-text-stroke:0.32px #fff;transform:scaleX(1.0484);">Transform</span>
<div class="r" style="left:202.50px;top:583.30px;width:128.30px;height:13.40px;background:#000;border-radius:2.5px;"></div>
<span class="t" style="left:208.90px;top:586.02px;font-size:8.6px;color:#fff;transform:scaleX(1.0172);">2023-09-12-000203-upperjaw</span>
<span class="t" style="left:333.90px;top:586.02px;font-size:8.6px;color:#fff;-webkit-text-stroke:0.32px #fff;transform:scaleX(1.0462);">Object Name</span>
<div class="r" style="left:202.50px;top:602.20px;width:83.90px;height:13.90px;background:#000;border-radius:2.5px;"></div>
<span class="t" style="left:229.70px;top:605.22px;font-size:8.6px;color:#7c8087;transform:scaleX(0.9553);">478 212</span>
<span class="t" style="left:290.00px;top:605.22px;font-size:8.6px;color:#fff;-webkit-text-stroke:0.32px #fff;transform:scaleX(0.9729);">Faces</span>
<div class="r" style="left:202.50px;top:619.40px;width:83.90px;height:13.40px;background:#000;border-radius:2.5px;"></div>
<span class="t" style="left:229.70px;top:622.12px;font-size:8.6px;color:#7c8087;transform:scaleX(0.9553);">241 993</span>
<span class="t" style="left:290.00px;top:622.12px;font-size:8.6px;color:#fff;-webkit-text-stroke:0.32px #fff;transform:scaleX(1.0271);">Vertices</span>
<div class="r" style="left:202.50px;top:636.10px;width:83.90px;height:13.30px;background:#000;border-radius:2.5px;"></div>
<span class="t" style="left:208.30px;top:638.72px;font-size:8.6px;color:#5d6168;transform:scaleX(1.0224);">Mesh is not closed</span>
<span class="t" style="left:290.00px;top:638.72px;font-size:8.6px;color:#fff;-webkit-text-stroke:0.32px #fff;transform:scaleX(1.0669);">Volume</span>
<div class="r" style="left:202.5px;top:655.6px;width:40.3px;height:13.3px;background:#000;border-radius:2.5px;overflow:hidden">
<span class="t" style="left:2.40px;top:2.62px;font-size:8.6px;color:#7c8087;transform:scaleX(1.0)">−31.559 mm</span></div>
<div class="r" style="left:246.7px;top:655.6px;width:40.0px;height:13.3px;background:#000;border-radius:2.5px;overflow:hidden">
<span class="t" style="left:2.40px;top:2.62px;font-size:8.6px;color:#7c8087;transform:scaleX(1.0)">−29.798 mm</span></div>
<div class="r" style="left:290.6px;top:655.6px;width:40.2px;height:13.3px;background:#000;border-radius:2.5px;overflow:hidden">
<span class="t" style="left:2.40px;top:2.62px;font-size:8.6px;color:#7c8087;transform:scaleX(1.0)">−13.401 mm</span></div>
<span class="t" style="left:334.40px;top:658.22px;font-size:8.6px;color:#fff;-webkit-text-stroke:0.32px #fff;transform:scaleX(1.0307);">Box min</span>
<div class="r" style="left:202.5px;top:672.2px;width:40.3px;height:13.4px;background:#000;border-radius:2.5px;overflow:hidden">
<span class="t" style="left:2.40px;top:2.72px;font-size:8.6px;color:#7c8087;transform:scaleX(1.0)">33.128 mm</span></div>
<div class="r" style="left:246.7px;top:672.2px;width:40.0px;height:13.4px;background:#000;border-radius:2.5px;overflow:hidden">
<span class="t" style="left:2.40px;top:2.72px;font-size:8.6px;color:#7c8087;transform:scaleX(1.0)">24.049 mm</span></div>
<div class="r" style="left:290.6px;top:672.2px;width:40.2px;height:13.4px;background:#000;border-radius:2.5px;overflow:hidden">
<span class="t" style="left:2.40px;top:2.72px;font-size:8.6px;color:#7c8087;transform:scaleX(1.0)">8.296 mm</span></div>
<span class="t" style="left:334.40px;top:674.92px;font-size:8.6px;color:#fff;-webkit-text-stroke:0.32px #fff;transform:scaleX(1.0223);">Box max</span>
<div class="r" style="left:202.5px;top:688.9px;width:40.3px;height:13.3px;background:#000;border-radius:2.5px;overflow:hidden">
<span class="t" style="left:2.40px;top:2.62px;font-size:8.6px;color:#7c8087;transform:scaleX(1.0)">64.687 mm</span></div>
<div class="r" style="left:246.7px;top:688.9px;width:40.0px;height:13.3px;background:#000;border-radius:2.5px;overflow:hidden">
<span class="t" style="left:2.40px;top:2.62px;font-size:8.6px;color:#7c8087;transform:scaleX(1.0)">53.847 mm</span></div>
<div class="r" style="left:290.6px;top:688.9px;width:40.2px;height:13.3px;background:#000;border-radius:2.5px;overflow:hidden">
<span class="t" style="left:2.40px;top:2.62px;font-size:8.6px;color:#7c8087;transform:scaleX(1.0)">21.697 mm</span></div>
<span class="t" style="left:334.40px;top:691.52px;font-size:8.6px;color:#fff;-webkit-text-stroke:0.32px #fff;transform:scaleX(0.9998);">Box size</span>
<div class="r" style="left:202.50px;top:731.40px;width:128.30px;height:13.00px;background:#000;border-radius:2.5px;"></div>
<span class="t" style="left:264.57px;top:733.92px;font-size:8.6px;color:#fff;transform:scaleX(0.8500);">1</span>
<div class="r" style="left:337.20px;top:732.80px;width:11.10px;height:10.80px;background:#0a6fe0;border-radius:2px;"></div>
<span class="t" style="left:356.70px;top:733.92px;font-size:8.6px;color:#fff;transform:scaleX(1.0206);">Uni-scale</span>
<div class="r" style="left:202.5px;top:750.6px;width:40.3px;height:13.3px;background:#000;border-radius:2.5px;overflow:hidden">
<span class="t" style="left:16.70px;top:2.62px;font-size:8.6px;color:#fff;transform:scaleX(0.84)">0°</span></div>
<div class="r" style="left:246.7px;top:750.6px;width:40.0px;height:13.3px;background:#000;border-radius:2.5px;overflow:hidden">
<span class="t" style="left:16.55px;top:2.62px;font-size:8.6px;color:#fff;transform:scaleX(0.84)">0°</span></div>
<div class="r" style="left:290.6px;top:750.6px;width:40.2px;height:13.3px;background:#000;border-radius:2.5px;overflow:hidden">
<span class="t" style="left:16.65px;top:2.62px;font-size:8.6px;color:#fff;transform:scaleX(0.84)">0°</span></div>
<span class="t" style="left:334.40px;top:753.22px;font-size:8.6px;color:#fff;-webkit-text-stroke:0.32px #fff;transform:scaleX(1.0171);">Rotation XYZ</span>
<div class="r" style="left:202.5px;top:769.4px;width:40.3px;height:13.4px;background:#000;border-radius:2.5px;overflow:hidden">
<span class="t" style="left:11.12px;top:2.72px;font-size:8.6px;color:#fff;transform:scaleX(0.84)">0 mm</span></div>
<div class="r" style="left:246.7px;top:769.4px;width:40.0px;height:13.4px;background:#000;border-radius:2.5px;overflow:hidden">
<span class="t" style="left:10.97px;top:2.72px;font-size:8.6px;color:#fff;transform:scaleX(0.84)">0 mm</span></div>
<div class="r" style="left:290.6px;top:769.4px;width:40.2px;height:13.4px;background:#000;border-radius:2.5px;overflow:hidden">
<span class="t" style="left:11.07px;top:2.72px;font-size:8.6px;color:#fff;transform:scaleX(0.84)">0 mm</span></div>
<span class="t" style="left:334.40px;top:772.12px;font-size:8.6px;color:#fff;-webkit-text-stroke:0.32px #fff;transform:scaleX(1.1036);">Translation</span>
<div class="r" style="left:549.00px;top:150.00px;width:437.50px;height:26.40px;background:#30343b;border-radius:0;"></div>
<div class="r" style="left:406.50px;top:764.80px;width:8.50px;height:10.40px;background:#14161b;border-radius:2px;"></div>
<span class="t" style="left:408.80px;top:766.06px;font-size:8.2px;color:#fff;font-weight:700;transform:scaleX(0.8789);">0</span>
<div class="r" style="left:535.80px;top:764.80px;width:13.50px;height:10.40px;background:#14161b;border-radius:2px;"></div>
<span class="t" style="left:538.00px;top:766.06px;font-size:8.2px;color:#fff;font-weight:700;transform:scaleX(1.0108);">10</span>
<span class="t" style="left:1272.30px;top:768.71px;font-size:9.2px;color:#fff;font-weight:700;transform:scaleX(0.9729);">Orthographic</span>
<span class="t" style="left:1274.30px;top:678.73px;font-size:5.4px;color:#ddd;font-weight:700;transform:scaleX(1.0322);">Z</span>
<span class="t" style="left:1241.60px;top:734.73px;font-size:5.4px;color:#ddd;font-weight:700;transform:scaleX(1.0025);">X</span>
<span class="t" style="left:1307.60px;top:735.73px;font-size:5.4px;color:#ddd;font-weight:700;transform:scaleX(1.0025);">Y</span>
<svg class="r" style="left:0;top:0" width="1536" height="864" viewBox="0 0 1536 864"><path d="M210.6,81.6 V80.3 H215.8 V85.6" fill="none" stroke="#f2f2f2" stroke-width="0.9" /><rect x="208.1" y="81.9" width="5.40" height="7.90" rx="0.5" fill="#f2f2f2" /><rect x="212.6" y="86.2" width="4.60" height="3.60" rx="0" fill="#000" /><rect x="213.0" y="86.5" width="4.20" height="3.30" rx="0.4" fill="#f2f2f2" /><rect x="213.6" y="87.3" width="3.00" height="0.90" rx="0" fill="#000" /><path d="M222.35,84.24 L224.80,86.36 L227.25,84.24" fill="none" stroke="#fff" stroke-width="1.35" stroke-linecap="round" stroke-linejoin="round"/><path d="M241.1,88.2 V81.3 H244.2 L245.2,82.5 H249.6 V84.0" fill="none" stroke="#f2f2f2" stroke-width="1.0" stroke-linejoin="round"/><path d="M240.9,88.5 L242.2,84.6 H250.2 L249.2,88.5 Z" fill="#f2f2f2" stroke="#f2f2f2" stroke-width="0.7" stroke-linejoin="round"/><path d="M264.4,80.8 H271.0 L272.4,82.2 V88.7 H264.4 Z" fill="none" stroke="#f2f2f2" stroke-width="1.4" stroke-linejoin="round"/><rect x="265.0" y="80.4" width="7.00" height="4.00" rx="0" fill="#f2f2f2" /><rect x="266.9" y="81.3" width="3.50" height="1.30" rx="0.3" fill="#000" /><rect x="269.0" y="84.9" width="7.20" height="7.00" rx="0" fill="#000" /><rect x="269.7" y="85.5" width="5.90" height="5.80" rx="0.8" fill="#f2f2f2" /><path d="M271.65,85.5 V91.3 M273.65,85.5 V91.3 M269.7,87.4 H275.6 M269.7,89.4 H275.6" fill="none" stroke="#000" stroke-width="0.55" /><path d="M288.6,87.0 V89.2 H297.3 V87.0" fill="none" stroke="#f2f2f2" stroke-width="1.25" stroke-linejoin="round"/><path d="M292.95,86.6 V81.8 M290.6,83.6 L292.95,81.2 L295.3,83.6" fill="none" stroke="#f2f2f2" stroke-width="1.25" stroke-linejoin="round" stroke-linecap="round"/><path d="M315.2,82.5 H317.2 A3.8,3.8 0 1 1 314.2,88.6" fill="none" stroke="#f2f2f2" stroke-width="1.4" stroke-linecap="round"/><path d="M312.1,80.6 L312.6,84.9 L316.8,84.0 Z" fill="#f2f2f2" stroke="#f2f2f2" stroke-width="0.3" /><path d="M326.55,84.21 L329.10,86.39 L331.65,84.21" fill="none" stroke="#fff" stroke-width="1.35" stroke-linecap="round" stroke-linejoin="round"/><path d="M350.6,82.5 H348.8 A3.8,3.8 0 1 0 351.8,88.6" fill="none" stroke="#4f5359" stroke-width="1.3" stroke-linecap="round"/><path d="M353.8,80.3 L353.4,84.9 L349.2,84.0 Z" fill="#4f5359" stroke="#4f5359" stroke-width="0.3" /><path d="M358.55,84.21 L361.10,86.39 L363.65,84.21" fill="none" stroke="#4f5359" stroke-width="1.3" stroke-linecap="round" stroke-linejoin="round"/><circle cx="1273.2" cy="84.1" r="3.1" fill="none" stroke="#8a8e95" stroke-width="1.2" /><path d="M1275.5,86.6 L1278.4,89.5" fill="none" stroke="#8a8e95" stroke-width="1.4" stroke-linecap="round"/><circle cx="1300.4" cy="85.4" r="4.6" fill="#f2f2f2" /><text x="1300.4" y="88.4" font-family="Liberation Sans" font-weight="700" font-size="8" text-anchor="middle" fill="#000">?</text><path d="M1329.6,81.6 L1325.4,85.5 L1329.6,89.4" fill="none" stroke="#f2f2f2" stroke-width="1.7" stroke-linecap="round" stroke-linejoin="round"/><path d="M230.5,106.2 L223.7,110.3 L223.7,117.1 L230.5,121.2 M230.5,106.2 L237.4,110.3 L230.5,114 L223.7,110.3 M230.5,106.2 V121.2 M223.7,117.1 L230.5,114 M223.7,110.3 L230.5,121.2 M237.4,110.3 L223.7,117.1" fill="none" stroke="#0a7ddc" stroke-width="0.9" /><circle cx="230.5" cy="106.2" r="1.15" fill="#0a7ddc" /><circle cx="223.7" cy="110.3" r="1.15" fill="#0a7ddc" /><circle cx="237.4" cy="110.3" r="1.15" fill="#0a7ddc" /><circle cx="230.5" cy="114" r="1.15" fill="#0a7ddc" /><circle cx="223.7" cy="117.1" r="1.15" fill="#0a7ddc" /><circle cx="230.5" cy="121.2" r="1.15" fill="#0a7ddc" /><path d="M236.4,115.3 V122.6 M232.8,119 H240.1" fill="none" stroke="#f03048" stroke-width="2.2" /><path d="M287.6,107.2 L296.2,113.8 L291.2,120.2 Z" fill="none" stroke="#0b9a12" stroke-width="1.0" stroke-linejoin="round"/><circle cx="298.4" cy="111.2" r="4.1" fill="#f0940a" /><rect x="297.9" y="110.6" width="1.00" height="3.00" rx="0" fill="#3a2a05" /><circle cx="298.4" cy="109.3" r="0.65" fill="#3a2a05" /><circle cx="432.8" cy="113.95" r="6.5" fill="none" stroke="#5f636a" stroke-width="0.85" /><circle cx="439.6" cy="113.95" r="6.5" fill="none" stroke="#5f636a" stroke-width="0.85" /><path d="M462.55,138.24 L465.00,140.36 L467.45,138.24" fill="none" stroke="#fff" stroke-width="1.6" stroke-linecap="round" stroke-linejoin="round"/><ellipse cx="503.3" cy="117.9" rx="6.2" ry="2.6" fill="none" stroke="#f0940a" stroke-width="1.0" stroke-dasharray="1.7 1"/><ellipse cx="503.1" cy="112.1" rx="8.2" ry="3.7" fill="#0a7ddc" /><path d="M858.9,105.9 L866.6,109.8 V118 L858.9,121.8 L851.2,118 V109.8 Z M851.2,109.8 L858.9,113.6 L866.6,109.8 M858.9,113.6 V121.8" fill="none" stroke="#0a7ddc" stroke-width="1.15" stroke-linejoin="round"/><circle cx="1078.2" cy="121.0" r="0.72" fill="#0b9a12" /><circle cx="1079.88" cy="119.23" r="0.72" fill="#0b9a12" /><circle cx="1081.57" cy="117.47" r="0.72" fill="#0b9a12" /><circle cx="1083.25" cy="115.7" r="0.72" fill="#0b9a12" /><circle cx="1084.93" cy="113.93" r="0.72" fill="#0b9a12" /><circle cx="1086.62" cy="112.17" r="0.72" fill="#0b9a12" /><circle cx="1088.3" cy="110.4" r="0.72" fill="#0b9a12" /><circle cx="1077.47" cy="118.57" r="0.72" fill="#0b9a12" /><circle cx="1079.15" cy="116.8" r="0.72" fill="#0b9a12" /><circle cx="1080.83" cy="115.03" r="0.72" fill="#0b9a12" /><circle cx="1082.52" cy="113.27" r="0.72" fill="#0b9a12" /><circle cx="1084.2" cy="111.5" r="0.72" fill="#0b9a12" /><circle cx="1085.88" cy="109.73" r="0.72" fill="#0b9a12" /><circle cx="1076.73" cy="116.13" r="0.72" fill="#0b9a12" /><circle cx="1078.42" cy="114.37" r="0.72" fill="#0b9a12" /><circle cx="1080.1" cy="112.6" r="0.72" fill="#0b9a12" /><circle cx="1081.78" cy="110.83" r="0.72" fill="#0b9a12" /><circle cx="1083.47" cy="109.07" r="0.72" fill="#0b9a12" /><circle cx="1076.0" cy="113.7" r="0.72" fill="#0b9a12" /><circle cx="1077.68" cy="111.93" r="0.72" fill="#0b9a12" /><circle cx="1079.37" cy="110.17" r="0.72" fill="#0b9a12" /><circle cx="1081.05" cy="108.4" r="0.72" fill="#0b9a12" /><circle cx="1075.27" cy="111.27" r="0.72" fill="#0b9a12" /><circle cx="1076.95" cy="109.5" r="0.72" fill="#0b9a12" /><circle cx="1078.63" cy="107.73" r="0.72" fill="#0b9a12" /><circle cx="1074.53" cy="108.83" r="0.72" fill="#0b9a12" /><circle cx="1076.22" cy="107.07" r="0.72" fill="#0b9a12" /><circle cx="1073.8" cy="106.4" r="0.72" fill="#0b9a12" /><path d="M1136.6,107.86 L1139.06,105.4 H1145.4 V111.14 L1142.94,113.6 H1136.6 Z" fill="#f0940a" /><rect x="1139.24" y="109.34" width="2.46" height="2.62" rx="0.5" fill="#1c1f27" opacity=".75"/><path d="M1132.0,114.95 L1134.35,112.6 H1140.4 V119.05 L1138.05,121.4 H1132.0 Z" fill="#0db020" /><rect x="1134.52" y="116.54" width="2.35" height="3.10" rx="0.5" fill="#1c1f27" opacity=".75"/><path d="M1140.4,115.06 L1142.86,112.6 H1149.2 V118.94 L1146.74,121.4 H1140.4 Z" fill="#f03048" /><rect x="1143.04" y="116.65" width="2.46" height="2.99" rx="0.5" fill="#1c1f27" opacity=".75"/><path d="M1193.2,105.9 L1209.2,109.7" fill="none" stroke="#f0940a" stroke-width="1.4" stroke-dasharray="1.5 0.8"/><path d="M1193.60,120.8 V109.60" fill="none" stroke="#f0940a" stroke-width="0.95" /><path d="M1195.32,120.8 V112.20" fill="none" stroke="#f0940a" stroke-width="0.95" /><path d="M1197.04,120.8 V114.60" fill="none" stroke="#f0940a" stroke-width="0.95" /><path d="M1198.76,120.8 V116.80" fill="none" stroke="#f0940a" stroke-width="0.95" /><path d="M1200.48,120.8 V118.40" fill="none" stroke="#f0940a" stroke-width="0.95" /><path d="M1202.20,120.8 V117.20" fill="none" stroke="#f0940a" stroke-width="0.95" /><path d="M1203.92,120.8 V115.60" fill="none" stroke="#f0940a" stroke-width="0.95" /><path d="M1205.64,120.8 V113.80" fill="none" stroke="#f0940a" stroke-width="0.95" /><path d="M1207.36,120.8 V112.00" fill="none" stroke="#f0940a" stroke-width="0.95" /><path d="M1209.08,120.8 V110.40" fill="none" stroke="#f0940a" stroke-width="0.95" /><circle cx="1264.6" cy="111.8" r="4.3" fill="none" stroke="#5a5e66" stroke-width="2.8" stroke-dasharray="2.5 1.0"/><path d="M1259.6,114.4 L1253.6,120.2 M1261.3,116.2 L1255.6,121.8 M1263.2,117.6 L1258.4,122.4 M1258.4,112.6 L1253.4,117.4" fill="none" stroke="#5a5e66" stroke-width="0.9" /><rect x="328.5" y="101.5" width="7.80" height="4.90" rx="0.6" fill="#f0940a" /><path d="M330.0,102.6 V105.3 M331.6,102.6 H330.6 M331.8,102.6 V105.3 H333.2 V102.6 Z M334.1,102.6 H335.3 M334.1,105.3 H335.3 M334.1,102.6 V105.3" fill="none" stroke="#5a3500" stroke-width="0.6" /><path d="M329.0,118.6 L332.6,119.6 L331.4,125.2 Z" fill="none" stroke="#0b9a12" stroke-width="0.9" stroke-linejoin="round"/><path d="M333.0,119.4 L336.2,120.0 L334.2,122.6 Z" fill="none" stroke="#f03048" stroke-width="0.8" stroke-linejoin="round"/><path d="M332.4,135.0 L336.4,137.0 V141.2 L332.4,143.2 L328.4,141.2 V137.0 Z M328.4,137.0 L332.4,139.0 L336.4,137.0 M332.4,139 V143.2" fill="none" stroke="#0a7ddc" stroke-width="0.9" stroke-linejoin="round"/><path d="M333.2,139.6 L335.8,138.3 V140.9 L333.2,142.2 Z" fill="#f0940a" /><path d="M539.6,105.8 L544.8,100.9" fill="none" stroke="#0b9a12" stroke-width="2.4" stroke-linecap="round"/><path d="M539.6,105.8 L544.8,100.9" fill="none" stroke="#1c1f27" stroke-width="0.7" /><circle cx="539.3" cy="106.1" r="1.35" fill="#f0940a" /><circle cx="545.0" cy="100.8" r="1.25" fill="#f0940a" /><path d="M539.6,118.2 H544.2 V122.4 H539.6 Z M537.8,123.4 H546 M539,125.2 H544.8" fill="none" stroke="#5c6068" stroke-width="0.9" /><rect x="537.6" y="135.7" width="8.70" height="7.40" rx="0.8" fill="none" stroke="#0a7ddc" stroke-width="0.9" /><path d="M539,137.2 L540.4,141.8 L541.9,138.2 L543.4,141.8 L544.9,137.2" fill="none" stroke="#f0940a" stroke-width="1.2" stroke-linejoin="round"/><rect x="616.8" y="100.2" width="9.40" height="7.40" rx="0.6" fill="none" stroke="#0a7ddc" stroke-width="0.9" /><path d="M617,100.2 H626" fill="none" stroke="#f0940a" stroke-width="1.0" stroke-dasharray="1.2 0.8"/><path d="M618.4,101 L621.5,107.2 L624.6,101 M621.5,107.2 V104" fill="none" stroke="#0a7ddc" stroke-width="0.8" /><path d="M617.4,121.7 L623.2,118.3 L625.6,121.8 L623.2,125.3 Z" fill="none" stroke="#0b9a12" stroke-width="0.95" stroke-linejoin="round"/><path d="M623.2,118.6 V125" fill="none" stroke="#f0940a" stroke-width="0.9" /><rect x="616.8" y="135.6" width="9.40" height="7.50" rx="0.6" fill="none" stroke="#0b9a12" stroke-width="0.9" /><path d="M617,135.6 H626" fill="none" stroke="#f0940a" stroke-width="1.0" stroke-dasharray="1.2 0.8"/><path d="M618.4,136.4 L621.5,142.6 L624.6,136.4" fill="none" stroke="#0b9a12" stroke-width="0.8" /><circle cx="685.6" cy="103.8" r="3.2" fill="none" stroke="#0b9a12" stroke-width="0.9" /><circle cx="685.6" cy="103.8" r="1.0" fill="#f03048" /><circle cx="690.2" cy="103.8" r="3.0" fill="none" stroke="#f0940a" stroke-width="0.9" stroke-dasharray="1.4 0.9"/><path d="M688.2,103.8 H691" fill="none" stroke="#0a7ddc" stroke-width="0.9" /><path d="M690.3,118.7 L687.6,122.8" fill="none" stroke="#0a7ddc" stroke-width="1.7" stroke-linecap="round"/><path d="M687.3,123.2 L686.2,125.0" fill="none" stroke="#f0940a" stroke-width="1.3" stroke-linecap="round"/><path d="M687.4,136.1 A3.4,3.4 0 0 1 687.4,142.9 Z" fill="#0a7ddc" /><path d="M687.4,136.1 L686,136.6 L685.2,136.2 L684.6,137.4 L683.6,138 L684.2,139 L683.6,140.2 L684.6,141 L685,142.2 L686.2,142.2 L687.4,142.9 Z" fill="#f03048" /><path d="M746.5500000000001,139.09 L748.20,140.71 L749.85,139.09" fill="none" stroke="#fff" stroke-width="1.3" stroke-linecap="round" stroke-linejoin="round"/><path d="M759.4,102 H761 M759.4,106.8 H761 M759.4,102 V106.8 M768.6,102 H767 M768.6,106.8 H767 M768.6,102 V106.8" fill="none" stroke="#5c6068" stroke-width="0.9" /><circle cx="762.8" cy="104.4" r="1.5" fill="#5c6068" /><circle cx="765.2" cy="104.4" r="1.5" fill="#5c6068" /><rect x="758.8" y="119.2" width="10.40" height="5.60" rx="2.8" fill="none" stroke="#5c6068" stroke-width="0.9" /><path d="M762.4,119.4 V124.6 M765.6,119.4 V124.6 M764,119.4 V124.6" fill="none" stroke="#5c6068" stroke-width="0.8" /><path d="M761.2,137.4 L765.4,135 L768,136.4 V140.2 L763.8,142.6 L761.2,143.6 L759.4,142.4 V139.2 Z" fill="#5c6068" /><path d="M761.2,140 L765.4,137.6" fill="none" stroke="#1c1f27" stroke-width="0.7" /><path d="M894.2,103.4 L899.4,108.0" fill="none" stroke="#0a7ddc" stroke-width="1.5" stroke-linecap="round"/><path d="M896.2,100.4 L901.6,105.6" fill="none" stroke="#f0940a" stroke-width="1.7" stroke-linecap="round"/><circle cx="897.1" cy="122.1" r="3.7" fill="none" stroke="#0a7ddc" stroke-width="0.95" /><path d="M895.0,124.6 V122.6 A2.1,2.1 0 0 1 899.2,122.6 V124.6 Z" fill="#f0940a" /><path d="M897.3,135.6 V140.6 M895.2,137.6 L897.3,135.4 L899.4,137.6" fill="none" stroke="#0a7ddc" stroke-width="0.9" /><path d="M894.4,139.2 L897.3,140.8 L900.2,139.2 M897.3,140.8 V143" fill="none" stroke="#f0940a" stroke-width="0.9" /><rect x="959.6" y="101.2" width="3.20" height="6.00" rx="0.5" fill="#0a7ddc" /><path d="M962.8,101.6 H967 M962.8,106.8 H967" fill="none" stroke="#f0940a" stroke-width="0.8" /><ellipse cx="967.4" cy="104.2" rx="2.3" ry="3.0" fill="#0cc01c" /><path d="M1038.75,103.06 L1040.50,104.74 L1042.25,103.06" fill="none" stroke="#fff" stroke-width="1.3" stroke-linecap="round" stroke-linejoin="round"/><circle cx="964.6" cy="122.1" r="3.6" fill="none" stroke="#5c6068" stroke-width="0.9" /><path d="M964.6,118.5 A3.6,3.6 0 0 1 964.6,125.7 Z" fill="#5c6068" /><path d="M963.4,136.4 H966 M963.6,137 L961.2,142.6 H968.2 L965.8,137" fill="none" stroke="#0a7ddc" stroke-width="0.95" stroke-linejoin="round"/><path d="M963.2,135.9 H966.2" fill="none" stroke="#f0940a" stroke-width="1.1" /><path d="M207,158.4 V165 M204.9,163.2 L207,165.5 L209.1,163.2" fill="none" stroke="#dcdcdc" stroke-width="1.1" stroke-linejoin="round"/><text x="211.2" y="161.0" font-family="Liberation Sans" font-weight="700" font-size="6.6" fill="#dcdcdc">A</text><text x="211.5" y="167.4" font-family="Liberation Sans" font-weight="700" font-size="6.6" fill="#dcdcdc">Z</text><rect x="224.7" y="156.8" width="10.00" height="9.40" rx="1.2" fill="none" stroke="#dcdcdc" stroke-width="1.0" stroke-dasharray="1.6 1"/><circle cx="227.6" cy="159.6" r="1.25" fill="#dcdcdc" /><circle cx="231.8" cy="159.6" r="1.25" fill="#dcdcdc" /><circle cx="227.6" cy="163.6" r="1.25" fill="#dcdcdc" /><rect x="245.2" y="156.8" width="9.20" height="9.40" rx="1.2" fill="none" stroke="#dcdcdc" stroke-width="1.0" stroke-dasharray="1.6 1"/><path d="M245.2,156.8 L254.6,166.4" fill="none" stroke="#dcdcdc" stroke-width="1.0" /><circle cx="269.8" cy="161.5" r="5.0" fill="none" stroke="#dcdcdc" stroke-width="1.0" /><path d="M269.8,164 V159.4 M267.8,161.2 L269.8,159.1 L271.8,161.2" fill="none" stroke="#dcdcdc" stroke-width="1.0" /><circle cx="289.6" cy="161.5" r="5.0" fill="none" stroke="#dcdcdc" stroke-width="1.0" /><path d="M289.6,159 V163.6 M287.6,161.8 L289.6,163.9 L291.6,161.8" fill="none" stroke="#dcdcdc" stroke-width="1.0" /><path d="M310.3,158.4 H305.1 V164.8 H310.3 M311,156.2 V167.4 M311.6,158.2 C314.4,158.8 314.4,164.4 311.6,165" fill="none" stroke="#dcdcdc" stroke-width="0.95" /><path d="M327.6,157.3 H331.8 M326.6,158.8 H332.8 M327,159 V165.4 Q327,166.3 328,166.3 H331.4 Q332.4,166.3 332.4,165.4 V159" fill="none" stroke="#dcdcdc" stroke-width="1.0" /><rect x="328.4" y="161" width="2.60" height="3.20" rx="0" fill="#9a9a9a" /><path d="M204.3,185.3 L207.0,188.4 L211.2,182.8" fill="none" stroke="#f2f2f2" stroke-width="1.5" stroke-linecap="round" stroke-linejoin="round"/><path d="M226.3,181.2 L221.2,189.6 H231.4 Z M221.2,189.6 L229.1,185.6 M221.2,189.6 L226.3,181.2" fill="none" stroke="#f2f2f2" stroke-width="1.0" stroke-linejoin="round"/><path d="M245,183 L247.9,185.5 L245,188" fill="none" stroke="#f2f2f2" stroke-width="1.4" stroke-linecap="round" stroke-linejoin="round"/><path d="M206.75,569.73 L208.90,571.67 L211.05,569.73" fill="none" stroke="#fff" stroke-width="1.8" stroke-linecap="round" stroke-linejoin="round"/><path d="M206.75,718.63 L208.90,720.57 L211.05,718.63" fill="none" stroke="#fff" stroke-width="1.8" stroke-linecap="round" stroke-linejoin="round"/><circle cx="393.7" cy="716.2" r="0.95" fill="#f2f2f2" /><circle cx="393.7" cy="719.2" r="0.95" fill="#f2f2f2" /><circle cx="393.7" cy="722.2" r="0.95" fill="#f2f2f2" /><path d="M339.6,738.4 L342.1,741.3 L346.2,735.6" fill="none" stroke="#f2f2f2" stroke-width="1.4" stroke-linecap="round" stroke-linejoin="round"/><path d="M563.0,160.0 V158.6 Q563.0,157.6 564.0,157.6 H565.4 M570.8,157.6 H572.2 Q573.2,157.6 573.2,158.6 V160.0 M573.2,165.2 V166.6 Q573.2,167.6 572.2,167.6 H570.8 M565.4,167.6 H564.0 Q563.0,167.6 563.0,166.6 V165.2" fill="none" stroke="#f2f2f2" stroke-width="1.3" stroke-linecap="round"/><path d="M581.35,161.78 L584.00,164.02 L586.65,161.78" fill="none" stroke="#fff" stroke-width="1.35" stroke-linecap="round" stroke-linejoin="round"/><path d="M605.9,158.6 L606.3,165.6 L608.0,164.0 L609.4,166.8 L610.6,166.2 L609.3,163.4 L611.6,163.2 Z" fill="#f2f2f2" /><path d="M637.6,157.6 V168.4 M632.2,163 H643 M636,159.2 L637.6,157.4 L639.2,159.2 M636,166.8 L637.6,168.6 L639.2,166.8 M633.8,161.4 L632,163 L633.8,164.6 M641.4,161.4 L643.2,163 L641.4,164.6" fill="none" stroke="#f2f2f2" stroke-width="1.1" stroke-linecap="round" stroke-linejoin="round"/><rect x="661.6" y="157.9" width="10.60" height="8.70" rx="1.4" fill="none" stroke="#f2f2f2" stroke-width="1.2" /><path d="M662.2,166.0 V159.6 Q662.2,158.5 663.3,158.5 H670.6 Z" fill="#f2f2f2" /><circle cx="670.8" cy="166.4" r="2.7" fill="#30343b" /><circle cx="670.8" cy="166.4" r="2.1" fill="#f2f2f2" /><circle cx="670.8" cy="166.4" r="0.8" fill="#30343b" /><circle cx="696" cy="163" r="5.5" fill="none" stroke="#f2f2f2" stroke-width="1.2" /><circle cx="696" cy="163" r="1.2" fill="#f2f2f2" /><path d="M696,163 V157.6 M696,163 L691.4,165.8 M696,163 L700.6,165.8" fill="none" stroke="#f2f2f2" stroke-width="1.2" /><rect x="720.6" y="157.8" width="10.20" height="10.20" rx="0" fill="none" stroke="#f2f2f2" stroke-width="1.0" stroke-dasharray="1.7 1.1"/><rect x="719.6" y="156.8" width="2.00" height="2.00" rx="0" fill="#f2f2f2" /><rect x="729.8" y="156.8" width="2.00" height="2.00" rx="0" fill="#f2f2f2" /><rect x="719.6" y="167" width="2.00" height="2.00" rx="0" fill="#f2f2f2" /><rect x="729.8" y="167" width="2.00" height="2.00" rx="0" fill="#f2f2f2" /><path d="M723.6,162.8 L725.2,164.6 L728.2,160.8" fill="none" stroke="#f2f2f2" stroke-width="1.0" stroke-linecap="round"/><rect x="751.4" y="157.2" width="8.00" height="4.20" rx="0" fill="#f2f2f2" /><circle cx="753.4" cy="165.6" r="4.3" fill="#f2f2f2" stroke="#30343b" stroke-width="0.8"/><path d="M759.0,159.6 L762.2,168.8 H755.6 Z" fill="#f2f2f2" stroke="#30343b" stroke-width="0.8"/><rect x="783.2" y="156.6" width="8.40" height="8.20" rx="1" fill="#f2f2f2" /><rect x="778.2" y="161.4" width="8.60" height="8.00" rx="1.4" fill="#30343b" stroke="#f2f2f2" stroke-width="1.1" /><path d="M808.4,157.2 L820.8,163.8 L816.6,167.2 Z" fill="none" stroke="#f2f2f2" stroke-width="1.1" stroke-linejoin="round"/><path d="M808.4,157.2 L816.8,164.0" fill="none" stroke="#f2f2f2" stroke-width="0.9" /><path d="M808.6,160 Q808.6,166.6 814.6,167.4 Z" fill="#f2f2f2" /><ellipse cx="843.6" cy="161.9" rx="5.6" ry="3.5" fill="none" stroke="#f2f2f2" stroke-width="1.1" /><path d="M841.4,165 Q840.2,167.4 842.6,168 M841.4,165 L843.8,167.4" fill="none" stroke="#f2f2f2" stroke-width="0.9" stroke-linecap="round"/><path d="M856.95,161.81 L859.50,163.99 L862.05,161.81" fill="none" stroke="#fff" stroke-width="1.35" stroke-linecap="round" stroke-linejoin="round"/><rect x="877.6" y="156.8" width="12.00" height="12.20" rx="1.6" fill="none" stroke="#f2f2f2" stroke-width="1.0" stroke-dasharray="1.8 1.1"/><path d="M882.0,161.3 L885.2,164.5 M885.2,161.3 L882.0,164.5" fill="none" stroke="#f2f2f2" stroke-width="1.0" stroke-linecap="round"/><path d="M896.95,161.78 L899.60,164.02 L902.25,161.78" fill="none" stroke="#fff" stroke-width="1.35" stroke-linecap="round" stroke-linejoin="round"/><path d="M918.8,158.2 L928.8,161.2 L922.6,167.4 Z" fill="none" stroke="#f2f2f2" stroke-width="0.9" stroke-dasharray="1.3 0.9" stroke-linejoin="round"/><path d="M922,159.6 L924.6,164.6 M920.6,162.6 L926,162.2 M923.6,160.2 L921.6,165" fill="none" stroke="#f2f2f2" stroke-width="0.7" /><rect x="946.8" y="157.2" width="12.40" height="12.20" rx="3" fill="none" stroke="#676b73" stroke-width="1.1" /><path d="M950.4,163.6 L952.4,165.6 L955.8,161.4" fill="none" stroke="#676b73" stroke-width="1.0" stroke-linecap="round"/><rect x="968.6" y="155.2" width="8.60" height="16.00" rx="3" fill="none" stroke="#33373e" stroke-width="0.8" /><circle cx="972.9" cy="159.4" r="1.15" fill="#f2f2f2" /><circle cx="972.9" cy="163.2" r="1.15" fill="#f2f2f2" /><circle cx="972.9" cy="167.0" r="1.15" fill="#f2f2f2" /></svg>
<div class="r" style="left:1338.80px;top:61.00px;width:1.90px;height:717.00px;background:#c4c4c4;border-radius:0;"></div>
<div class="r" style="left:196.50px;top:776.30px;width:1144.20px;height:1.70px;background:#b9b9b9;border-radius:0;"></div>
</div></div>
<svg style="position:absolute;left:0;top:0" width="1536" height="864" viewBox="0 0 1536 864">
<path d="M15.1,831.4 H155 V830.6 H1382.2 V831.4 H1521 V849 A23.5,23.5 0 0 1 1497.5,872.5 H38.6 A23.5,23.5 0 0 1 15.1,849 Z" fill="#989898"/>
<path d="M668.4,830.6 H868 V831.8 A17,17 0 0 1 851,848.8 H685.4 A17,17 0 0 1 668.4,831.8 Z" fill="#737373"/>
</svg>
</body></html>
